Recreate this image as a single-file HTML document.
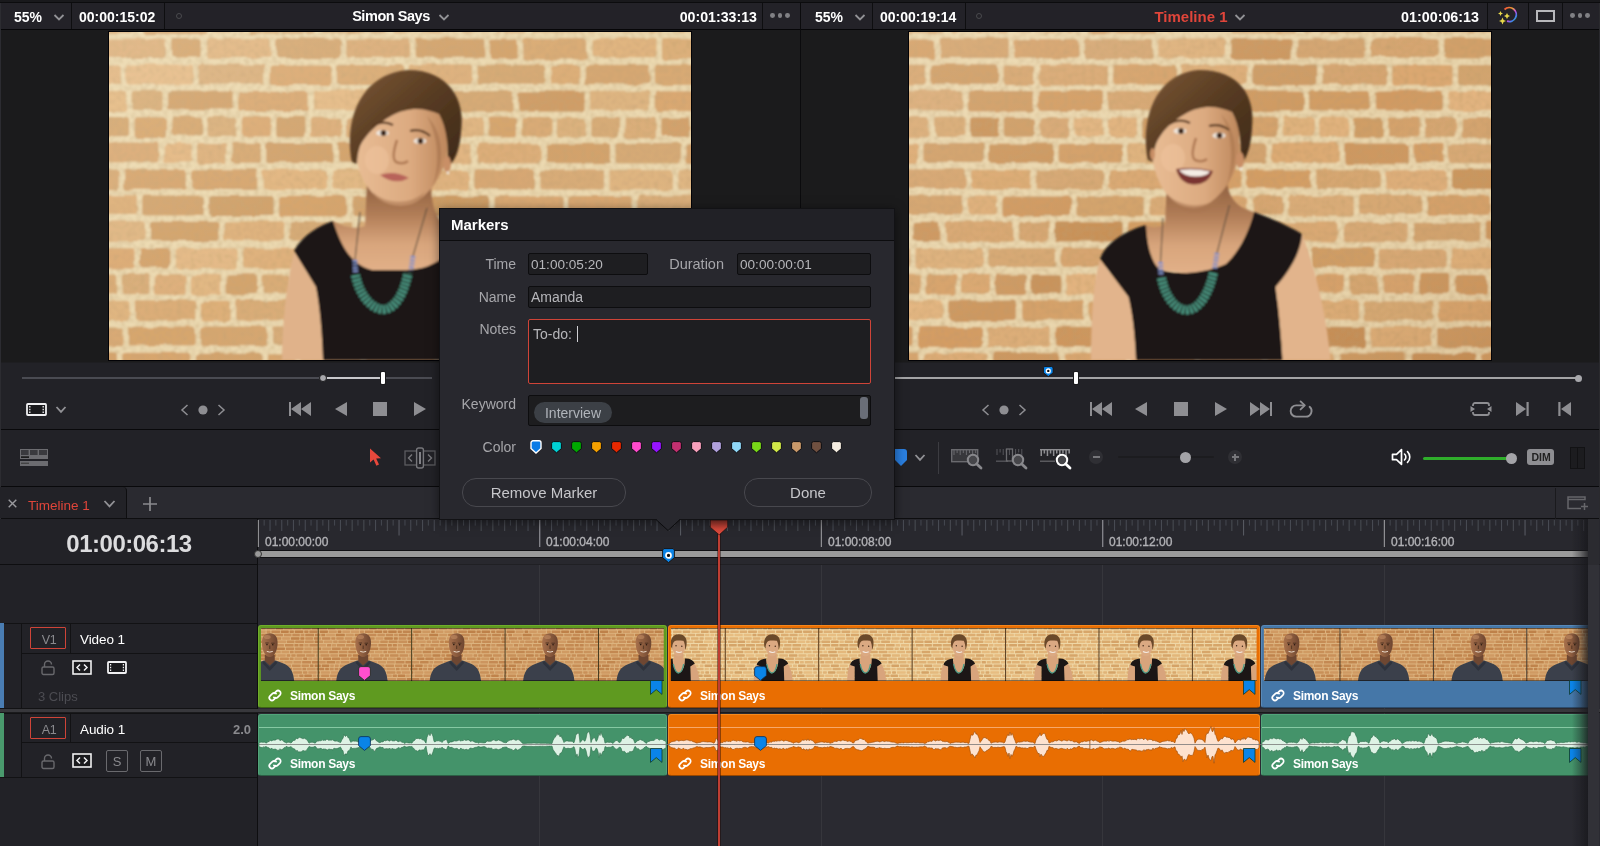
<!DOCTYPE html><html><head><meta charset="utf-8"><title>Timeline 1</title><style>
*{box-sizing:border-box;margin:0;padding:0}
html,body{width:1600px;height:846px;overflow:hidden;background:#28282e;font-family:"Liberation Sans",sans-serif;}
#app{position:relative;width:1600px;height:846px;overflow:hidden;background:#28282e;color:#fff}
.a{position:absolute}
.t{position:absolute;white-space:nowrap;line-height:1;will-change:transform}
.vl{position:absolute;width:1px;background:#0e0e10}
.hl{position:absolute;height:1px;background:#0e0e10}
svg{position:absolute;overflow:visible}
</style></head><body><div id="app">
<div class="a" style="left:0px;top:0px;width:1600px;height:3px;background:#19191c;"></div>
<div class="a" style="left:0px;top:2px;width:1600px;height:1px;background:#0c0c0e;"></div>
<div class="a" style="left:0px;top:3px;width:1600px;height:26px;background:#232228;"></div>
<div class="a" style="left:0px;top:29px;width:1600px;height:1px;background:#060608;"></div>
<div class="a" style="left:0px;top:30px;width:1600px;height:333px;background:#1b1b1c;"></div>
<div class="a" style="left:0px;top:362px;width:1600px;height:1px;background:#1e1e21;"></div>
<div class="a" style="left:800px;top:3px;width:1px;height:360px;background:#0b0b0d;"></div>
<div class="a" style="left:0px;top:363px;width:1600px;height:66px;background:#222227;"></div>
<div class="a" style="left:0px;top:429px;width:1600px;height:1px;background:#09090b;"></div>
<div class="a" style="left:0px;top:430px;width:1600px;height:56px;background:#222227;"></div>
<div class="a" style="left:0px;top:486px;width:1600px;height:1px;background:#09090b;"></div>
<div class="a" style="left:0px;top:487px;width:1600px;height:31px;background:#2a2a30;"></div>
<div class="a" style="left:0px;top:518px;width:1600px;height:1px;background:#0e0e10;"></div>
<div class="a" style="left:108px;top:31px;width:584px;height:330px;background:#020206;"></div>
<div class="a" style="left:908px;top:31px;width:584px;height:330px;background:#020206;"></div>
<div class="t" style="left:14px;top:9.6px;font-size:14px;color:#fff;font-weight:bold;">55%</div>
<svg style="left:54.0px;top:14.5px" width="10" height="5" viewBox="0 0 10 5"><path d="M0.5 0 L5.0 4.4 L9.5 0" fill="none" stroke="#929296" stroke-width="1.8"/></svg>
<div class="a" style="left:71px;top:3px;width:1px;height:26px;background:#0e0e10;"></div>
<div class="t" style="left:79px;top:9.6px;font-size:14px;color:#fff;font-weight:bold;">00:00:15:02</div>
<div class="a" style="left:164px;top:3px;width:1px;height:26px;background:#0e0e10;"></div>
<div class="a" style="left:176px;top:13px;width:6px;height:6px;background:transparent;border:1px solid #4a4a4e;border-radius:50%"></div>
<div class="t" style="left:191px;width:400px;text-align:center;top:9.4px;font-size:14.5px;color:#fff;font-weight:bold;letter-spacing:-0.45px">Simon Says</div>
<svg style="left:439.0px;top:14.5px" width="10" height="5" viewBox="0 0 10 5"><path d="M0.5 0 L5.0 4.4 L9.5 0" fill="none" stroke="#929296" stroke-width="1.8"/></svg>
<div class="t" style="left:357px;width:400px;text-align:right;top:9.6px;font-size:14.2px;color:#fff;font-weight:bold;">00:01:33:13</div>
<div class="a" style="left:762px;top:3px;width:1px;height:26px;background:#0e0e10;"></div>
<div class="a" style="left:769.8000000000001px;top:13.2px;width:4.8px;height:4.8px;background:#808084;border-radius:50%"></div>
<div class="a" style="left:777.6px;top:13.2px;width:4.8px;height:4.8px;background:#808084;border-radius:50%"></div>
<div class="a" style="left:785.4px;top:13.2px;width:4.8px;height:4.8px;background:#808084;border-radius:50%"></div>
<div class="t" style="left:815px;top:9.6px;font-size:14px;color:#fff;font-weight:bold;">55%</div>
<svg style="left:855.0px;top:14.5px" width="10" height="5" viewBox="0 0 10 5"><path d="M0.5 0 L5.0 4.4 L9.5 0" fill="none" stroke="#929296" stroke-width="1.8"/></svg>
<div class="a" style="left:872px;top:3px;width:1px;height:26px;background:#0e0e10;"></div>
<div class="t" style="left:880px;top:9.6px;font-size:14px;color:#fff;font-weight:bold;">00:00:19:14</div>
<div class="a" style="left:965px;top:3px;width:1px;height:26px;background:#0e0e10;"></div>
<div class="a" style="left:976px;top:13px;width:6px;height:6px;background:transparent;border:1px solid #4a4a4e;border-radius:50%"></div>
<div class="t" style="left:991px;width:400px;text-align:center;top:9.2px;font-size:15px;color:#e0453a;font-weight:bold;">Timeline 1</div>
<svg style="left:1235.0px;top:14.5px" width="10" height="5" viewBox="0 0 10 5"><path d="M0.5 0 L5.0 4.4 L9.5 0" fill="none" stroke="#929296" stroke-width="1.8"/></svg>
<div class="t" style="left:1079px;width:400px;text-align:right;top:9.6px;font-size:14.3px;color:#fff;font-weight:bold;">01:00:06:13</div>
<div class="a" style="left:1487px;top:3px;width:1px;height:26px;background:#0e0e10;"></div>
<div class="a" style="left:1528px;top:3px;width:1px;height:26px;background:#0e0e10;"></div>
<div class="a" style="left:1562px;top:3px;width:1px;height:26px;background:#0e0e10;"></div>
<div class="a" style="left:1569.8px;top:13.2px;width:4.8px;height:4.8px;background:#808084;border-radius:50%"></div>
<div class="a" style="left:1577.6px;top:13.2px;width:4.8px;height:4.8px;background:#808084;border-radius:50%"></div>
<div class="a" style="left:1585.3999999999999px;top:13.2px;width:4.8px;height:4.8px;background:#808084;border-radius:50%"></div>
<svg style="left:1497px;top:5px" width="24" height="22" viewBox="0 0 24 22">
<defs><linearGradient id="cw" x1="0" y1="0" x2="1" y2="1"><stop offset="0" stop-color="#f04a3a"/><stop offset="0.35" stop-color="#f0a030"/><stop offset="0.6" stop-color="#c050e0"/><stop offset="0.8" stop-color="#4080f0"/><stop offset="1" stop-color="#40d060"/></linearGradient></defs>
<path d="M7.5 4.5 A7 7 0 1 1 10 16.2" fill="none" stroke="url(#cw)" stroke-width="1.8"/>
<path d="M3.5 6 l0.8 1.7 l1.7 0.8 l-1.7 0.8 l-0.8 1.7 l-0.8 -1.7 l-1.7 -0.8 l1.7 -0.8z M10 8 l1 2 l2 1 l-2 1 l-1 2 l-1 -2 l-2 -1 l2 -1z M5.5 12.5 l1.1 2.4 l2.4 1.1 l-2.4 1.1 l-1.1 2.4 l-1.1 -2.4 l-2.4 -1.1 l2.4 -1.1z" fill="#e8d84a"/>
</svg>
<div class="a" style="left:1536px;top:10px;width:19px;height:12px;background:transparent;border:2px solid #b8b8bc"></div>
<div class="a" style="left:1599px;top:3px;width:1px;height:860px;background:#2a2a2e;"></div>
<div class="a" style="left:0px;top:3px;width:1px;height:860px;background:#2c2c31;"></div>
<svg style="left:109px;top:32px" width="582" height="328" viewBox="0 0 582 328"><defs><clipPath id="pc1"><rect width="582" height="328"/></clipPath><filter id="bl1" x="-5%" y="-5%" width="110%" height="110%"><feGaussianBlur stdDeviation="0.9"/></filter><filter id="bw1" x="0" y="0" width="100%" height="100%"><feTurbulence type="fractalNoise" baseFrequency="0.06" numOctaves="2" seed="5" result="n"/><feDisplacementMap in="SourceGraphic" in2="n" scale="5" xChannelSelector="R" yChannelSelector="G" result="d"/><feTurbulence type="fractalNoise" baseFrequency="0.22" numOctaves="2" seed="10" result="n2"/><feColorMatrix in="n2" type="matrix" values="0 0 0 0 0.5  0 0 0 0 0.32  0 0 0 0 0.14  0.7 0.7 0 0 -0.58" result="n3"/><feComposite in="n3" in2="d" operator="atop" result="c"/><feGaussianBlur in="c" stdDeviation="1.0"/></filter><linearGradient id="vg1" x1="0" y1="0" x2="1" y2="1"><stop offset="0" stop-color="#fff4dc" stop-opacity="0.16"/><stop offset="0.5" stop-color="#fff4dc" stop-opacity="0"/><stop offset="1" stop-color="#7a3c08" stop-opacity="0.10"/></linearGradient><linearGradient id="hair1" x1="0" y1="0" x2="1" y2="1"><stop offset="0" stop-color="#7c5836"/><stop offset="0.5" stop-color="#573b22"/><stop offset="1" stop-color="#3c2817"/></linearGradient><linearGradient id="skin1" x1="0" y1="0" x2="1" y2="0"><stop offset="0" stop-color="#e8bc94"/><stop offset="0.6" stop-color="#dcaa80"/><stop offset="1" stop-color="#bd875c"/></linearGradient><linearGradient id="neck1" x1="0" y1="0" x2="0" y2="1"><stop offset="0" stop-color="#8e6040"/><stop offset="0.36" stop-color="#b07c56"/><stop offset="0.7" stop-color="#d8a57c"/><stop offset="1" stop-color="#e2b088"/></linearGradient></defs><g clip-path="url(#pc1)"><rect width="582" height="328" fill="#ecd4a2"/><g filter="url(#bw1)"><rect width="582" height="328" fill="#ead7ae"/><rect x="-36.9" y="-19.1" width="65.3" height="20.1" rx="3" fill="#d6a067"/><rect x="33.8" y="-18.9" width="64.8" height="20.8" rx="3" fill="#cf9a62"/><rect x="104.0" y="-19.9" width="31.1" height="20.1" rx="3" fill="#d5a36d"/><rect x="140.5" y="-19.2" width="66.3" height="20.8" rx="3" fill="#d2a16b"/><rect x="212.2" y="-20.2" width="65.6" height="20.7" rx="3" fill="#c68f55"/><rect x="283.2" y="-19.5" width="63.4" height="19.7" rx="3" fill="#d9aa75"/><rect x="352.0" y="-20.0" width="30.0" height="19.6" rx="3" fill="#d5a671"/><rect x="387.3" y="-19.5" width="29.6" height="20.5" rx="3" fill="#ddad78"/><rect x="422.3" y="-20.2" width="65.2" height="20.4" rx="3" fill="#d5a169"/><rect x="492.9" y="-19.7" width="61.6" height="19.6" rx="3" fill="#e1b27c"/><rect x="559.9" y="-20.2" width="62.6" height="19.7" rx="3" fill="#d2a06a"/><rect x="-10.7" y="6.4" width="67.5" height="19.7" rx="3" fill="#daa974"/><rect x="62.2" y="5.9" width="30.5" height="19.7" rx="3" fill="#d09b63"/><rect x="98.1" y="6.2" width="63.6" height="19.9" rx="3" fill="#deaf7a"/><rect x="167.1" y="6.6" width="64.8" height="19.7" rx="3" fill="#d09e68"/><rect x="237.3" y="6.6" width="63.9" height="19.1" rx="3" fill="#d7a56f"/><rect x="306.6" y="5.8" width="68.8" height="19.9" rx="3" fill="#cd9961"/><rect x="380.8" y="7.4" width="27.9" height="19.8" rx="3" fill="#cf985f"/><rect x="414.2" y="7.0" width="64.0" height="20.6" rx="3" fill="#d5a26b"/><rect x="483.6" y="6.0" width="63.9" height="19.3" rx="3" fill="#dead77"/><rect x="552.9" y="7.1" width="66.3" height="19.8" rx="3" fill="#d9a871"/><rect x="-52.2" y="33.4" width="64.0" height="18.9" rx="3" fill="#dfaf7a"/><rect x="17.2" y="32.5" width="67.0" height="20.1" rx="3" fill="#e4b682"/><rect x="89.7" y="32.6" width="65.5" height="19.0" rx="3" fill="#d7a874"/><rect x="160.5" y="33.4" width="62.0" height="19.7" rx="3" fill="#d7a067"/><rect x="227.9" y="33.1" width="66.4" height="19.9" rx="3" fill="#d5a26b"/><rect x="299.6" y="32.3" width="63.4" height="20.0" rx="3" fill="#daa872"/><rect x="368.4" y="32.7" width="68.0" height="19.0" rx="3" fill="#d1a069"/><rect x="441.8" y="33.0" width="28.6" height="19.4" rx="3" fill="#d9a66e"/><rect x="475.8" y="32.7" width="64.7" height="19.5" rx="3" fill="#d29f68"/><rect x="545.8" y="32.8" width="64.4" height="20.2" rx="3" fill="#d4a169"/><rect x="-46.5" y="59.8" width="63.7" height="20.2" rx="3" fill="#e2b27c"/><rect x="22.6" y="58.7" width="31.0" height="19.4" rx="3" fill="#d3a46e"/><rect x="59.1" y="58.5" width="65.6" height="19.0" rx="3" fill="#cd9860"/><rect x="130.1" y="59.7" width="68.5" height="19.2" rx="3" fill="#d59f67"/><rect x="204.0" y="58.2" width="64.1" height="19.2" rx="3" fill="#e3b580"/><rect x="273.5" y="59.4" width="65.3" height="20.7" rx="3" fill="#dba871"/><rect x="344.1" y="59.1" width="60.5" height="20.5" rx="3" fill="#d1a06a"/><rect x="410.1" y="59.2" width="65.5" height="20.5" rx="3" fill="#cb945c"/><rect x="481.0" y="58.8" width="60.4" height="19.6" rx="3" fill="#dcae79"/><rect x="546.7" y="59.3" width="63.2" height="20.0" rx="3" fill="#d69f66"/><rect x="-46.7" y="85.7" width="31.6" height="19.5" rx="3" fill="#d69f67"/><rect x="-9.7" y="85.1" width="29.8" height="19.1" rx="3" fill="#d09d65"/><rect x="25.6" y="85.3" width="31.4" height="20.7" rx="3" fill="#d39d64"/><rect x="62.4" y="84.5" width="30.8" height="18.9" rx="3" fill="#d19d65"/><rect x="98.6" y="84.7" width="28.8" height="20.1" rx="3" fill="#d5a772"/><rect x="132.8" y="84.5" width="29.0" height="20.0" rx="3" fill="#d8a169"/><rect x="167.2" y="84.7" width="29.3" height="19.6" rx="3" fill="#ce9a62"/><rect x="201.9" y="85.8" width="30.6" height="19.1" rx="3" fill="#d9a66f"/><rect x="238.0" y="85.2" width="31.2" height="20.6" rx="3" fill="#d6a36d"/><rect x="274.6" y="84.6" width="29.2" height="19.0" rx="3" fill="#d79f66"/><rect x="309.1" y="85.4" width="30.5" height="20.6" rx="3" fill="#cf9a62"/><rect x="345.0" y="85.4" width="29.0" height="19.9" rx="3" fill="#deaf7a"/><rect x="379.4" y="85.5" width="27.6" height="19.0" rx="3" fill="#d39c64"/><rect x="412.4" y="85.0" width="30.2" height="19.2" rx="3" fill="#d6a36c"/><rect x="447.9" y="85.8" width="29.0" height="19.9" rx="3" fill="#d8aa75"/><rect x="482.3" y="85.7" width="27.8" height="19.5" rx="3" fill="#d3a36d"/><rect x="515.6" y="85.4" width="31.3" height="20.8" rx="3" fill="#d7a670"/><rect x="552.3" y="85.7" width="28.2" height="19.3" rx="3" fill="#ce975f"/><rect x="-15.9" y="110.6" width="65.4" height="18.8" rx="3" fill="#d5a16a"/><rect x="54.8" y="110.8" width="27.8" height="19.6" rx="3" fill="#e1b17c"/><rect x="88.0" y="112.0" width="29.3" height="19.9" rx="3" fill="#daa973"/><rect x="122.7" y="110.7" width="29.1" height="20.1" rx="3" fill="#d29f68"/><rect x="157.2" y="111.0" width="66.5" height="19.2" rx="3" fill="#cd9860"/><rect x="229.1" y="110.8" width="61.5" height="19.0" rx="3" fill="#cf985f"/><rect x="296.0" y="111.5" width="66.5" height="20.1" rx="3" fill="#dfaf7a"/><rect x="367.8" y="111.6" width="63.9" height="20.0" rx="3" fill="#d9a66f"/><rect x="437.2" y="111.7" width="64.9" height="19.6" rx="3" fill="#ce985f"/><rect x="507.5" y="111.1" width="63.5" height="20.5" rx="3" fill="#d2a16b"/><rect x="576.4" y="111.3" width="65.7" height="20.6" rx="3" fill="#d0985f"/><rect x="-53.3" y="137.6" width="63.1" height="19.6" rx="3" fill="#d3a16b"/><rect x="15.2" y="137.8" width="62.6" height="19.9" rx="3" fill="#d19b63"/><rect x="83.2" y="137.3" width="65.1" height="20.7" rx="3" fill="#d29c63"/><rect x="153.7" y="137.6" width="64.2" height="19.6" rx="3" fill="#e0af78"/><rect x="223.3" y="137.0" width="67.2" height="20.8" rx="3" fill="#dfb17c"/><rect x="295.9" y="138.3" width="64.0" height="20.2" rx="3" fill="#ddac76"/><rect x="365.3" y="137.3" width="60.7" height="20.3" rx="3" fill="#d39e67"/><rect x="431.4" y="138.3" width="63.7" height="19.3" rx="3" fill="#d4a36d"/><rect x="500.5" y="137.9" width="63.5" height="20.4" rx="3" fill="#ddae78"/><rect x="569.4" y="138.0" width="68.8" height="20.5" rx="3" fill="#deb07b"/><rect x="-38.2" y="163.3" width="66.0" height="18.8" rx="3" fill="#daa770"/><rect x="33.2" y="163.5" width="61.6" height="20.0" rx="3" fill="#cf9b63"/><rect x="100.2" y="164.1" width="64.5" height="19.8" rx="3" fill="#cb975f"/><rect x="170.1" y="163.7" width="68.0" height="20.5" rx="3" fill="#d29a61"/><rect x="243.5" y="163.7" width="67.7" height="20.6" rx="3" fill="#ce9a63"/><rect x="316.6" y="164.3" width="63.5" height="19.9" rx="3" fill="#c79057"/><rect x="385.5" y="164.2" width="68.2" height="20.5" rx="3" fill="#d69f66"/><rect x="459.1" y="164.0" width="63.6" height="20.2" rx="3" fill="#d69e65"/><rect x="528.1" y="163.4" width="62.8" height="19.8" rx="3" fill="#d7a670"/><rect x="-30.2" y="189.2" width="66.9" height="19.9" rx="3" fill="#ddaf7a"/><rect x="42.0" y="189.8" width="67.5" height="19.1" rx="3" fill="#ce9961"/><rect x="114.9" y="189.3" width="60.3" height="19.1" rx="3" fill="#dcaa73"/><rect x="180.6" y="189.9" width="62.9" height="18.9" rx="3" fill="#d2a26c"/><rect x="248.9" y="189.8" width="60.2" height="19.6" rx="3" fill="#d8a670"/><rect x="314.5" y="190.2" width="62.4" height="20.1" rx="3" fill="#c99259"/><rect x="382.3" y="190.4" width="64.7" height="19.5" rx="3" fill="#dcae7a"/><rect x="452.5" y="189.7" width="67.1" height="18.9" rx="3" fill="#daa973"/><rect x="525.0" y="190.0" width="66.6" height="18.9" rx="3" fill="#d7a26b"/><rect x="-37.5" y="216.3" width="63.0" height="20.2" rx="3" fill="#d9a26a"/><rect x="30.9" y="216.0" width="30.6" height="19.6" rx="3" fill="#d09961"/><rect x="66.8" y="216.2" width="61.9" height="20.6" rx="3" fill="#e2b47f"/><rect x="134.1" y="216.6" width="68.4" height="20.1" rx="3" fill="#ddaa73"/><rect x="207.9" y="215.7" width="66.4" height="19.6" rx="3" fill="#d49e66"/><rect x="279.7" y="216.1" width="61.8" height="19.3" rx="3" fill="#d09c65"/><rect x="346.9" y="216.6" width="67.6" height="20.4" rx="3" fill="#d9a56e"/><rect x="419.9" y="216.2" width="66.0" height="20.4" rx="3" fill="#ddac77"/><rect x="491.3" y="216.4" width="66.6" height="20.6" rx="3" fill="#d8a770"/><rect x="563.3" y="215.9" width="66.3" height="20.5" rx="3" fill="#e2b37e"/><rect x="-57.2" y="242.9" width="29.9" height="19.3" rx="3" fill="#d7a874"/><rect x="-21.9" y="242.4" width="29.2" height="19.0" rx="3" fill="#d4a16a"/><rect x="12.7" y="242.0" width="27.8" height="20.2" rx="3" fill="#d5a56f"/><rect x="45.9" y="242.2" width="30.7" height="20.6" rx="3" fill="#dba872"/><rect x="81.9" y="242.7" width="30.2" height="20.6" rx="3" fill="#e0b17b"/><rect x="117.5" y="242.2" width="30.7" height="20.0" rx="3" fill="#cf9b64"/><rect x="153.5" y="242.4" width="27.6" height="18.9" rx="3" fill="#d6a46d"/><rect x="186.6" y="241.8" width="27.9" height="20.5" rx="3" fill="#d4a36c"/><rect x="219.8" y="243.0" width="27.8" height="20.1" rx="3" fill="#dead77"/><rect x="253.0" y="242.3" width="27.8" height="19.9" rx="3" fill="#dba770"/><rect x="286.1" y="242.5" width="30.6" height="19.7" rx="3" fill="#d4a26c"/><rect x="322.1" y="243.2" width="28.9" height="19.4" rx="3" fill="#cb935a"/><rect x="356.4" y="242.0" width="29.0" height="19.6" rx="3" fill="#d7a974"/><rect x="390.8" y="241.8" width="29.5" height="19.9" rx="3" fill="#d09c65"/><rect x="425.7" y="242.8" width="28.2" height="19.5" rx="3" fill="#d29a60"/><rect x="459.3" y="242.7" width="31.2" height="20.1" rx="3" fill="#d7a067"/><rect x="495.9" y="242.5" width="27.7" height="19.9" rx="3" fill="#d4a46e"/><rect x="529.0" y="242.8" width="27.8" height="19.4" rx="3" fill="#d9a46c"/><rect x="562.2" y="242.9" width="31.6" height="20.5" rx="3" fill="#d19a61"/><rect x="-41.8" y="268.7" width="62.3" height="19.3" rx="3" fill="#ddad77"/><rect x="25.9" y="268.3" width="60.5" height="20.0" rx="3" fill="#d8a56e"/><rect x="91.8" y="268.7" width="28.9" height="20.7" rx="3" fill="#dba870"/><rect x="126.2" y="268.1" width="68.1" height="20.5" rx="3" fill="#d6a46e"/><rect x="199.7" y="268.3" width="63.6" height="19.0" rx="3" fill="#cf9a62"/><rect x="268.7" y="268.1" width="64.0" height="20.6" rx="3" fill="#d39d64"/><rect x="338.1" y="268.1" width="29.8" height="20.6" rx="3" fill="#d5a46d"/><rect x="373.3" y="269.3" width="66.4" height="19.2" rx="3" fill="#c89259"/><rect x="445.1" y="268.7" width="30.7" height="19.8" rx="3" fill="#cf9d66"/><rect x="481.2" y="269.1" width="65.4" height="20.7" rx="3" fill="#d29b63"/><rect x="552.1" y="268.0" width="65.3" height="20.1" rx="3" fill="#d69e65"/><rect x="-55.3" y="295.4" width="68.9" height="18.8" rx="3" fill="#d5a16a"/><rect x="19.0" y="294.4" width="67.7" height="19.2" rx="3" fill="#d39d64"/><rect x="92.2" y="294.4" width="66.5" height="19.9" rx="3" fill="#d19d65"/><rect x="164.1" y="294.2" width="67.9" height="19.1" rx="3" fill="#d3a36e"/><rect x="237.4" y="295.3" width="66.8" height="19.5" rx="3" fill="#d9a66f"/><rect x="309.6" y="294.3" width="28.4" height="20.3" rx="3" fill="#d8a770"/><rect x="343.4" y="295.5" width="28.2" height="19.6" rx="3" fill="#d7a56e"/><rect x="377.0" y="294.8" width="64.3" height="20.2" rx="3" fill="#daa56d"/><rect x="446.7" y="294.1" width="68.1" height="19.5" rx="3" fill="#ce9b64"/><rect x="520.2" y="295.5" width="61.1" height="20.1" rx="3" fill="#dcac77"/><rect x="-51.6" y="320.3" width="60.5" height="20.7" rx="3" fill="#d09a62"/><rect x="14.3" y="320.7" width="67.2" height="19.8" rx="3" fill="#d49c63"/><rect x="86.9" y="320.8" width="65.6" height="19.9" rx="3" fill="#ce9961"/><rect x="157.9" y="321.3" width="28.5" height="20.5" rx="3" fill="#d49d63"/><rect x="191.8" y="320.9" width="60.4" height="19.4" rx="3" fill="#d9a46c"/><rect x="257.6" y="320.7" width="68.3" height="20.1" rx="3" fill="#cd965d"/><rect x="331.3" y="321.4" width="66.8" height="20.2" rx="3" fill="#d9ab77"/><rect x="403.5" y="320.6" width="29.9" height="19.9" rx="3" fill="#d4a570"/><rect x="438.8" y="321.3" width="65.0" height="19.9" rx="3" fill="#daab76"/><rect x="509.2" y="321.4" width="63.6" height="20.6" rx="3" fill="#e2b37e"/><rect x="578.2" y="320.8" width="62.7" height="20.1" rx="3" fill="#daac77"/></g><rect width="582" height="328" fill="url(#vg1)"/><rect width="582" height="328" fill="#fff2d0" opacity="0.1"/>
<g filter="url(#bl1)">
<path d="M185 220 C178 250 173 290 173 328 L215 328 C214 300 211 275 207 254Z" fill="#e0b28a"/>
<path d="M258 150 L256 194 C245 198 232 194 224 189 C230 214 240 232 262 238 L300 238 C316 237 326 232 334 226 L340 196 C328 190 322 175 322 150Z" fill="url(#neck1)"/>
<path d="M185 219 C194 202 212 193 224 189 C232 214 242 233 263 238 L298 238 C314 237 324 233 332 227 C340 214 344 200 346 186 C380 192 412 206 424 240 L440 328 L214 328 C213 300 211 276 207 255Z" fill="#1a1613"/>
<path d="M251 180 L246 228 M318 176 L304 224" stroke="#5e5040" stroke-width="1.1" fill="none"/>
<path d="M246 228 L246.5 241 M304 224 L302 238" stroke="#7f90c8" stroke-width="5" stroke-dasharray="2 1.4" fill="none"/>
<path d="M246.5 243 C250 262 262 277 274 277.5 C286 277 295 262 299 241" fill="none" stroke="#4a9480" stroke-width="9" stroke-dasharray="2.6 1.3"/>
<path d="M247 115 C246 135 256 158 272 168 C282 175 300 176 310 168 C326 156 336 138 338 120 C340 95 335 72 300 66 C262 66 248 90 247 115Z" fill="url(#skin1)"/>
<path d="M243 130 C235 90 250 42 299 38 C340 38 357 68 352 100 C351 118 345 131 338 136 C340 116 338 96 330 82 C316 76 300 74 282 84 C268 92 257 102 251 114 C249 120 248 126 248 132Z" fill="url(#hair1)"/>
<ellipse cx="338" cy="132" rx="4" ry="8" fill="#c98f66"/><circle cx="339" cy="141" r="1.4" fill="#f0ece4"/><ellipse cx="273.5" cy="101" rx="6.5" ry="3" fill="#efe6dc"/><ellipse cx="311" cy="109" rx="6.5" ry="3" fill="#efe6dc"/><circle cx="274.5" cy="101" r="2.9" fill="#3a2416"/><circle cx="311.5" cy="109" r="2.9" fill="#3a2416"/><ellipse cx="268" cy="128" rx="12" ry="14" fill="#f2c8a2" opacity="0.45"/><path d="M318 84 C334 100 338 130 322 158 C330 140 332 110 318 84Z" fill="#9a6844" opacity="0.45"/>
<path d="M263 94 q10 -6 21 -1 M301 99 q11 -3 20 5" stroke="#5a3a22" stroke-width="2.2" fill="none"/>
<path d="M288 108 q-6 18 -1 22 q7 3 12 -1" stroke="#b07a54" stroke-width="2.5" fill="none"/>
<path d="M271 143 q14 -5 29 3 q-14 8 -29 -3Z" fill="#b8635a"/>
<path d="M264 160 C276 172 300 174 316 160 C304 184 272 182 264 160Z" fill="#a87450" opacity="0.55"/>
</g></g></svg>
<svg style="left:909px;top:32px" width="582" height="328" viewBox="0 0 582 328"><defs><clipPath id="pc2"><rect width="582" height="328"/></clipPath><filter id="bl2" x="-5%" y="-5%" width="110%" height="110%"><feGaussianBlur stdDeviation="0.9"/></filter><filter id="bw2" x="0" y="0" width="100%" height="100%"><feTurbulence type="fractalNoise" baseFrequency="0.06" numOctaves="2" seed="6" result="n"/><feDisplacementMap in="SourceGraphic" in2="n" scale="5" xChannelSelector="R" yChannelSelector="G" result="d"/><feTurbulence type="fractalNoise" baseFrequency="0.22" numOctaves="2" seed="11" result="n2"/><feColorMatrix in="n2" type="matrix" values="0 0 0 0 0.5  0 0 0 0 0.32  0 0 0 0 0.14  0.7 0.7 0 0 -0.58" result="n3"/><feComposite in="n3" in2="d" operator="atop" result="c"/><feGaussianBlur in="c" stdDeviation="1.0"/></filter><linearGradient id="vg2" x1="0" y1="0" x2="1" y2="1"><stop offset="0" stop-color="#fff4dc" stop-opacity="0.16"/><stop offset="0.5" stop-color="#fff4dc" stop-opacity="0"/><stop offset="1" stop-color="#7a3c08" stop-opacity="0.10"/></linearGradient><linearGradient id="hair2" x1="0" y1="0" x2="1" y2="1"><stop offset="0" stop-color="#7c5836"/><stop offset="0.5" stop-color="#573b22"/><stop offset="1" stop-color="#3c2817"/></linearGradient><linearGradient id="skin2" x1="0" y1="0" x2="1" y2="0"><stop offset="0" stop-color="#e8bc94"/><stop offset="0.6" stop-color="#dcaa80"/><stop offset="1" stop-color="#bd875c"/></linearGradient><linearGradient id="neck2" x1="0" y1="0" x2="0" y2="1"><stop offset="0" stop-color="#8e6040"/><stop offset="0.36" stop-color="#b07c56"/><stop offset="0.7" stop-color="#d8a57c"/><stop offset="1" stop-color="#e2b088"/></linearGradient></defs><g clip-path="url(#pc2)"><rect width="582" height="328" fill="#ecd4a2"/><g filter="url(#bw2)"><rect width="582" height="328" fill="#ead7ae"/><rect x="-33.7" y="-19.3" width="68.8" height="20.1" rx="3" fill="#d6a169"/><rect x="40.4" y="-20.0" width="60.3" height="19.8" rx="3" fill="#d8a36c"/><rect x="106.2" y="-18.8" width="67.7" height="18.9" rx="3" fill="#dbad78"/><rect x="179.3" y="-19.5" width="68.0" height="20.7" rx="3" fill="#d39d64"/><rect x="252.7" y="-19.9" width="65.0" height="19.0" rx="3" fill="#deaf7a"/><rect x="323.1" y="-19.1" width="64.4" height="20.4" rx="3" fill="#d8aa75"/><rect x="392.8" y="-19.2" width="60.2" height="19.5" rx="3" fill="#cc9860"/><rect x="458.5" y="-20.0" width="63.5" height="19.9" rx="3" fill="#e0b07a"/><rect x="527.3" y="-19.1" width="64.8" height="19.2" rx="3" fill="#d09b63"/><rect x="-39.0" y="7.3" width="65.1" height="19.4" rx="3" fill="#d29b62"/><rect x="31.5" y="5.8" width="68.3" height="20.3" rx="3" fill="#d3a16a"/><rect x="105.2" y="7.0" width="64.3" height="19.4" rx="3" fill="#d49f67"/><rect x="174.9" y="6.7" width="69.0" height="20.2" rx="3" fill="#d4a571"/><rect x="249.3" y="6.4" width="66.7" height="19.2" rx="3" fill="#deb07b"/><rect x="321.4" y="7.1" width="61.4" height="19.9" rx="3" fill="#cb945b"/><rect x="388.2" y="7.3" width="68.4" height="19.0" rx="3" fill="#d3a36e"/><rect x="462.0" y="5.9" width="67.7" height="19.0" rx="3" fill="#d6a56f"/><rect x="535.1" y="6.1" width="62.3" height="19.4" rx="3" fill="#d2a069"/><rect x="-46.8" y="32.8" width="63.6" height="19.7" rx="3" fill="#d6a36c"/><rect x="22.2" y="32.3" width="66.9" height="19.5" rx="3" fill="#ce9960"/><rect x="94.5" y="33.4" width="30.6" height="19.5" rx="3" fill="#d5a36c"/><rect x="130.5" y="32.6" width="68.5" height="20.8" rx="3" fill="#d8a66f"/><rect x="204.4" y="32.8" width="62.8" height="19.8" rx="3" fill="#d5a068"/><rect x="272.6" y="32.7" width="65.3" height="19.7" rx="3" fill="#ddac76"/><rect x="343.3" y="32.4" width="64.9" height="20.8" rx="3" fill="#cd9a63"/><rect x="413.6" y="32.4" width="64.3" height="19.8" rx="3" fill="#d5a46f"/><rect x="483.3" y="33.0" width="60.3" height="20.8" rx="3" fill="#dca871"/><rect x="549.0" y="32.9" width="68.3" height="20.3" rx="3" fill="#d3a46e"/><rect x="-14.3" y="58.3" width="67.8" height="19.9" rx="3" fill="#d9a974"/><rect x="58.8" y="59.1" width="65.0" height="20.4" rx="3" fill="#cf9a62"/><rect x="129.2" y="58.7" width="63.7" height="20.3" rx="3" fill="#d29a60"/><rect x="198.3" y="58.7" width="60.4" height="19.5" rx="3" fill="#d6a56f"/><rect x="264.1" y="58.4" width="62.3" height="19.3" rx="3" fill="#d29f68"/><rect x="331.8" y="58.5" width="62.9" height="20.8" rx="3" fill="#cf9960"/><rect x="400.1" y="59.0" width="61.4" height="19.6" rx="3" fill="#d19c64"/><rect x="466.9" y="58.5" width="67.0" height="19.9" rx="3" fill="#d19a62"/><rect x="539.3" y="58.9" width="67.3" height="20.0" rx="3" fill="#e3b47f"/><rect x="-10.9" y="84.9" width="30.5" height="20.3" rx="3" fill="#d9a973"/><rect x="25.0" y="84.8" width="30.6" height="19.3" rx="3" fill="#d7a771"/><rect x="61.0" y="85.2" width="28.3" height="19.7" rx="3" fill="#c89056"/><rect x="94.7" y="85.9" width="31.2" height="18.9" rx="3" fill="#ce9a62"/><rect x="131.4" y="85.9" width="28.9" height="20.3" rx="3" fill="#d7a671"/><rect x="165.7" y="85.2" width="28.8" height="19.1" rx="3" fill="#e2b37e"/><rect x="199.9" y="85.4" width="28.0" height="20.3" rx="3" fill="#e1b17c"/><rect x="233.3" y="85.8" width="30.8" height="20.5" rx="3" fill="#cd975f"/><rect x="269.5" y="85.0" width="29.3" height="20.6" rx="3" fill="#cb965e"/><rect x="304.2" y="85.3" width="28.4" height="18.9" rx="3" fill="#cb965e"/><rect x="338.0" y="84.8" width="30.3" height="19.4" rx="3" fill="#d4a16a"/><rect x="373.7" y="84.7" width="31.2" height="19.2" rx="3" fill="#e0b27d"/><rect x="410.3" y="84.8" width="29.0" height="20.1" rx="3" fill="#e2b37e"/><rect x="444.8" y="85.6" width="29.1" height="20.4" rx="3" fill="#d09d65"/><rect x="479.3" y="85.4" width="31.4" height="19.1" rx="3" fill="#d4a16a"/><rect x="516.1" y="85.0" width="31.2" height="19.8" rx="3" fill="#d5a570"/><rect x="552.7" y="85.9" width="31.1" height="20.7" rx="3" fill="#d4a36d"/><rect x="-55.4" y="111.4" width="64.4" height="20.7" rx="3" fill="#dca870"/><rect x="14.3" y="111.0" width="60.4" height="18.9" rx="3" fill="#d09d66"/><rect x="80.1" y="111.6" width="64.1" height="19.3" rx="3" fill="#cc955b"/><rect x="149.6" y="111.8" width="63.5" height="18.9" rx="3" fill="#d39d65"/><rect x="218.5" y="111.0" width="64.9" height="20.0" rx="3" fill="#dfb17c"/><rect x="288.8" y="111.2" width="68.7" height="19.8" rx="3" fill="#d3a36e"/><rect x="362.9" y="110.6" width="66.9" height="20.4" rx="3" fill="#ddaa73"/><rect x="435.2" y="111.6" width="64.8" height="20.7" rx="3" fill="#ce975f"/><rect x="505.4" y="110.8" width="29.2" height="19.2" rx="3" fill="#d39c63"/><rect x="539.9" y="112.2" width="60.5" height="19.0" rx="3" fill="#d8a974"/><rect x="-6.2" y="137.3" width="62.9" height="18.8" rx="3" fill="#d5a36d"/><rect x="62.1" y="137.7" width="60.1" height="19.4" rx="3" fill="#dba870"/><rect x="127.6" y="137.8" width="67.0" height="19.4" rx="3" fill="#d5a671"/><rect x="200.0" y="138.0" width="66.6" height="18.9" rx="3" fill="#daa771"/><rect x="272.0" y="137.7" width="60.4" height="19.2" rx="3" fill="#d7a068"/><rect x="337.8" y="137.4" width="63.9" height="18.9" rx="3" fill="#d49d64"/><rect x="407.1" y="137.2" width="63.8" height="19.8" rx="3" fill="#d6a670"/><rect x="476.3" y="138.1" width="61.2" height="20.1" rx="3" fill="#dfae79"/><rect x="543.0" y="137.1" width="67.2" height="19.9" rx="3" fill="#cb955c"/><rect x="-13.4" y="163.2" width="67.4" height="18.8" rx="3" fill="#d3a16a"/><rect x="59.4" y="163.6" width="28.6" height="18.9" rx="3" fill="#dead77"/><rect x="93.4" y="164.6" width="68.7" height="19.4" rx="3" fill="#d0985e"/><rect x="167.4" y="164.3" width="67.4" height="20.0" rx="3" fill="#d3a26b"/><rect x="240.3" y="164.5" width="65.5" height="19.0" rx="3" fill="#dcac77"/><rect x="311.2" y="164.5" width="28.1" height="18.8" rx="3" fill="#d9a66f"/><rect x="344.7" y="163.4" width="29.1" height="19.2" rx="3" fill="#d6a56f"/><rect x="379.2" y="163.8" width="65.6" height="20.7" rx="3" fill="#daac77"/><rect x="450.1" y="163.1" width="62.4" height="19.0" rx="3" fill="#d8a872"/><rect x="518.0" y="163.4" width="62.9" height="19.7" rx="3" fill="#d5a068"/><rect x="-32.8" y="190.0" width="30.9" height="19.2" rx="3" fill="#cc975f"/><rect x="3.4" y="189.7" width="28.0" height="19.2" rx="3" fill="#cc945b"/><rect x="36.8" y="189.2" width="67.7" height="20.6" rx="3" fill="#d8a670"/><rect x="109.9" y="189.7" width="30.7" height="19.9" rx="3" fill="#d6a56f"/><rect x="146.0" y="190.2" width="67.7" height="19.4" rx="3" fill="#c89057"/><rect x="219.1" y="189.5" width="63.5" height="19.5" rx="3" fill="#d39c62"/><rect x="288.1" y="189.7" width="68.3" height="19.3" rx="3" fill="#e2b37d"/><rect x="361.8" y="190.3" width="67.6" height="19.2" rx="3" fill="#daa872"/><rect x="434.8" y="190.1" width="63.9" height="20.1" rx="3" fill="#d8a974"/><rect x="504.1" y="190.7" width="67.2" height="18.9" rx="3" fill="#d3a36d"/><rect x="576.7" y="189.4" width="62.8" height="19.2" rx="3" fill="#cd965d"/><rect x="-62.5" y="215.9" width="63.4" height="19.1" rx="3" fill="#d7a46d"/><rect x="6.4" y="216.7" width="67.7" height="19.6" rx="3" fill="#deb07c"/><rect x="79.5" y="216.2" width="67.4" height="18.9" rx="3" fill="#d7a873"/><rect x="152.3" y="215.9" width="64.4" height="19.1" rx="3" fill="#d7a56f"/><rect x="222.0" y="216.7" width="67.1" height="19.3" rx="3" fill="#d9a46c"/><rect x="294.6" y="216.1" width="67.3" height="20.1" rx="3" fill="#d29a61"/><rect x="367.3" y="216.4" width="30.2" height="20.1" rx="3" fill="#cb945a"/><rect x="402.9" y="215.8" width="62.4" height="19.3" rx="3" fill="#d09c64"/><rect x="470.7" y="216.9" width="66.9" height="19.5" rx="3" fill="#d9a974"/><rect x="543.0" y="216.4" width="67.4" height="20.6" rx="3" fill="#e0b07a"/><rect x="-17.6" y="241.7" width="29.6" height="19.3" rx="3" fill="#d7a56e"/><rect x="17.4" y="242.8" width="30.1" height="19.9" rx="3" fill="#d7a26b"/><rect x="52.9" y="242.1" width="28.1" height="19.0" rx="3" fill="#dba871"/><rect x="86.4" y="242.4" width="30.7" height="20.6" rx="3" fill="#cf9a63"/><rect x="122.5" y="242.3" width="29.9" height="19.3" rx="3" fill="#c9935b"/><rect x="157.8" y="243.1" width="31.5" height="19.4" rx="3" fill="#e3b47f"/><rect x="194.7" y="242.5" width="30.2" height="19.2" rx="3" fill="#d7a46e"/><rect x="230.3" y="241.9" width="28.2" height="20.5" rx="3" fill="#d29a61"/><rect x="263.8" y="241.7" width="30.2" height="19.2" rx="3" fill="#d9a46c"/><rect x="299.4" y="242.4" width="30.8" height="18.8" rx="3" fill="#daa66e"/><rect x="335.7" y="242.7" width="31.4" height="20.2" rx="3" fill="#dcae7a"/><rect x="372.4" y="242.7" width="27.9" height="18.8" rx="3" fill="#d9a973"/><rect x="405.8" y="241.6" width="29.2" height="18.9" rx="3" fill="#d8a169"/><rect x="440.4" y="242.7" width="28.9" height="20.4" rx="3" fill="#d6a670"/><rect x="474.7" y="241.8" width="30.0" height="19.3" rx="3" fill="#d8a36c"/><rect x="510.1" y="241.8" width="31.1" height="19.9" rx="3" fill="#cd975f"/><rect x="546.6" y="243.0" width="31.4" height="19.0" rx="3" fill="#d09961"/><rect x="-31.3" y="268.3" width="65.1" height="19.2" rx="3" fill="#e3b580"/><rect x="39.2" y="268.4" width="68.6" height="20.7" rx="3" fill="#ce9860"/><rect x="113.2" y="268.2" width="61.8" height="20.3" rx="3" fill="#d5a169"/><rect x="180.4" y="269.4" width="64.9" height="19.7" rx="3" fill="#d9a56d"/><rect x="250.7" y="267.9" width="63.7" height="19.3" rx="3" fill="#d2a06a"/><rect x="319.8" y="269.3" width="63.2" height="20.7" rx="3" fill="#d19b62"/><rect x="388.4" y="268.0" width="61.8" height="19.8" rx="3" fill="#dead77"/><rect x="455.6" y="269.3" width="68.8" height="19.1" rx="3" fill="#d8aa75"/><rect x="529.8" y="268.7" width="68.6" height="20.1" rx="3" fill="#daa66e"/><rect x="-59.4" y="294.4" width="63.0" height="19.4" rx="3" fill="#d29e67"/><rect x="9.0" y="295.1" width="64.0" height="20.6" rx="3" fill="#d49c63"/><rect x="78.4" y="294.9" width="63.2" height="20.0" rx="3" fill="#ddad78"/><rect x="146.9" y="294.8" width="62.6" height="19.1" rx="3" fill="#cd955c"/><rect x="214.9" y="294.1" width="68.3" height="20.1" rx="3" fill="#cd9860"/><rect x="288.7" y="294.5" width="64.0" height="19.3" rx="3" fill="#d6a670"/><rect x="358.1" y="294.1" width="27.6" height="20.1" rx="3" fill="#d6a772"/><rect x="391.0" y="294.8" width="65.0" height="20.7" rx="3" fill="#c78f56"/><rect x="461.4" y="294.8" width="61.4" height="20.3" rx="3" fill="#deae78"/><rect x="528.2" y="294.9" width="62.1" height="20.3" rx="3" fill="#cf9a63"/><rect x="-52.2" y="320.4" width="61.8" height="19.7" rx="3" fill="#d5a46e"/><rect x="15.0" y="321.2" width="63.7" height="19.1" rx="3" fill="#ddac76"/><rect x="84.1" y="320.3" width="66.2" height="20.2" rx="3" fill="#cc965e"/><rect x="155.7" y="321.6" width="60.2" height="20.3" rx="3" fill="#d9a56d"/><rect x="221.4" y="321.4" width="63.3" height="19.3" rx="3" fill="#cd955c"/><rect x="290.0" y="321.0" width="62.4" height="20.2" rx="3" fill="#d6a36c"/><rect x="357.9" y="321.5" width="67.4" height="20.6" rx="3" fill="#deac75"/><rect x="430.6" y="320.6" width="66.0" height="19.8" rx="3" fill="#cf9b64"/><rect x="502.0" y="321.1" width="64.4" height="19.2" rx="3" fill="#cb935a"/><rect x="571.8" y="320.9" width="62.9" height="19.2" rx="3" fill="#d69f66"/></g><rect width="582" height="328" fill="url(#vg2)"/><rect width="582" height="328" fill="#fff2d0" opacity="0"/>
<g filter="url(#bl2)">
<path d="M191 228 C184 250 182 290 182 328 L227 328 C226 304 224 284 219.5 265Z" fill="#e2b48c"/>
<path d="M393 202 C406 236 418 284 421.5 328 L373.5 328 C372 300 370 276 366.5 255Z" fill="#e2b48c"/>
<path d="M258 150 L256 192 C250 196 242 196 237 193 C238 214 242 232 252 238 L278 241 C294 240 308 236 317 232 C330 220 340 200 345 180 C330 176 320 168 318 150Z" fill="url(#neck2)"/>
<path d="M191 227 C198 208 220 198 237 193 C238 214 243 233 252 238 C262 241 270 241 278 241 C294 240 308 236 317 232 C330 220 340 200 345 180 C362 186 380 194 393 202 C392 222 378 242 366.5 255 C370 280 372 304 373.5 328 L227 328 C226 304 224 284 219.5 265Z" fill="#1a1613"/>
<path d="M254 186 L251.5 230 M320.5 173 L308 221" stroke="#5e5040" stroke-width="1.1" fill="none"/>
<path d="M251.5 230 L252 244 M308 221 L305.5 237" stroke="#7f90c8" stroke-width="5" stroke-dasharray="2 1.4" fill="none"/>
<path d="M252.5 246 C256 264 266 278 278 278 C290 277.5 300 262 304.5 240" fill="none" stroke="#4a9480" stroke-width="9" stroke-dasharray="2.6 1.3"/>
<path d="M243 112 C242 134 250 158 266 170 C276 177 292 178 302 170 C318 158 328 140 330 120 C332 94 328 70 294 64 C258 64 244 88 243 112Z" fill="url(#skin2)"/>
<path d="M239 128 C231 88 246 42 289 38 C330 37 347 64 343 96 C342 116 337 128 331 134 C333 114 331 94 323 80 C309 74 293 72 276 82 C262 90 252 100 247 112 C245 118 244 124 244 130Z" fill="url(#hair2)"/>
<ellipse cx="331" cy="128" rx="4" ry="8" fill="#c98f66"/><circle cx="332" cy="137" r="1.4" fill="#f0ece4"/><ellipse cx="243.5" cy="122" rx="2.5" ry="6" fill="#c98f66"/><ellipse cx="271" cy="99" rx="6.5" ry="3" fill="#efe6dc"/><ellipse cx="310" cy="103.5" rx="6.5" ry="3" fill="#efe6dc"/><circle cx="272" cy="99" r="2.9" fill="#3a2416"/><circle cx="310.5" cy="103.5" r="2.9" fill="#3a2416"/><ellipse cx="264" cy="126" rx="12" ry="14" fill="#f2c8a2" opacity="0.45"/><path d="M312 82 C328 98 332 128 316 158 C324 138 326 108 312 82Z" fill="#9a6844" opacity="0.4"/>
<path d="M260 92 q10 -6 21 -1 M300 94 q11 -3 20 4" stroke="#5a3a22" stroke-width="2.2" fill="none"/>
<path d="M287 106 q-6 18 -1 22 q7 3 12 -1" stroke="#b07a54" stroke-width="2.5" fill="none"/>
<path d="M267 137 q18 -3 37 2 q-5 14 -20 13.5 q-13 -1 -17 -15.5Z" fill="#7a3630"/>
<path d="M270 138 q16 -2 31 1.6 q-3 5 -15 5 q-11 -0.6 -16 -6.600Z" fill="#f4ece4"/>
<path d="M258 162 C272 176 298 178 314 162 C302 188 268 186 258 162Z" fill="#a87450" opacity="0.55"/>
</g></g></svg>
<div class="a" style="left:22px;top:377px;width:410px;height:2px;background:#4a4b52;"></div>
<div class="a" style="left:323px;top:377px;width:60px;height:2px;background:#c8c8cc;"></div>
<div class="a" style="left:319px;top:374px;width:8px;height:8px;background:#a8a8ac;border-radius:50%;border:1px solid #1a1a1c"></div>
<div class="a" style="left:380.5px;top:372px;width:4px;height:12px;background:#fff;border-radius:1px;box-shadow:0 0 0 1px #1a1a1c"></div>
<div class="a" style="left:895px;top:377px;width:683px;height:2px;background:#a4a4a6;"></div>
<div class="a" style="left:1574.5px;top:374.5px;width:7px;height:7px;background:#a8a8ac;border-radius:50%"></div>
<div class="a" style="left:1073.5px;top:372px;width:4px;height:12px;background:#fff;border-radius:1px;box-shadow:0 0 0 1px #1a1a1c"></div>
<svg style="left:1043.2px;top:365.6px" width="10.6" height="11" viewBox="0 0 10.6 11"><path d="M0.5 1.8 l1.3 -1.3 h7 l1.3 1.3 v5 l-4.800 3.800 l-4.8 -3.8z" fill="#0a84e8" stroke="#1a0e08" stroke-width="0.8"/><circle cx="5.3" cy="4.9" r="1.9" fill="#0c0c0c" stroke="#fff" stroke-width="1.4"/></svg>
<svg style="left:26px;top:403px" width="21" height="13" viewBox="0 0 21 13"><rect x="1" y="1" width="19" height="11" rx="0.8" fill="#1a1a1d" stroke="#f0f0f2" stroke-width="1.8"/><path d="M3.8 3v1.5M3.800 5.800v1.500M3.800 8.600v1.500M17.200 3v1.500M17.200 5.800v1.500M17.200 8.600v1.500" stroke="#f0f0f2" stroke-width="1.3"/></svg>
<svg style="left:55.5px;top:407.25px" width="10" height="5.5" viewBox="0 0 10 5.5"><path d="M0.5 0 L5.0 4.9 L9.5 0" fill="none" stroke="#929296" stroke-width="1.8"/></svg>
<svg style="left:181px;top:404px" width="44" height="12" viewBox="0 0 44 12"><path d="M6.5 1 L1 6 L6.5 11" fill="none" stroke="#8e8e92" stroke-width="1.5"/><circle cx="22" cy="6" r="4.6" fill="#8e8e92"/><path d="M37.5 1 L43 6 L37.5 11" fill="none" stroke="#8e8e92" stroke-width="1.5"/></svg>
<svg style="left:982px;top:404px" width="44" height="12" viewBox="0 0 44 12"><path d="M6.5 1 L1 6 L6.5 11" fill="none" stroke="#8e8e92" stroke-width="1.5"/><circle cx="22" cy="6" r="4.6" fill="#8e8e92"/><path d="M37.5 1 L43 6 L37.5 11" fill="none" stroke="#8e8e92" stroke-width="1.5"/></svg>
<svg style="left:289px;top:402px" width="22" height="14" viewBox="0 0 22 14"><rect x="0" y="0" width="2" height="14" fill="#8e8e92"/><path d="M12 0 L2 7 L12 14Z M22 0 L12 7 L22 14Z" fill="#8e8e92"/></svg>
<svg style="left:335px;top:402px" width="12" height="14" viewBox="0 0 12 14"><path d="M12 0 L0 7 L12 14Z" fill="#8e8e92"/></svg>
<div class="a" style="left:373px;top:402px;width:14px;height:14px;background:#8e8e92;"></div>
<svg style="left:414px;top:402px" width="12" height="14" viewBox="0 0 12 14"><path d="M0 0 L12 7 L0 14Z" fill="#8e8e92"/></svg>
<svg style="left:1090px;top:402px" width="22" height="14" viewBox="0 0 22 14"><rect x="0" y="0" width="2" height="14" fill="#8e8e92"/><path d="M12 0 L2 7 L12 14Z M22 0 L12 7 L22 14Z" fill="#8e8e92"/></svg>
<svg style="left:1135px;top:402px" width="12" height="14" viewBox="0 0 12 14"><path d="M12 0 L0 7 L12 14Z" fill="#8e8e92"/></svg>
<div class="a" style="left:1174px;top:402px;width:14px;height:14px;background:#8e8e92;"></div>
<svg style="left:1215px;top:402px" width="12" height="14" viewBox="0 0 12 14"><path d="M0 0 L12 7 L0 14Z" fill="#8e8e92"/></svg>
<svg style="left:1250px;top:402px" width="22" height="14" viewBox="0 0 22 14"><rect x="20" y="0" width="2" height="14" fill="#8e8e92"/><path d="M0 0 L10 7 L0 14Z M10 0 L20 7 L10 14Z" fill="#8e8e92"/></svg>
<svg style="left:1289px;top:400px" width="24" height="18" viewBox="0 0 24 18"><path d="M15 5.4 H7.25 A5.6 5.6 0 0 0 7.25 16.6 H16.75 A5.6 5.6 0 0 0 20.6 6.8" fill="none" stroke="#8e8e92" stroke-width="1.9" stroke-linecap="round"/><path d="M11.6 1.4 L15.8 5.4 L11.6 9.4" fill="none" stroke="#8e8e92" stroke-width="1.9" stroke-linecap="round" stroke-linejoin="round"/></svg>
<svg style="left:1470px;top:401px" width="22" height="16" viewBox="0 0 22 16"><rect x="3" y="2" width="16" height="12" rx="2" fill="none" stroke="#8e8e92" stroke-width="1.8"/><rect x="0" y="5" width="6" height="6" fill="#222227"/><rect x="16" y="5" width="6" height="6" fill="#222227"/><path d="M0.5 5 L5 8 L0.5 11Z M21.5 5 L17 8 L21.5 11Z" fill="#8e8e92"/></svg>
<svg style="left:1516px;top:402px" width="13" height="14" viewBox="0 0 13 14"><path d="M0 0 L10 7 L0 14Z" fill="#8e8e92"/><rect x="10.5" y="0" width="2.2" height="14" fill="#8e8e92"/></svg>
<svg style="left:1558px;top:402px" width="13" height="14" viewBox="0 0 13 14"><path d="M13 0 L3 7 L13 14Z" fill="#8e8e92"/><rect x="0.3" y="0" width="2.2" height="14" fill="#8e8e92"/></svg>
<svg style="left:20px;top:449px" width="28" height="17" viewBox="0 0 28 17"><rect x="0" y="0" width="28" height="10" fill="#6c6c70"/><rect x="1" y="1" width="7.6" height="5" fill="#3a3a3e"/><rect x="10" y="1" width="7.6" height="5" fill="#3a3a3e"/><rect x="19" y="1" width="8" height="5" fill="#3a3a3e"/><rect x="1" y="7.4" width="8" height="1.4" fill="#0a0a0a"/><rect x="0" y="12" width="28" height="5" fill="#6c6c70"/><rect x="1" y="13.6" width="8" height="1.4" fill="#444"/></svg>
<svg style="left:369px;top:448px" width="14" height="19" viewBox="0 0 14 19"><path d="M1 0.5 L1 14.5 L4.6 11.4 L7.4 17.8 L10 16.6 L7.2 10.4 L12 10.2Z" fill="#e8483c"/></svg>
<svg style="left:404px;top:447px" width="32" height="22" viewBox="0 0 32 22"><rect x="1" y="4" width="12" height="14" fill="none" stroke="#5c5c60" stroke-width="1.3"/><rect x="19" y="4" width="12" height="14" fill="none" stroke="#5c5c60" stroke-width="1.3"/><rect x="12.6" y="1" width="6.8" height="20" rx="2" fill="#222227" stroke="#77777b" stroke-width="1.4"/><rect x="15.2" y="5" width="1.6" height="12" fill="#9a9a9e"/><path d="M8 7.5 L4.5 11 L8 14.5 M24 7.5 L27.5 11 L24 14.5" fill="none" stroke="#77777b" stroke-width="1.4"/></svg>
<svg style="left:895px;top:449px" width="13" height="17" viewBox="0 0 13 17"><path d="M0 0 h9 a3 3 0 0 1 3 3 v8 l-6 6 l-6 -6z" fill="#2a7fe0"/></svg>
<svg style="left:915.0px;top:455.25px" width="10" height="5.5" viewBox="0 0 10 5.5"><path d="M0.5 0 L5.0 4.9 L9.5 0" fill="none" stroke="#929296" stroke-width="1.8"/></svg>
<div class="a" style="left:938px;top:442px;width:1px;height:32px;background:#3c3c41;"></div>
<svg style="left:951px;top:449px" width="31" height="20" viewBox="0 0 31 20"><rect x="0.7" y="0.7" width="26" height="12" fill="#38383c" stroke="#6a6a6e" stroke-width="1.4"/><rect x="2.5" y="1" width="1" height="5" fill="#6a6a6e"/><rect x="5.6" y="1" width="1" height="3" fill="#6a6a6e"/><rect x="8.7" y="1" width="1" height="5" fill="#6a6a6e"/><rect x="11.8" y="1" width="1" height="3" fill="#6a6a6e"/><rect x="14.9" y="1" width="1" height="5" fill="#6a6a6e"/><rect x="18.0" y="1" width="1" height="3" fill="#6a6a6e"/><rect x="21.1" y="1" width="1" height="5" fill="#6a6a6e"/><rect x="24.2" y="1" width="1" height="3" fill="#6a6a6e"/><circle cx="22" cy="11" r="5.2" fill="#46464a" stroke="#88888c" stroke-width="2"/><path d="M25.8 15 L30 19" stroke="#88888c" stroke-width="2.8" stroke-linecap="round"/></svg>
<svg style="left:996px;top:449px" width="31" height="20" viewBox="0 0 31 20"><rect x="0.5" y="0" width="1" height="6" fill="#55555a"/><rect x="3.6" y="0" width="1" height="3.5" fill="#55555a"/><rect x="6.7" y="0" width="1" height="6" fill="#55555a"/><rect x="9.8" y="0" width="1" height="3.5" fill="#55555a"/><rect x="12.9" y="0" width="1" height="6" fill="#55555a"/><rect x="16.0" y="0" width="1" height="3.5" fill="#55555a"/><rect x="19.1" y="0" width="1" height="6" fill="#55555a"/><rect x="22.2" y="0" width="1" height="3.5" fill="#55555a"/><rect x="25.3" y="0" width="1" height="6" fill="#55555a"/><rect x="0" y="11.5" width="12" height="1.4" fill="#55555a"/><rect x="10.5" y="0" width="6" height="12" fill="none" stroke="#6a6a6e" stroke-width="1.3"/><circle cx="22" cy="11" r="5.2" fill="#46464a" stroke="#88888c" stroke-width="2"/><path d="M25.8 15 L30 19" stroke="#88888c" stroke-width="2.8" stroke-linecap="round"/></svg>
<svg style="left:1040px;top:449px" width="31" height="20" viewBox="0 0 31 20"><rect x="0.5" y="0" width="1.5" height="7" fill="#8e8e92"/><rect x="3.6" y="0" width="1.5" height="4.5" fill="#8e8e92"/><rect x="6.7" y="0" width="1.5" height="7" fill="#8e8e92"/><rect x="9.8" y="0" width="1.5" height="4.5" fill="#8e8e92"/><rect x="12.9" y="0" width="1.5" height="7" fill="#8e8e92"/><rect x="16.0" y="0" width="1.5" height="4.5" fill="#8e8e92"/><rect x="19.1" y="0" width="1.5" height="7" fill="#8e8e92"/><rect x="22.2" y="0" width="1.5" height="4.5" fill="#8e8e92"/><rect x="25.3" y="0" width="1.5" height="7" fill="#8e8e92"/><rect x="28.400000000000002" y="0" width="1.5" height="4.5" fill="#8e8e92"/><rect x="0" y="0" width="29" height="1.4" fill="#8e8e92"/><rect x="0" y="11.5" width="15" height="1.5" fill="#5a5a5e"/><circle cx="22" cy="11" r="5.2" fill="#46464a" stroke="#fff" stroke-width="2"/><path d="M25.8 15 L30 19" stroke="#fff" stroke-width="2.8" stroke-linecap="round"/></svg>
<div class="a" style="left:1089px;top:450px;width:14px;height:14px;background:#2f2f34;border-radius:50%"></div>
<div class="a" style="left:1092.5px;top:456.3px;width:7px;height:1.6px;background:#77777b;"></div>
<div class="a" style="left:1118px;top:456px;width:96px;height:2.4px;background:#1c1c1f;border-radius:1px"></div>
<div class="a" style="left:1179.5px;top:451.5px;width:11px;height:11px;background:#a4a4a8;border-radius:50%"></div>
<div class="a" style="left:1228px;top:450px;width:14px;height:14px;background:#2f2f34;border-radius:50%"></div>
<div class="a" style="left:1231.5px;top:456.3px;width:7px;height:1.6px;background:#77777b;"></div>
<div class="a" style="left:1234.2px;top:453.5px;width:1.6px;height:7px;background:#77777b;"></div>
<svg style="left:1391px;top:448px" width="22" height="18" viewBox="0 0 22 18"><path d="M1.5 6.3 h4 l5 -4.6 v14.6 l-5 -4.6 h-4z" fill="none" stroke="#fff" stroke-width="1.7" stroke-linejoin="round"/><path d="M13.5 6 a4 4 0 0 1 0 6" fill="none" stroke="#fff" stroke-width="1.6" stroke-linecap="round"/><path d="M16.5 3.6 a7.5 7.5 0 0 1 0 10.8" fill="none" stroke="#fff" stroke-width="1.6" stroke-linecap="round"/></svg>
<div class="a" style="left:1423px;top:456.5px;width:86px;height:3.4px;background:#2fae2b;border-radius:2px"></div>
<div class="a" style="left:1506px;top:453px;width:11px;height:11px;background:#a4a4a8;border-radius:50%"></div>
<div class="a" style="left:1527px;top:449px;width:27px;height:16px;background:#8e8e92;border-radius:3px"></div>
<div class="t" style="left:1340.5px;width:400px;text-align:center;top:452px;font-size:10.5px;color:#222;font-weight:bold;">DIM</div>
<div class="a" style="left:1570px;top:447px;width:15px;height:22px;background:#1c1c1f;border:1px solid #121214"></div>
<div class="a" style="left:1577px;top:447px;width:1px;height:22px;background:#121214;"></div>
<div class="a" style="left:0px;top:487px;width:127px;height:31px;background:#222227;border-right:1px solid #0e0e10;border-top-right-radius:4px"></div>
<svg style="left:8px;top:499px" width="9" height="9" viewBox="0 0 9 9"><path d="M0.7 0.7 L8.3 8.3 M8.3 0.7 L0.7 8.3" stroke="#9a9a9e" stroke-width="1.4"/></svg>
<div class="t" style="left:28px;top:498.6px;font-size:13.5px;color:#e0453a;font-weight:normal;">Timeline 1</div>
<svg style="left:103.5px;top:500.5px" width="11" height="6" viewBox="0 0 11 6"><path d="M0.5 0 L5.5 5.4 L10.5 0" fill="none" stroke="#929296" stroke-width="1.8"/></svg>
<svg style="left:143px;top:497px" width="14" height="14" viewBox="0 0 14 14"><path d="M7 0 V14 M0 7 H14" stroke="#8a8a8e" stroke-width="1.7"/></svg>
<div class="a" style="left:1555px;top:488px;width:1px;height:31px;background:#1a1a1d;"></div>
<svg style="left:1567px;top:496px" width="22" height="15" viewBox="0 0 22 15"><path d="M1 3.5 h17 v-2.5 h-17 v11.5 h13" fill="none" stroke="#66666a" stroke-width="1.5"/><path d="M17.5 7 v7 M14 10.5 h7" stroke="#66666a" stroke-width="1.5"/></svg>
<div class="a" style="left:0px;top:519px;width:257px;height:45px;background:#222227;"></div>
<div class="a" style="left:0px;top:564px;width:257px;height:1px;background:#0e0e10;"></div>
<div class="a" style="left:0px;top:565px;width:257px;height:281px;background:#222227;"></div>
<div class="a" style="left:258px;top:519px;width:1342px;height:45px;background:#28282e;"></div>
<div class="a" style="left:258px;top:564px;width:1342px;height:1px;background:#202024;"></div>
<div class="a" style="left:258px;top:565px;width:1342px;height:281px;background:#2a2a31;"></div>
<div class="a" style="left:257px;top:519px;width:1px;height:327px;background:#0e0e10;"></div>
<div class="a" style="left:1588px;top:519px;width:10px;height:327px;background:#2f2f35;"></div>
<div class="t" style="left:-71.5px;width:400px;text-align:center;top:531.6px;font-size:24px;color:#dcdcde;font-weight:bold;letter-spacing:-0.5px">01:00:06:13</div>
<svg style="left:0;top:519.5px" width="1600" height="30" viewBox="0 0 1600 30"><rect x="257.8" y="0" width="1.1" height="27" fill="#9a9a9e"/><rect x="263.6" y="0" width="1.1" height="5.6" fill="#42454d"/><rect x="269.5" y="0" width="1.1" height="11" fill="#474a52"/><rect x="275.3" y="0" width="1.1" height="5.6" fill="#42454d"/><rect x="281.2" y="0" width="1.1" height="11" fill="#474a52"/><rect x="287.1" y="0" width="1.1" height="5.6" fill="#42454d"/><rect x="292.9" y="0" width="1.1" height="11" fill="#474a52"/><rect x="298.8" y="0" width="1.1" height="5.6" fill="#42454d"/><rect x="304.7" y="0" width="1.1" height="11" fill="#474a52"/><rect x="310.5" y="0" width="1.1" height="5.6" fill="#42454d"/><rect x="316.4" y="0" width="1.1" height="11" fill="#474a52"/><rect x="322.3" y="0" width="1.1" height="5.6" fill="#42454d"/><rect x="328.1" y="0" width="1.1" height="11" fill="#474a52"/><rect x="334.0" y="0" width="1.1" height="5.6" fill="#42454d"/><rect x="339.9" y="0" width="1.1" height="11" fill="#474a52"/><rect x="345.7" y="0" width="1.1" height="5.6" fill="#42454d"/><rect x="351.6" y="0" width="1.1" height="11" fill="#474a52"/><rect x="357.4" y="0" width="1.1" height="5.6" fill="#42454d"/><rect x="363.3" y="0" width="1.1" height="11" fill="#474a52"/><rect x="369.2" y="0" width="1.1" height="5.6" fill="#42454d"/><rect x="375.0" y="0" width="1.1" height="11" fill="#474a52"/><rect x="380.9" y="0" width="1.1" height="5.6" fill="#42454d"/><rect x="386.8" y="0" width="1.1" height="11" fill="#474a52"/><rect x="392.6" y="0" width="1.1" height="5.6" fill="#42454d"/><rect x="398.5" y="0" width="1.1" height="15.5" fill="#565960"/><rect x="404.4" y="0" width="1.1" height="5.6" fill="#42454d"/><rect x="410.2" y="0" width="1.1" height="11" fill="#474a52"/><rect x="416.1" y="0" width="1.1" height="5.6" fill="#42454d"/><rect x="422.0" y="0" width="1.1" height="11" fill="#474a52"/><rect x="427.8" y="0" width="1.1" height="5.6" fill="#42454d"/><rect x="433.7" y="0" width="1.1" height="11" fill="#474a52"/><rect x="439.6" y="0" width="1.1" height="5.6" fill="#42454d"/><rect x="445.4" y="0" width="1.1" height="11" fill="#474a52"/><rect x="451.3" y="0" width="1.1" height="5.6" fill="#42454d"/><rect x="457.1" y="0" width="1.1" height="11" fill="#474a52"/><rect x="463.0" y="0" width="1.1" height="5.6" fill="#42454d"/><rect x="468.9" y="0" width="1.1" height="11" fill="#474a52"/><rect x="474.7" y="0" width="1.1" height="5.6" fill="#42454d"/><rect x="480.6" y="0" width="1.1" height="11" fill="#474a52"/><rect x="486.5" y="0" width="1.1" height="5.6" fill="#42454d"/><rect x="492.3" y="0" width="1.1" height="11" fill="#474a52"/><rect x="498.2" y="0" width="1.1" height="5.6" fill="#42454d"/><rect x="504.1" y="0" width="1.1" height="11" fill="#474a52"/><rect x="509.9" y="0" width="1.1" height="5.6" fill="#42454d"/><rect x="515.8" y="0" width="1.1" height="11" fill="#474a52"/><rect x="521.7" y="0" width="1.1" height="5.6" fill="#42454d"/><rect x="527.5" y="0" width="1.1" height="11" fill="#474a52"/><rect x="533.4" y="0" width="1.1" height="5.6" fill="#42454d"/><rect x="539.2" y="0" width="1.1" height="27" fill="#9a9a9e"/><rect x="545.1" y="0" width="1.1" height="5.6" fill="#42454d"/><rect x="551.0" y="0" width="1.1" height="11" fill="#474a52"/><rect x="556.8" y="0" width="1.1" height="5.6" fill="#42454d"/><rect x="562.7" y="0" width="1.1" height="11" fill="#474a52"/><rect x="568.6" y="0" width="1.1" height="5.6" fill="#42454d"/><rect x="574.4" y="0" width="1.1" height="11" fill="#474a52"/><rect x="580.3" y="0" width="1.1" height="5.6" fill="#42454d"/><rect x="586.2" y="0" width="1.1" height="11" fill="#474a52"/><rect x="592.0" y="0" width="1.1" height="5.6" fill="#42454d"/><rect x="597.9" y="0" width="1.1" height="11" fill="#474a52"/><rect x="603.8" y="0" width="1.1" height="5.6" fill="#42454d"/><rect x="609.6" y="0" width="1.1" height="11" fill="#474a52"/><rect x="615.5" y="0" width="1.1" height="5.6" fill="#42454d"/><rect x="621.4" y="0" width="1.1" height="11" fill="#474a52"/><rect x="627.2" y="0" width="1.1" height="5.6" fill="#42454d"/><rect x="633.1" y="0" width="1.1" height="11" fill="#474a52"/><rect x="638.9" y="0" width="1.1" height="5.6" fill="#42454d"/><rect x="644.8" y="0" width="1.1" height="11" fill="#474a52"/><rect x="650.7" y="0" width="1.1" height="5.6" fill="#42454d"/><rect x="656.5" y="0" width="1.1" height="11" fill="#474a52"/><rect x="662.4" y="0" width="1.1" height="5.6" fill="#42454d"/><rect x="668.3" y="0" width="1.1" height="11" fill="#474a52"/><rect x="674.1" y="0" width="1.1" height="5.6" fill="#42454d"/><rect x="680.0" y="0" width="1.1" height="15.5" fill="#565960"/><rect x="685.9" y="0" width="1.1" height="5.6" fill="#42454d"/><rect x="691.7" y="0" width="1.1" height="11" fill="#474a52"/><rect x="697.6" y="0" width="1.1" height="5.6" fill="#42454d"/><rect x="703.5" y="0" width="1.1" height="11" fill="#474a52"/><rect x="709.3" y="0" width="1.1" height="5.6" fill="#42454d"/><rect x="715.2" y="0" width="1.1" height="11" fill="#474a52"/><rect x="721.1" y="0" width="1.1" height="5.6" fill="#42454d"/><rect x="726.9" y="0" width="1.1" height="11" fill="#474a52"/><rect x="732.8" y="0" width="1.1" height="5.6" fill="#42454d"/><rect x="738.6" y="0" width="1.1" height="11" fill="#474a52"/><rect x="744.5" y="0" width="1.1" height="5.6" fill="#42454d"/><rect x="750.4" y="0" width="1.1" height="11" fill="#474a52"/><rect x="756.2" y="0" width="1.1" height="5.6" fill="#42454d"/><rect x="762.1" y="0" width="1.1" height="11" fill="#474a52"/><rect x="768.0" y="0" width="1.1" height="5.6" fill="#42454d"/><rect x="773.8" y="0" width="1.1" height="11" fill="#474a52"/><rect x="779.7" y="0" width="1.1" height="5.6" fill="#42454d"/><rect x="785.6" y="0" width="1.1" height="11" fill="#474a52"/><rect x="791.4" y="0" width="1.1" height="5.6" fill="#42454d"/><rect x="797.3" y="0" width="1.1" height="11" fill="#474a52"/><rect x="803.2" y="0" width="1.1" height="5.6" fill="#42454d"/><rect x="809.0" y="0" width="1.1" height="11" fill="#474a52"/><rect x="814.9" y="0" width="1.1" height="5.6" fill="#42454d"/><rect x="820.8" y="0" width="1.1" height="27" fill="#9a9a9e"/><rect x="826.6" y="0" width="1.1" height="5.6" fill="#42454d"/><rect x="832.5" y="0" width="1.1" height="11" fill="#474a52"/><rect x="838.3" y="0" width="1.1" height="5.6" fill="#42454d"/><rect x="844.2" y="0" width="1.1" height="11" fill="#474a52"/><rect x="850.1" y="0" width="1.1" height="5.6" fill="#42454d"/><rect x="855.9" y="0" width="1.1" height="11" fill="#474a52"/><rect x="861.8" y="0" width="1.1" height="5.6" fill="#42454d"/><rect x="867.7" y="0" width="1.1" height="11" fill="#474a52"/><rect x="873.5" y="0" width="1.1" height="5.6" fill="#42454d"/><rect x="879.4" y="0" width="1.1" height="11" fill="#474a52"/><rect x="885.3" y="0" width="1.1" height="5.6" fill="#42454d"/><rect x="891.1" y="0" width="1.1" height="11" fill="#474a52"/><rect x="897.0" y="0" width="1.1" height="5.6" fill="#42454d"/><rect x="902.9" y="0" width="1.1" height="11" fill="#474a52"/><rect x="908.7" y="0" width="1.1" height="5.6" fill="#42454d"/><rect x="914.6" y="0" width="1.1" height="11" fill="#474a52"/><rect x="920.4" y="0" width="1.1" height="5.6" fill="#42454d"/><rect x="926.3" y="0" width="1.1" height="11" fill="#474a52"/><rect x="932.2" y="0" width="1.1" height="5.6" fill="#42454d"/><rect x="938.0" y="0" width="1.1" height="11" fill="#474a52"/><rect x="943.9" y="0" width="1.1" height="5.6" fill="#42454d"/><rect x="949.8" y="0" width="1.1" height="11" fill="#474a52"/><rect x="955.6" y="0" width="1.1" height="5.6" fill="#42454d"/><rect x="961.5" y="0" width="1.1" height="15.5" fill="#565960"/><rect x="967.4" y="0" width="1.1" height="5.6" fill="#42454d"/><rect x="973.2" y="0" width="1.1" height="11" fill="#474a52"/><rect x="979.1" y="0" width="1.1" height="5.6" fill="#42454d"/><rect x="985.0" y="0" width="1.1" height="11" fill="#474a52"/><rect x="990.8" y="0" width="1.1" height="5.6" fill="#42454d"/><rect x="996.7" y="0" width="1.1" height="11" fill="#474a52"/><rect x="1002.6" y="0" width="1.1" height="5.6" fill="#42454d"/><rect x="1008.4" y="0" width="1.1" height="11" fill="#474a52"/><rect x="1014.3" y="0" width="1.1" height="5.6" fill="#42454d"/><rect x="1020.1" y="0" width="1.1" height="11" fill="#474a52"/><rect x="1026.0" y="0" width="1.1" height="5.6" fill="#42454d"/><rect x="1031.9" y="0" width="1.1" height="11" fill="#474a52"/><rect x="1037.7" y="0" width="1.1" height="5.6" fill="#42454d"/><rect x="1043.6" y="0" width="1.1" height="11" fill="#474a52"/><rect x="1049.5" y="0" width="1.1" height="5.6" fill="#42454d"/><rect x="1055.3" y="0" width="1.1" height="11" fill="#474a52"/><rect x="1061.2" y="0" width="1.1" height="5.6" fill="#42454d"/><rect x="1067.1" y="0" width="1.1" height="11" fill="#474a52"/><rect x="1072.9" y="0" width="1.1" height="5.6" fill="#42454d"/><rect x="1078.8" y="0" width="1.1" height="11" fill="#474a52"/><rect x="1084.7" y="0" width="1.1" height="5.6" fill="#42454d"/><rect x="1090.5" y="0" width="1.1" height="11" fill="#474a52"/><rect x="1096.4" y="0" width="1.1" height="5.6" fill="#42454d"/><rect x="1102.2" y="0" width="1.1" height="27" fill="#9a9a9e"/><rect x="1108.1" y="0" width="1.1" height="5.6" fill="#42454d"/><rect x="1114.0" y="0" width="1.1" height="11" fill="#474a52"/><rect x="1119.8" y="0" width="1.1" height="5.6" fill="#42454d"/><rect x="1125.7" y="0" width="1.1" height="11" fill="#474a52"/><rect x="1131.6" y="0" width="1.1" height="5.6" fill="#42454d"/><rect x="1137.4" y="0" width="1.1" height="11" fill="#474a52"/><rect x="1143.3" y="0" width="1.1" height="5.6" fill="#42454d"/><rect x="1149.2" y="0" width="1.1" height="11" fill="#474a52"/><rect x="1155.0" y="0" width="1.1" height="5.6" fill="#42454d"/><rect x="1160.9" y="0" width="1.1" height="11" fill="#474a52"/><rect x="1166.8" y="0" width="1.1" height="5.6" fill="#42454d"/><rect x="1172.6" y="0" width="1.1" height="11" fill="#474a52"/><rect x="1178.5" y="0" width="1.1" height="5.6" fill="#42454d"/><rect x="1184.4" y="0" width="1.1" height="11" fill="#474a52"/><rect x="1190.2" y="0" width="1.1" height="5.6" fill="#42454d"/><rect x="1196.1" y="0" width="1.1" height="11" fill="#474a52"/><rect x="1201.9" y="0" width="1.1" height="5.6" fill="#42454d"/><rect x="1207.8" y="0" width="1.1" height="11" fill="#474a52"/><rect x="1213.7" y="0" width="1.1" height="5.6" fill="#42454d"/><rect x="1219.5" y="0" width="1.1" height="11" fill="#474a52"/><rect x="1225.4" y="0" width="1.1" height="5.6" fill="#42454d"/><rect x="1231.3" y="0" width="1.1" height="11" fill="#474a52"/><rect x="1237.1" y="0" width="1.1" height="5.6" fill="#42454d"/><rect x="1243.0" y="0" width="1.1" height="15.5" fill="#565960"/><rect x="1248.9" y="0" width="1.1" height="5.6" fill="#42454d"/><rect x="1254.7" y="0" width="1.1" height="11" fill="#474a52"/><rect x="1260.6" y="0" width="1.1" height="5.6" fill="#42454d"/><rect x="1266.5" y="0" width="1.1" height="11" fill="#474a52"/><rect x="1272.3" y="0" width="1.1" height="5.6" fill="#42454d"/><rect x="1278.2" y="0" width="1.1" height="11" fill="#474a52"/><rect x="1284.1" y="0" width="1.1" height="5.6" fill="#42454d"/><rect x="1289.9" y="0" width="1.1" height="11" fill="#474a52"/><rect x="1295.8" y="0" width="1.1" height="5.6" fill="#42454d"/><rect x="1301.6" y="0" width="1.1" height="11" fill="#474a52"/><rect x="1307.5" y="0" width="1.1" height="5.6" fill="#42454d"/><rect x="1313.4" y="0" width="1.1" height="11" fill="#474a52"/><rect x="1319.2" y="0" width="1.1" height="5.6" fill="#42454d"/><rect x="1325.1" y="0" width="1.1" height="11" fill="#474a52"/><rect x="1331.0" y="0" width="1.1" height="5.6" fill="#42454d"/><rect x="1336.8" y="0" width="1.1" height="11" fill="#474a52"/><rect x="1342.7" y="0" width="1.1" height="5.6" fill="#42454d"/><rect x="1348.6" y="0" width="1.1" height="11" fill="#474a52"/><rect x="1354.4" y="0" width="1.1" height="5.6" fill="#42454d"/><rect x="1360.3" y="0" width="1.1" height="11" fill="#474a52"/><rect x="1366.2" y="0" width="1.1" height="5.6" fill="#42454d"/><rect x="1372.0" y="0" width="1.1" height="11" fill="#474a52"/><rect x="1377.9" y="0" width="1.1" height="5.6" fill="#42454d"/><rect x="1383.8" y="0" width="1.1" height="27" fill="#9a9a9e"/><rect x="1389.6" y="0" width="1.1" height="5.6" fill="#42454d"/><rect x="1395.5" y="0" width="1.1" height="11" fill="#474a52"/><rect x="1401.3" y="0" width="1.1" height="5.6" fill="#42454d"/><rect x="1407.2" y="0" width="1.1" height="11" fill="#474a52"/><rect x="1413.1" y="0" width="1.1" height="5.6" fill="#42454d"/><rect x="1418.9" y="0" width="1.1" height="11" fill="#474a52"/><rect x="1424.8" y="0" width="1.1" height="5.6" fill="#42454d"/><rect x="1430.7" y="0" width="1.1" height="11" fill="#474a52"/><rect x="1436.5" y="0" width="1.1" height="5.6" fill="#42454d"/><rect x="1442.4" y="0" width="1.1" height="11" fill="#474a52"/><rect x="1448.3" y="0" width="1.1" height="5.6" fill="#42454d"/><rect x="1454.1" y="0" width="1.1" height="11" fill="#474a52"/><rect x="1460.0" y="0" width="1.1" height="5.6" fill="#42454d"/><rect x="1465.9" y="0" width="1.1" height="11" fill="#474a52"/><rect x="1471.7" y="0" width="1.1" height="5.6" fill="#42454d"/><rect x="1477.6" y="0" width="1.1" height="11" fill="#474a52"/><rect x="1483.4" y="0" width="1.1" height="5.6" fill="#42454d"/><rect x="1489.3" y="0" width="1.1" height="11" fill="#474a52"/><rect x="1495.2" y="0" width="1.1" height="5.6" fill="#42454d"/><rect x="1501.0" y="0" width="1.1" height="11" fill="#474a52"/><rect x="1506.9" y="0" width="1.1" height="5.6" fill="#42454d"/><rect x="1512.8" y="0" width="1.1" height="11" fill="#474a52"/><rect x="1518.6" y="0" width="1.1" height="5.6" fill="#42454d"/><rect x="1524.5" y="0" width="1.1" height="15.5" fill="#565960"/><rect x="1530.4" y="0" width="1.1" height="5.6" fill="#42454d"/><rect x="1536.2" y="0" width="1.1" height="11" fill="#474a52"/><rect x="1542.1" y="0" width="1.1" height="5.6" fill="#42454d"/><rect x="1548.0" y="0" width="1.1" height="11" fill="#474a52"/><rect x="1553.8" y="0" width="1.1" height="5.6" fill="#42454d"/><rect x="1559.7" y="0" width="1.1" height="11" fill="#474a52"/><rect x="1565.6" y="0" width="1.1" height="5.6" fill="#42454d"/><rect x="1571.4" y="0" width="1.1" height="11" fill="#474a52"/><rect x="1577.3" y="0" width="1.1" height="5.6" fill="#42454d"/><rect x="1583.1" y="0" width="1.1" height="11" fill="#474a52"/></svg>
<div class="t" style="left:264.5px;top:535.5px;font-size:12px;color:#b2b2b6;font-weight:normal;-webkit-text-stroke:0.35px #b2b2b6">01:00:00:00</div>
<div class="t" style="left:546.0px;top:535.5px;font-size:12px;color:#b2b2b6;font-weight:normal;-webkit-text-stroke:0.35px #b2b2b6">01:00:04:00</div>
<div class="a" style="left:539.3px;top:565px;width:1px;height:281px;background:#36363c;"></div>
<div class="t" style="left:827.5px;top:535.5px;font-size:12px;color:#b2b2b6;font-weight:normal;-webkit-text-stroke:0.35px #b2b2b6">01:00:08:00</div>
<div class="a" style="left:820.8px;top:565px;width:1px;height:281px;background:#36363c;"></div>
<div class="t" style="left:1109.0px;top:535.5px;font-size:12px;color:#b2b2b6;font-weight:normal;-webkit-text-stroke:0.35px #b2b2b6">01:00:12:00</div>
<div class="a" style="left:1102.3px;top:565px;width:1px;height:281px;background:#36363c;"></div>
<div class="t" style="left:1390.5px;top:535.5px;font-size:12px;color:#b2b2b6;font-weight:normal;-webkit-text-stroke:0.35px #b2b2b6">01:00:16:00</div>
<div class="a" style="left:1383.8px;top:565px;width:1px;height:281px;background:#36363c;"></div>
<div class="a" style="left:258px;top:549.5px;width:1330px;height:8.2px;background:#9a9a9a;border-top:1px solid #111114;border-bottom:1px solid #111114"></div>
<div class="a" style="left:254px;top:549.5px;width:8px;height:8px;background:#9a9a9a;border-radius:50%;border:1px solid #333"></div>
<div class="a" style="left:0px;top:623px;width:257px;height:85px;background:#222227;"></div>
<div class="a" style="left:0px;top:623px;width:257px;height:1px;background:#121214;"></div>
<div class="a" style="left:0px;top:708px;width:257px;height:1px;background:#121214;"></div>
<div class="a" style="left:0px;top:623px;width:3.5px;height:85px;background:#4a7db3;"></div>
<div class="a" style="left:21px;top:623px;width:1px;height:85px;background:#121214;"></div>
<div class="a" style="left:70px;top:623px;width:1px;height:30px;background:#121214;"></div>
<div class="a" style="left:22px;top:653px;width:235px;height:1px;background:#121214;"></div>
<div class="a" style="left:30px;top:627px;width:36px;height:22px;background:transparent;border:1.5px solid #cf4438;border-radius:1px"></div>
<div class="t" style="left:-151px;width:400px;text-align:center;top:634px;font-size:12.5px;color:#8a8a8e;font-weight:normal;letter-spacing:-0.4px">V1</div>
<div class="t" style="left:80px;top:632.5px;font-size:13.5px;color:#fff;font-weight:normal;letter-spacing:-0.1px">Video 1</div>
<div class="a" style="left:0px;top:709px;width:1600px;height:4px;background:#38383c;"></div>
<div class="a" style="left:0px;top:712px;width:1600px;height:1px;background:#1a1a1c;"></div>
<div class="a" style="left:0px;top:713px;width:257px;height:64px;background:#222227;"></div>
<div class="a" style="left:0px;top:713px;width:257px;height:1px;background:#121214;"></div>
<div class="a" style="left:0px;top:777px;width:257px;height:1px;background:#121214;"></div>
<div class="a" style="left:0px;top:713px;width:3.5px;height:64px;background:#4a9a6d;"></div>
<div class="a" style="left:21px;top:713px;width:1px;height:64px;background:#121214;"></div>
<div class="a" style="left:70px;top:713px;width:1px;height:29px;background:#121214;"></div>
<div class="a" style="left:22px;top:742px;width:235px;height:1px;background:#121214;"></div>
<div class="a" style="left:30px;top:717px;width:36px;height:22px;background:transparent;border:1.5px solid #cf4438;border-radius:1px"></div>
<div class="t" style="left:-151px;width:400px;text-align:center;top:724px;font-size:12.5px;color:#8a8a8e;font-weight:normal;letter-spacing:-0.4px">A1</div>
<div class="t" style="left:80px;top:722.5px;font-size:13.5px;color:#fff;font-weight:normal;letter-spacing:-0.1px">Audio 1</div>
<div class="t" style="left:-149px;width:400px;text-align:right;top:723px;font-size:13px;color:#8a8a8e;font-weight:bold;">2.0</div>
<div class="t" style="left:38px;top:689.8px;font-size:13px;color:#4c4c52;font-weight:normal;">3 Clips</div>
<svg style="left:40.5px;top:660px" width="14" height="15" viewBox="0 0 14 15"><rect x="1" y="7" width="12" height="7.5" rx="1.5" fill="none" stroke="#68686c" stroke-width="1.4"/><path d="M3.5 7 V4.5 a3.5 3.5 0 0 1 7 0" fill="none" stroke="#68686c" stroke-width="1.4"/></svg>
<svg style="left:71.6px;top:660.0px" width="20" height="15" viewBox="0 0 20 15"><rect x="1" y="1" width="18" height="13" fill="#1a1a1d" stroke="#f0f0f2" stroke-width="1.6"/><path d="M8 4.5 L5 7.5 L8 10.5 M12 4.5 L15 7.5 L12 10.5" fill="none" stroke="#f0f0f2" stroke-width="1.5"/></svg>
<svg style="left:107.2px;top:661.0px" width="20" height="13" viewBox="0 0 20 13"><rect x="1" y="1" width="18" height="11" rx="0.8" fill="#1a1a1d" stroke="#f0f0f2" stroke-width="1.8"/><path d="M3.600 3v1.500M3.600 5.800v1.500M3.600 8.600v1.500M16.400 3v1.500M16.400 5.800v1.500M16.400 8.600v1.500" stroke="#f0f0f2" stroke-width="1.2"/></svg>
<svg style="left:40.5px;top:753.5px" width="14" height="15" viewBox="0 0 14 15"><rect x="1" y="7" width="12" height="7.5" rx="1.5" fill="none" stroke="#68686c" stroke-width="1.4"/><path d="M3.5 7 V4.5 a3.5 3.5 0 0 1 7 0" fill="none" stroke="#68686c" stroke-width="1.4"/></svg>
<svg style="left:71.6px;top:753.0px" width="20" height="15" viewBox="0 0 20 15"><rect x="1" y="1" width="18" height="13" fill="#1a1a1d" stroke="#f0f0f2" stroke-width="1.6"/><path d="M8 4.5 L5 7.5 L8 10.5 M12 4.5 L15 7.5 L12 10.5" fill="none" stroke="#f0f0f2" stroke-width="1.5"/></svg>
<div class="a" style="left:106px;top:749.5px;width:22px;height:22px;background:transparent;border:1.3px solid #6a6a6e;border-radius:2px"></div>
<div class="t" style="left:-83px;width:400px;text-align:center;top:754.5px;font-size:13px;color:#8a8a8e;font-weight:normal;">S</div>
<div class="a" style="left:140px;top:749.5px;width:22px;height:22px;background:transparent;border:1.3px solid #6a6a6e;border-radius:2px"></div>
<div class="t" style="left:-49px;width:400px;text-align:center;top:754.5px;font-size:13px;color:#8a8a8e;font-weight:normal;">M</div>
<svg width="0" height="0" style="left:0;top:0"><defs><filter id="tb" x="0" y="0" width="100%" height="100%"><feGaussianBlur stdDeviation="0.35"/></filter><linearGradient id="mskin" x1="0" y1="0" x2="1" y2="0"><stop offset="0" stop-color="#a8714c"/><stop offset="1" stop-color="#6e4630"/></linearGradient><symbol id="tm" viewBox="0 0 93.45 53.2"><g filter="url(#tb)"><rect width="93.45" height="53.2" fill="#dcb37e"/><rect x="-3.6" y="-1.0" width="4.0" height="2.5" rx="0.6" fill="#ce9861"/><rect x="1.2" y="-1.0" width="7.7" height="2.5" rx="0.6" fill="#c88f58"/><rect x="9.8" y="-1.0" width="7.5" height="2.5" rx="0.6" fill="#c48952"/><rect x="18.3" y="-1.0" width="8.3" height="2.5" rx="0.6" fill="#cf9962"/><rect x="27.4" y="-1.0" width="8.4" height="2.5" rx="0.6" fill="#c58c55"/><rect x="36.7" y="-1.0" width="4.1" height="2.5" rx="0.6" fill="#ca925b"/><rect x="41.7" y="-1.0" width="8.4" height="2.5" rx="0.6" fill="#ce9861"/><rect x="51.0" y="-1.0" width="7.5" height="2.5" rx="0.6" fill="#c1864f"/><rect x="59.4" y="-1.0" width="8.4" height="2.5" rx="0.6" fill="#cd965f"/><rect x="68.6" y="-1.0" width="8.1" height="2.5" rx="0.6" fill="#ce9861"/><rect x="77.6" y="-1.0" width="8.4" height="2.5" rx="0.6" fill="#c78e57"/><rect x="87.0" y="-1.0" width="8.1" height="2.5" rx="0.6" fill="#c38851"/><rect x="-8.0" y="2.4" width="8.5" height="2.5" rx="0.6" fill="#c48952"/><rect x="1.5" y="2.4" width="8.2" height="2.5" rx="0.6" fill="#be814a"/><rect x="10.6" y="2.4" width="8.0" height="2.5" rx="0.6" fill="#ce9861"/><rect x="19.5" y="2.4" width="3.7" height="2.5" rx="0.6" fill="#be814a"/><rect x="24.1" y="2.4" width="7.7" height="2.5" rx="0.6" fill="#d09a63"/><rect x="32.7" y="2.4" width="8.2" height="2.5" rx="0.6" fill="#d19c65"/><rect x="41.8" y="2.4" width="3.9" height="2.5" rx="0.6" fill="#c99059"/><rect x="46.6" y="2.4" width="8.7" height="2.5" rx="0.6" fill="#c38851"/><rect x="56.1" y="2.4" width="7.9" height="2.5" rx="0.6" fill="#be814a"/><rect x="64.9" y="2.4" width="4.2" height="2.5" rx="0.6" fill="#c0844d"/><rect x="70.0" y="2.4" width="8.5" height="2.5" rx="0.6" fill="#be814a"/><rect x="79.5" y="2.4" width="4.2" height="2.5" rx="0.6" fill="#c1854e"/><rect x="84.6" y="2.4" width="8.1" height="2.5" rx="0.6" fill="#c1864f"/><rect x="-5.9" y="5.8" width="8.1" height="2.5" rx="0.6" fill="#c58b54"/><rect x="3.1" y="5.8" width="3.9" height="2.5" rx="0.6" fill="#c2864f"/><rect x="7.9" y="5.8" width="8.8" height="2.5" rx="0.6" fill="#d19c65"/><rect x="17.6" y="5.8" width="9.0" height="2.5" rx="0.6" fill="#be814a"/><rect x="27.6" y="5.8" width="8.0" height="2.5" rx="0.6" fill="#ce9861"/><rect x="36.5" y="5.8" width="7.4" height="2.5" rx="0.6" fill="#c1854e"/><rect x="44.8" y="5.8" width="3.8" height="2.5" rx="0.6" fill="#cd965f"/><rect x="49.5" y="5.8" width="8.7" height="2.5" rx="0.6" fill="#c58b54"/><rect x="59.2" y="5.8" width="7.5" height="2.5" rx="0.6" fill="#c9915a"/><rect x="67.6" y="5.8" width="7.4" height="2.5" rx="0.6" fill="#c58b54"/><rect x="75.9" y="5.8" width="3.7" height="2.5" rx="0.6" fill="#c9915a"/><rect x="80.5" y="5.8" width="8.8" height="2.5" rx="0.6" fill="#c1864f"/><rect x="90.2" y="5.8" width="7.9" height="2.5" rx="0.6" fill="#c28750"/><rect x="-4.9" y="9.2" width="7.6" height="2.5" rx="0.6" fill="#ca925b"/><rect x="3.7" y="9.2" width="8.5" height="2.5" rx="0.6" fill="#c58b54"/><rect x="13.1" y="9.2" width="4.1" height="2.5" rx="0.6" fill="#c68c55"/><rect x="18.0" y="9.2" width="7.6" height="2.5" rx="0.6" fill="#c88f58"/><rect x="26.5" y="9.2" width="7.8" height="2.5" rx="0.6" fill="#cc945d"/><rect x="35.2" y="9.2" width="8.1" height="2.5" rx="0.6" fill="#cf9a63"/><rect x="44.1" y="9.2" width="3.8" height="2.5" rx="0.6" fill="#c1854e"/><rect x="48.9" y="9.2" width="7.6" height="2.5" rx="0.6" fill="#c78e57"/><rect x="57.4" y="9.2" width="7.8" height="2.5" rx="0.6" fill="#d09a63"/><rect x="66.1" y="9.2" width="8.6" height="2.5" rx="0.6" fill="#bf824b"/><rect x="75.6" y="9.2" width="4.0" height="2.5" rx="0.6" fill="#bf824b"/><rect x="80.5" y="9.2" width="7.8" height="2.5" rx="0.6" fill="#c88f58"/><rect x="89.2" y="9.2" width="7.5" height="2.5" rx="0.6" fill="#c0844d"/><rect x="-3.6" y="12.6" width="8.5" height="2.5" rx="0.6" fill="#cb945d"/><rect x="5.8" y="12.6" width="8.3" height="2.5" rx="0.6" fill="#d09a63"/><rect x="15.0" y="12.6" width="4.3" height="2.5" rx="0.6" fill="#cb945d"/><rect x="20.2" y="12.6" width="7.4" height="2.5" rx="0.6" fill="#ca925b"/><rect x="28.5" y="12.6" width="3.7" height="2.5" rx="0.6" fill="#c48952"/><rect x="33.1" y="12.6" width="9.0" height="2.5" rx="0.6" fill="#bf834c"/><rect x="43.0" y="12.6" width="8.6" height="2.5" rx="0.6" fill="#cf9a63"/><rect x="52.5" y="12.6" width="8.7" height="2.5" rx="0.6" fill="#d09a63"/><rect x="62.1" y="12.6" width="7.5" height="2.5" rx="0.6" fill="#c78e57"/><rect x="70.5" y="12.6" width="8.8" height="2.5" rx="0.6" fill="#c68c55"/><rect x="80.2" y="12.6" width="8.8" height="2.5" rx="0.6" fill="#c9915a"/><rect x="89.9" y="12.6" width="3.9" height="2.5" rx="0.6" fill="#be814a"/><rect x="-0.6" y="16.0" width="8.4" height="2.5" rx="0.6" fill="#d19c65"/><rect x="8.8" y="16.0" width="4.2" height="2.5" rx="0.6" fill="#c58b54"/><rect x="13.8" y="16.0" width="4.0" height="2.5" rx="0.6" fill="#ce9861"/><rect x="18.7" y="16.0" width="8.2" height="2.5" rx="0.6" fill="#c88f58"/><rect x="27.8" y="16.0" width="8.4" height="2.5" rx="0.6" fill="#c78e57"/><rect x="37.1" y="16.0" width="9.0" height="2.5" rx="0.6" fill="#c0844d"/><rect x="46.9" y="16.0" width="3.8" height="2.5" rx="0.6" fill="#be814a"/><rect x="51.6" y="16.0" width="7.6" height="2.5" rx="0.6" fill="#ca925b"/><rect x="60.2" y="16.0" width="8.6" height="2.5" rx="0.6" fill="#c48a53"/><rect x="69.7" y="16.0" width="4.0" height="2.5" rx="0.6" fill="#c28750"/><rect x="74.6" y="16.0" width="4.1" height="2.5" rx="0.6" fill="#c2864f"/><rect x="79.6" y="16.0" width="4.2" height="2.5" rx="0.6" fill="#cc965f"/><rect x="84.7" y="16.0" width="8.8" height="2.5" rx="0.6" fill="#c58b54"/><rect x="-4.7" y="19.4" width="7.7" height="2.5" rx="0.6" fill="#c0844d"/><rect x="4.0" y="19.4" width="8.8" height="2.5" rx="0.6" fill="#ce9861"/><rect x="13.6" y="19.4" width="8.9" height="2.5" rx="0.6" fill="#c38851"/><rect x="23.5" y="19.4" width="7.6" height="2.5" rx="0.6" fill="#c78e57"/><rect x="31.9" y="19.4" width="8.7" height="2.5" rx="0.6" fill="#c58b54"/><rect x="41.6" y="19.4" width="4.1" height="2.5" rx="0.6" fill="#cc955e"/><rect x="46.6" y="19.4" width="3.9" height="2.5" rx="0.6" fill="#ce9861"/><rect x="51.4" y="19.4" width="8.8" height="2.5" rx="0.6" fill="#bf824b"/><rect x="61.1" y="19.4" width="8.3" height="2.5" rx="0.6" fill="#c48952"/><rect x="70.3" y="19.4" width="8.4" height="2.5" rx="0.6" fill="#c68c55"/><rect x="79.6" y="19.4" width="7.4" height="2.5" rx="0.6" fill="#ce9861"/><rect x="87.9" y="19.4" width="8.7" height="2.5" rx="0.6" fill="#cd9760"/><rect x="-7.9" y="22.8" width="8.1" height="2.5" rx="0.6" fill="#ca925b"/><rect x="1.1" y="22.8" width="9.0" height="2.5" rx="0.6" fill="#cb945d"/><rect x="11.0" y="22.8" width="8.7" height="2.5" rx="0.6" fill="#c38851"/><rect x="20.6" y="22.8" width="8.6" height="2.5" rx="0.6" fill="#c88f58"/><rect x="30.1" y="22.8" width="7.7" height="2.5" rx="0.6" fill="#c38851"/><rect x="38.7" y="22.8" width="8.3" height="2.5" rx="0.6" fill="#d09b64"/><rect x="47.9" y="22.8" width="8.0" height="2.5" rx="0.6" fill="#cd9760"/><rect x="56.8" y="22.8" width="7.5" height="2.5" rx="0.6" fill="#d09b64"/><rect x="65.2" y="22.8" width="3.7" height="2.5" rx="0.6" fill="#c78d56"/><rect x="69.8" y="22.8" width="8.0" height="2.5" rx="0.6" fill="#c99059"/><rect x="78.7" y="22.8" width="8.1" height="2.5" rx="0.6" fill="#ca935c"/><rect x="87.8" y="22.8" width="7.5" height="2.5" rx="0.6" fill="#cf9962"/><rect x="-6.4" y="26.2" width="7.7" height="2.5" rx="0.6" fill="#cf9a63"/><rect x="2.2" y="26.2" width="9.0" height="2.5" rx="0.6" fill="#c89059"/><rect x="12.1" y="26.2" width="7.8" height="2.5" rx="0.6" fill="#cc955e"/><rect x="20.8" y="26.2" width="8.0" height="2.5" rx="0.6" fill="#bf834c"/><rect x="29.7" y="26.2" width="3.9" height="2.5" rx="0.6" fill="#c68c55"/><rect x="34.5" y="26.2" width="8.2" height="2.5" rx="0.6" fill="#be814a"/><rect x="43.5" y="26.2" width="8.1" height="2.5" rx="0.6" fill="#be814a"/><rect x="52.5" y="26.2" width="8.5" height="2.5" rx="0.6" fill="#d09a63"/><rect x="61.9" y="26.2" width="3.7" height="2.5" rx="0.6" fill="#c88f58"/><rect x="66.5" y="26.2" width="4.4" height="2.5" rx="0.6" fill="#c78e57"/><rect x="71.8" y="26.2" width="8.6" height="2.5" rx="0.6" fill="#c68d56"/><rect x="81.3" y="26.2" width="8.7" height="2.5" rx="0.6" fill="#c99059"/><rect x="91.0" y="26.2" width="8.2" height="2.5" rx="0.6" fill="#ce9861"/><rect x="-4.5" y="29.6" width="8.5" height="2.5" rx="0.6" fill="#d09b64"/><rect x="4.9" y="29.6" width="7.9" height="2.5" rx="0.6" fill="#c0844d"/><rect x="13.7" y="29.6" width="8.3" height="2.5" rx="0.6" fill="#c2864f"/><rect x="22.9" y="29.6" width="8.2" height="2.5" rx="0.6" fill="#ca915a"/><rect x="32.0" y="29.6" width="8.3" height="2.5" rx="0.6" fill="#bf824b"/><rect x="41.2" y="29.6" width="4.0" height="2.5" rx="0.6" fill="#d19c65"/><rect x="46.1" y="29.6" width="8.2" height="2.5" rx="0.6" fill="#cb945d"/><rect x="55.2" y="29.6" width="8.9" height="2.5" rx="0.6" fill="#c78d56"/><rect x="65.0" y="29.6" width="3.8" height="2.5" rx="0.6" fill="#c78e57"/><rect x="69.7" y="29.6" width="7.9" height="2.5" rx="0.6" fill="#cf9a63"/><rect x="78.5" y="29.6" width="4.0" height="2.5" rx="0.6" fill="#c0844d"/><rect x="83.5" y="29.6" width="4.1" height="2.5" rx="0.6" fill="#d09a63"/><rect x="88.5" y="29.6" width="8.5" height="2.5" rx="0.6" fill="#d19c65"/><rect x="-0.3" y="33.0" width="7.8" height="2.5" rx="0.6" fill="#cb945d"/><rect x="8.4" y="33.0" width="8.6" height="2.5" rx="0.6" fill="#c28750"/><rect x="17.8" y="33.0" width="3.7" height="2.5" rx="0.6" fill="#cc955e"/><rect x="22.4" y="33.0" width="8.8" height="2.5" rx="0.6" fill="#ca925b"/><rect x="32.1" y="33.0" width="8.5" height="2.5" rx="0.6" fill="#cf9962"/><rect x="41.5" y="33.0" width="8.0" height="2.5" rx="0.6" fill="#c68c55"/><rect x="50.4" y="33.0" width="8.3" height="2.5" rx="0.6" fill="#cf9962"/><rect x="59.6" y="33.0" width="8.2" height="2.5" rx="0.6" fill="#ce9861"/><rect x="68.7" y="33.0" width="7.8" height="2.5" rx="0.6" fill="#cc955e"/><rect x="77.4" y="33.0" width="8.9" height="2.5" rx="0.6" fill="#c48952"/><rect x="87.2" y="33.0" width="8.8" height="2.5" rx="0.6" fill="#c2864f"/><rect x="-6.2" y="36.4" width="8.8" height="2.5" rx="0.6" fill="#c0844d"/><rect x="3.5" y="36.4" width="7.6" height="2.5" rx="0.6" fill="#bf834c"/><rect x="12.0" y="36.4" width="3.7" height="2.5" rx="0.6" fill="#ce9861"/><rect x="16.6" y="36.4" width="4.0" height="2.5" rx="0.6" fill="#cc945d"/><rect x="21.5" y="36.4" width="8.0" height="2.5" rx="0.6" fill="#cb945d"/><rect x="30.5" y="36.4" width="7.5" height="2.5" rx="0.6" fill="#c99059"/><rect x="38.9" y="36.4" width="8.9" height="2.5" rx="0.6" fill="#d19c65"/><rect x="48.7" y="36.4" width="8.5" height="2.5" rx="0.6" fill="#ca925b"/><rect x="58.1" y="36.4" width="8.2" height="2.5" rx="0.6" fill="#cb945d"/><rect x="67.2" y="36.4" width="8.7" height="2.5" rx="0.6" fill="#c78e57"/><rect x="76.8" y="36.4" width="7.4" height="2.5" rx="0.6" fill="#c99059"/><rect x="85.1" y="36.4" width="3.7" height="2.5" rx="0.6" fill="#c1864f"/><rect x="89.8" y="36.4" width="7.7" height="2.5" rx="0.6" fill="#c1854e"/><rect x="-2.3" y="39.8" width="8.3" height="2.5" rx="0.6" fill="#c0844d"/><rect x="7.0" y="39.8" width="3.7" height="2.5" rx="0.6" fill="#c0834c"/><rect x="11.5" y="39.8" width="4.0" height="2.5" rx="0.6" fill="#c88f58"/><rect x="16.4" y="39.8" width="3.8" height="2.5" rx="0.6" fill="#c58b54"/><rect x="21.1" y="39.8" width="8.8" height="2.5" rx="0.6" fill="#c1864f"/><rect x="30.7" y="39.8" width="3.9" height="2.5" rx="0.6" fill="#c58b54"/><rect x="35.5" y="39.8" width="8.4" height="2.5" rx="0.6" fill="#c0834c"/><rect x="44.8" y="39.8" width="7.9" height="2.5" rx="0.6" fill="#bf834c"/><rect x="53.6" y="39.8" width="4.1" height="2.5" rx="0.6" fill="#c1864f"/><rect x="58.6" y="39.8" width="8.7" height="2.5" rx="0.6" fill="#c38851"/><rect x="68.2" y="39.8" width="8.6" height="2.5" rx="0.6" fill="#cd965f"/><rect x="77.7" y="39.8" width="3.7" height="2.5" rx="0.6" fill="#c48a53"/><rect x="82.3" y="39.8" width="8.6" height="2.5" rx="0.6" fill="#cd965f"/><rect x="91.8" y="39.8" width="3.8" height="2.5" rx="0.6" fill="#c1864f"/><rect x="-6.4" y="43.2" width="8.1" height="2.5" rx="0.6" fill="#be814a"/><rect x="2.7" y="43.2" width="9.0" height="2.5" rx="0.6" fill="#cf9a63"/><rect x="12.6" y="43.2" width="7.8" height="2.5" rx="0.6" fill="#d09b64"/><rect x="21.2" y="43.2" width="7.9" height="2.5" rx="0.6" fill="#cb935c"/><rect x="30.1" y="43.2" width="8.3" height="2.5" rx="0.6" fill="#c58b54"/><rect x="39.2" y="43.2" width="4.1" height="2.5" rx="0.6" fill="#cb945d"/><rect x="44.2" y="43.2" width="4.4" height="2.5" rx="0.6" fill="#be814a"/><rect x="49.5" y="43.2" width="8.6" height="2.5" rx="0.6" fill="#c38851"/><rect x="59.0" y="43.2" width="4.0" height="2.5" rx="0.6" fill="#cd965f"/><rect x="63.9" y="43.2" width="3.6" height="2.5" rx="0.6" fill="#c38851"/><rect x="68.4" y="43.2" width="8.9" height="2.5" rx="0.6" fill="#c89059"/><rect x="78.2" y="43.2" width="4.4" height="2.5" rx="0.6" fill="#c99059"/><rect x="83.5" y="43.2" width="8.4" height="2.5" rx="0.6" fill="#ce9760"/><rect x="92.8" y="43.2" width="8.3" height="2.5" rx="0.6" fill="#cb935c"/><rect x="-7.6" y="46.6" width="4.3" height="2.5" rx="0.6" fill="#c1854e"/><rect x="-2.4" y="46.6" width="4.4" height="2.5" rx="0.6" fill="#ce9861"/><rect x="2.9" y="46.6" width="8.1" height="2.5" rx="0.6" fill="#c78e57"/><rect x="11.9" y="46.6" width="8.2" height="2.5" rx="0.6" fill="#c9915a"/><rect x="21.0" y="46.6" width="8.2" height="2.5" rx="0.6" fill="#c78e57"/><rect x="30.2" y="46.6" width="8.3" height="2.5" rx="0.6" fill="#c38851"/><rect x="39.4" y="46.6" width="7.4" height="2.5" rx="0.6" fill="#cd965f"/><rect x="47.7" y="46.6" width="8.4" height="2.5" rx="0.6" fill="#c68c55"/><rect x="57.0" y="46.6" width="3.6" height="2.5" rx="0.6" fill="#c48952"/><rect x="61.5" y="46.6" width="3.6" height="2.5" rx="0.6" fill="#d19c65"/><rect x="66.1" y="46.6" width="7.5" height="2.5" rx="0.6" fill="#cf9a63"/><rect x="74.5" y="46.6" width="4.2" height="2.5" rx="0.6" fill="#c38851"/><rect x="79.6" y="46.6" width="7.5" height="2.5" rx="0.6" fill="#c0834c"/><rect x="87.9" y="46.6" width="3.7" height="2.5" rx="0.6" fill="#d19b64"/><rect x="92.5" y="46.6" width="8.4" height="2.5" rx="0.6" fill="#c0844d"/><rect x="-5.0" y="50.0" width="3.7" height="2.5" rx="0.6" fill="#cf9962"/><rect x="-0.4" y="50.0" width="8.2" height="2.5" rx="0.6" fill="#c0844d"/><rect x="8.7" y="50.0" width="3.7" height="2.5" rx="0.6" fill="#c68c55"/><rect x="13.4" y="50.0" width="8.4" height="2.5" rx="0.6" fill="#cb945d"/><rect x="22.7" y="50.0" width="8.7" height="2.5" rx="0.6" fill="#c88f58"/><rect x="32.2" y="50.0" width="8.9" height="2.5" rx="0.6" fill="#cc955e"/><rect x="42.1" y="50.0" width="8.2" height="2.5" rx="0.6" fill="#c88f58"/><rect x="51.2" y="50.0" width="8.7" height="2.5" rx="0.6" fill="#ca925b"/><rect x="60.7" y="50.0" width="7.8" height="2.5" rx="0.6" fill="#ca925b"/><rect x="69.5" y="50.0" width="8.4" height="2.5" rx="0.6" fill="#cc965f"/><rect x="78.8" y="50.0" width="8.9" height="2.5" rx="0.6" fill="#c88f58"/><rect x="88.6" y="50.0" width="8.8" height="2.5" rx="0.6" fill="#be824b"/><path d="M18 53.2 C19 44 22 39 30 36 L39 32.5 L51 32.5 L60 36 C66 39 68.5 44 69.5 53.2Z" fill="#3b414b"/><path d="M40 27 L40 33 L45 37.5 L50 33 L50 27Z" fill="#6e4630"/><path d="M37.2 16 C36.6 9 40 5.2 45 5.2 C50 5.2 53.4 9 52.8 16 C52.4 23 49.5 29 45 29 C40.5 29 37.6 23 37.2 16Z" fill="url(#mskin)"/><path d="M42 23.4 q3 1.4 6 0" stroke="#e8d8c8" stroke-width="1" fill="none"/><circle cx="42.2" cy="16.6" r="0.8" fill="#2a1a12"/><circle cx="48" cy="16.8" r="0.8" fill="#2a1a12"/><path d="M40.5 15 h3.4 M46.4 15.2 h3.4" stroke="#3a2418" stroke-width="0.7"/><path d="M45 17.5 v3.6" stroke="#5a3a26" stroke-width="1.2"/><ellipse cx="42.5" cy="9" rx="3.4" ry="2" fill="#c08a62" opacity="0.6"/><path d="M39 33 L45 39 L51 33 L52.5 35 L45 43 L37.5 35Z" fill="#2e333c"/></g></symbol><symbol id="tw" viewBox="0 0 93.45 53.2"><g filter="url(#tb)"><rect width="93.45" height="53.2" fill="#efd7a6"/><rect x="-7.4" y="-1.0" width="8.8" height="2.5" rx="0.6" fill="#d5a468"/><rect x="2.3" y="-1.0" width="8.1" height="2.5" rx="0.6" fill="#deb074"/><rect x="11.3" y="-1.0" width="8.6" height="2.5" rx="0.6" fill="#d9a96d"/><rect x="20.8" y="-1.0" width="7.7" height="2.5" rx="0.6" fill="#ddae72"/><rect x="29.4" y="-1.0" width="7.6" height="2.5" rx="0.6" fill="#e7bd81"/><rect x="37.9" y="-1.0" width="3.9" height="2.5" rx="0.6" fill="#deb074"/><rect x="42.7" y="-1.0" width="3.9" height="2.5" rx="0.6" fill="#d5a367"/><rect x="47.5" y="-1.0" width="8.3" height="2.5" rx="0.6" fill="#e1b478"/><rect x="56.8" y="-1.0" width="9.0" height="2.5" rx="0.6" fill="#dbac70"/><rect x="66.6" y="-1.0" width="9.0" height="2.5" rx="0.6" fill="#d9a96d"/><rect x="76.5" y="-1.0" width="8.3" height="2.5" rx="0.6" fill="#e4b87c"/><rect x="85.7" y="-1.0" width="8.6" height="2.5" rx="0.6" fill="#dfb276"/><rect x="-3.6" y="2.4" width="7.7" height="2.5" rx="0.6" fill="#d7a66a"/><rect x="5.0" y="2.4" width="8.5" height="2.5" rx="0.6" fill="#deb074"/><rect x="14.4" y="2.4" width="7.5" height="2.5" rx="0.6" fill="#dcad71"/><rect x="22.8" y="2.4" width="8.9" height="2.5" rx="0.6" fill="#d9a96d"/><rect x="32.6" y="2.4" width="7.6" height="2.5" rx="0.6" fill="#e5bb7f"/><rect x="41.1" y="2.4" width="8.8" height="2.5" rx="0.6" fill="#ddae72"/><rect x="50.8" y="2.4" width="7.8" height="2.5" rx="0.6" fill="#d6a468"/><rect x="59.5" y="2.4" width="8.5" height="2.5" rx="0.6" fill="#e4b97d"/><rect x="69.0" y="2.4" width="7.9" height="2.5" rx="0.6" fill="#d6a569"/><rect x="77.8" y="2.4" width="8.9" height="2.5" rx="0.6" fill="#d7a66a"/><rect x="87.6" y="2.4" width="7.5" height="2.5" rx="0.6" fill="#dcad71"/><rect x="-0.2" y="5.8" width="8.5" height="2.5" rx="0.6" fill="#e7bd81"/><rect x="9.2" y="5.8" width="8.3" height="2.5" rx="0.6" fill="#e7bd81"/><rect x="18.4" y="5.8" width="7.9" height="2.5" rx="0.6" fill="#e7bd81"/><rect x="27.2" y="5.8" width="4.0" height="2.5" rx="0.6" fill="#d4a367"/><rect x="32.1" y="5.8" width="8.1" height="2.5" rx="0.6" fill="#d8a76b"/><rect x="41.2" y="5.8" width="4.4" height="2.5" rx="0.6" fill="#d8a86c"/><rect x="46.4" y="5.8" width="8.3" height="2.5" rx="0.6" fill="#e0b478"/><rect x="55.6" y="5.8" width="7.8" height="2.5" rx="0.6" fill="#dcad71"/><rect x="64.3" y="5.8" width="8.1" height="2.5" rx="0.6" fill="#daab6f"/><rect x="73.3" y="5.8" width="4.3" height="2.5" rx="0.6" fill="#e5bb7f"/><rect x="78.5" y="5.8" width="3.7" height="2.5" rx="0.6" fill="#e7bc80"/><rect x="83.0" y="5.8" width="8.3" height="2.5" rx="0.6" fill="#dcad71"/><rect x="92.2" y="5.8" width="8.6" height="2.5" rx="0.6" fill="#dfb175"/><rect x="-4.4" y="9.2" width="7.6" height="2.5" rx="0.6" fill="#e0b377"/><rect x="4.1" y="9.2" width="9.0" height="2.5" rx="0.6" fill="#e2b67a"/><rect x="13.9" y="9.2" width="3.8" height="2.5" rx="0.6" fill="#e6bc80"/><rect x="18.6" y="9.2" width="7.9" height="2.5" rx="0.6" fill="#e1b579"/><rect x="27.5" y="9.2" width="7.8" height="2.5" rx="0.6" fill="#dfb175"/><rect x="36.1" y="9.2" width="4.2" height="2.5" rx="0.6" fill="#e7bd81"/><rect x="41.3" y="9.2" width="7.4" height="2.5" rx="0.6" fill="#dbac70"/><rect x="49.5" y="9.2" width="8.6" height="2.5" rx="0.6" fill="#dcad71"/><rect x="59.1" y="9.2" width="7.7" height="2.5" rx="0.6" fill="#ddae72"/><rect x="67.6" y="9.2" width="4.4" height="2.5" rx="0.6" fill="#dcad71"/><rect x="72.9" y="9.2" width="8.2" height="2.5" rx="0.6" fill="#e1b579"/><rect x="81.9" y="9.2" width="8.2" height="2.5" rx="0.6" fill="#daaa6e"/><rect x="91.1" y="9.2" width="7.8" height="2.5" rx="0.6" fill="#d5a367"/><rect x="-7.1" y="12.6" width="4.2" height="2.5" rx="0.6" fill="#e1b478"/><rect x="-2.0" y="12.6" width="3.8" height="2.5" rx="0.6" fill="#daaa6e"/><rect x="2.7" y="12.6" width="8.7" height="2.5" rx="0.6" fill="#d9a96d"/><rect x="12.3" y="12.6" width="7.6" height="2.5" rx="0.6" fill="#d5a367"/><rect x="20.9" y="12.6" width="4.2" height="2.5" rx="0.6" fill="#e5ba7e"/><rect x="26.0" y="12.6" width="8.5" height="2.5" rx="0.6" fill="#dbac70"/><rect x="35.4" y="12.6" width="9.0" height="2.5" rx="0.6" fill="#d7a66a"/><rect x="45.3" y="12.6" width="7.6" height="2.5" rx="0.6" fill="#ddae72"/><rect x="53.8" y="12.6" width="7.8" height="2.5" rx="0.6" fill="#e3b77b"/><rect x="62.5" y="12.6" width="8.8" height="2.5" rx="0.6" fill="#d9a96d"/><rect x="72.2" y="12.6" width="7.8" height="2.5" rx="0.6" fill="#e7bd81"/><rect x="80.9" y="12.6" width="3.6" height="2.5" rx="0.6" fill="#e4b87c"/><rect x="85.4" y="12.6" width="7.7" height="2.5" rx="0.6" fill="#dfb175"/><rect x="-5.0" y="16.0" width="7.7" height="2.5" rx="0.6" fill="#deb074"/><rect x="3.6" y="16.0" width="7.9" height="2.5" rx="0.6" fill="#d5a468"/><rect x="12.4" y="16.0" width="7.4" height="2.5" rx="0.6" fill="#d6a569"/><rect x="20.7" y="16.0" width="9.0" height="2.5" rx="0.6" fill="#d6a569"/><rect x="30.6" y="16.0" width="8.9" height="2.5" rx="0.6" fill="#d9aa6e"/><rect x="40.4" y="16.0" width="8.3" height="2.5" rx="0.6" fill="#e3b77b"/><rect x="49.6" y="16.0" width="8.4" height="2.5" rx="0.6" fill="#dfb276"/><rect x="58.9" y="16.0" width="7.4" height="2.5" rx="0.6" fill="#dbab6f"/><rect x="67.2" y="16.0" width="8.8" height="2.5" rx="0.6" fill="#d8a76b"/><rect x="76.9" y="16.0" width="4.4" height="2.5" rx="0.6" fill="#e3b77b"/><rect x="82.2" y="16.0" width="8.3" height="2.5" rx="0.6" fill="#e5ba7e"/><rect x="91.4" y="16.0" width="4.1" height="2.5" rx="0.6" fill="#deb074"/><rect x="-1.8" y="19.4" width="8.1" height="2.5" rx="0.6" fill="#e1b478"/><rect x="7.3" y="19.4" width="8.0" height="2.5" rx="0.6" fill="#e7bd81"/><rect x="16.1" y="19.4" width="8.7" height="2.5" rx="0.6" fill="#d4a367"/><rect x="25.8" y="19.4" width="3.9" height="2.5" rx="0.6" fill="#d8a76b"/><rect x="30.6" y="19.4" width="7.7" height="2.5" rx="0.6" fill="#dcad71"/><rect x="39.2" y="19.4" width="7.4" height="2.5" rx="0.6" fill="#e2b67a"/><rect x="47.5" y="19.4" width="4.3" height="2.5" rx="0.6" fill="#dfb276"/><rect x="52.7" y="19.4" width="3.9" height="2.5" rx="0.6" fill="#e6bc80"/><rect x="57.5" y="19.4" width="8.5" height="2.5" rx="0.6" fill="#dcae72"/><rect x="66.9" y="19.4" width="8.0" height="2.5" rx="0.6" fill="#dbac70"/><rect x="75.8" y="19.4" width="4.4" height="2.5" rx="0.6" fill="#deb175"/><rect x="81.1" y="19.4" width="4.3" height="2.5" rx="0.6" fill="#d7a76b"/><rect x="86.2" y="19.4" width="4.4" height="2.5" rx="0.6" fill="#e1b478"/><rect x="91.5" y="19.4" width="4.4" height="2.5" rx="0.6" fill="#ddae72"/><rect x="-0.0" y="22.8" width="3.8" height="2.5" rx="0.6" fill="#e2b67a"/><rect x="4.7" y="22.8" width="3.9" height="2.5" rx="0.6" fill="#e7bd81"/><rect x="9.5" y="22.8" width="8.6" height="2.5" rx="0.6" fill="#d7a66a"/><rect x="19.0" y="22.8" width="8.6" height="2.5" rx="0.6" fill="#e4b87c"/><rect x="28.5" y="22.8" width="4.0" height="2.5" rx="0.6" fill="#d6a569"/><rect x="33.4" y="22.8" width="8.1" height="2.5" rx="0.6" fill="#e1b579"/><rect x="42.4" y="22.8" width="7.6" height="2.5" rx="0.6" fill="#d4a266"/><rect x="50.8" y="22.8" width="8.3" height="2.5" rx="0.6" fill="#d8a76b"/><rect x="60.0" y="22.8" width="8.7" height="2.5" rx="0.6" fill="#daaa6e"/><rect x="69.6" y="22.8" width="8.1" height="2.5" rx="0.6" fill="#e6bb7f"/><rect x="78.5" y="22.8" width="7.9" height="2.5" rx="0.6" fill="#e2b67a"/><rect x="87.4" y="22.8" width="8.7" height="2.5" rx="0.6" fill="#dfb175"/><rect x="-7.2" y="26.2" width="7.5" height="2.5" rx="0.6" fill="#e3b77b"/><rect x="1.2" y="26.2" width="8.5" height="2.5" rx="0.6" fill="#d6a569"/><rect x="10.5" y="26.2" width="9.0" height="2.5" rx="0.6" fill="#d6a569"/><rect x="20.4" y="26.2" width="8.7" height="2.5" rx="0.6" fill="#e7bc80"/><rect x="30.1" y="26.2" width="8.6" height="2.5" rx="0.6" fill="#e6bc80"/><rect x="39.5" y="26.2" width="8.2" height="2.5" rx="0.6" fill="#d9a96d"/><rect x="48.6" y="26.2" width="4.4" height="2.5" rx="0.6" fill="#e0b478"/><rect x="53.9" y="26.2" width="8.9" height="2.5" rx="0.6" fill="#e1b478"/><rect x="63.7" y="26.2" width="8.5" height="2.5" rx="0.6" fill="#d6a569"/><rect x="73.1" y="26.2" width="8.2" height="2.5" rx="0.6" fill="#e2b67a"/><rect x="82.2" y="26.2" width="7.8" height="2.5" rx="0.6" fill="#e6bb7f"/><rect x="90.9" y="26.2" width="4.2" height="2.5" rx="0.6" fill="#dfb175"/><rect x="-4.6" y="29.6" width="8.4" height="2.5" rx="0.6" fill="#d6a569"/><rect x="4.7" y="29.6" width="8.0" height="2.5" rx="0.6" fill="#dfb276"/><rect x="13.6" y="29.6" width="3.6" height="2.5" rx="0.6" fill="#ddaf73"/><rect x="18.1" y="29.6" width="3.9" height="2.5" rx="0.6" fill="#e1b478"/><rect x="22.9" y="29.6" width="8.7" height="2.5" rx="0.6" fill="#d8a76b"/><rect x="32.5" y="29.6" width="7.6" height="2.5" rx="0.6" fill="#d6a569"/><rect x="41.0" y="29.6" width="8.4" height="2.5" rx="0.6" fill="#dcad71"/><rect x="50.3" y="29.6" width="8.7" height="2.5" rx="0.6" fill="#deb074"/><rect x="59.9" y="29.6" width="8.8" height="2.5" rx="0.6" fill="#d9a96d"/><rect x="69.6" y="29.6" width="8.7" height="2.5" rx="0.6" fill="#e2b67a"/><rect x="79.2" y="29.6" width="7.6" height="2.5" rx="0.6" fill="#dcae72"/><rect x="87.7" y="29.6" width="7.7" height="2.5" rx="0.6" fill="#deb074"/><rect x="-7.9" y="33.0" width="8.5" height="2.5" rx="0.6" fill="#d7a66a"/><rect x="1.6" y="33.0" width="4.0" height="2.5" rx="0.6" fill="#d7a66a"/><rect x="6.4" y="33.0" width="7.9" height="2.5" rx="0.6" fill="#dfb175"/><rect x="15.3" y="33.0" width="8.7" height="2.5" rx="0.6" fill="#e2b67a"/><rect x="24.8" y="33.0" width="7.5" height="2.5" rx="0.6" fill="#dbac70"/><rect x="33.2" y="33.0" width="8.6" height="2.5" rx="0.6" fill="#dcae72"/><rect x="42.7" y="33.0" width="7.6" height="2.5" rx="0.6" fill="#e5ba7e"/><rect x="51.3" y="33.0" width="8.6" height="2.5" rx="0.6" fill="#ddae72"/><rect x="60.8" y="33.0" width="7.9" height="2.5" rx="0.6" fill="#e3b87c"/><rect x="69.6" y="33.0" width="4.2" height="2.5" rx="0.6" fill="#d6a468"/><rect x="74.7" y="33.0" width="3.9" height="2.5" rx="0.6" fill="#e2b67a"/><rect x="79.5" y="33.0" width="8.3" height="2.5" rx="0.6" fill="#e0b478"/><rect x="88.7" y="33.0" width="7.4" height="2.5" rx="0.6" fill="#e5ba7e"/><rect x="-6.2" y="36.4" width="7.6" height="2.5" rx="0.6" fill="#e2b67a"/><rect x="2.2" y="36.4" width="8.9" height="2.5" rx="0.6" fill="#e0b377"/><rect x="12.1" y="36.4" width="8.1" height="2.5" rx="0.6" fill="#d6a569"/><rect x="21.0" y="36.4" width="8.2" height="2.5" rx="0.6" fill="#e6bc80"/><rect x="30.2" y="36.4" width="4.1" height="2.5" rx="0.6" fill="#d7a66a"/><rect x="35.2" y="36.4" width="8.0" height="2.5" rx="0.6" fill="#daab6f"/><rect x="44.1" y="36.4" width="8.7" height="2.5" rx="0.6" fill="#e5ba7e"/><rect x="53.7" y="36.4" width="8.3" height="2.5" rx="0.6" fill="#e5ba7e"/><rect x="62.9" y="36.4" width="3.9" height="2.5" rx="0.6" fill="#e6bb7f"/><rect x="67.7" y="36.4" width="4.1" height="2.5" rx="0.6" fill="#e4b97d"/><rect x="72.7" y="36.4" width="7.7" height="2.5" rx="0.6" fill="#d4a266"/><rect x="81.3" y="36.4" width="8.9" height="2.5" rx="0.6" fill="#dbac70"/><rect x="91.1" y="36.4" width="8.4" height="2.5" rx="0.6" fill="#e4b87c"/><rect x="-4.2" y="39.8" width="7.8" height="2.5" rx="0.6" fill="#e6bb7f"/><rect x="4.5" y="39.8" width="8.5" height="2.5" rx="0.6" fill="#e7bd81"/><rect x="13.9" y="39.8" width="8.2" height="2.5" rx="0.6" fill="#daaa6e"/><rect x="23.0" y="39.8" width="3.9" height="2.5" rx="0.6" fill="#deb175"/><rect x="27.8" y="39.8" width="4.3" height="2.5" rx="0.6" fill="#d5a367"/><rect x="33.0" y="39.8" width="4.3" height="2.5" rx="0.6" fill="#dfb276"/><rect x="38.2" y="39.8" width="7.5" height="2.5" rx="0.6" fill="#d6a569"/><rect x="46.6" y="39.8" width="7.6" height="2.5" rx="0.6" fill="#dcae72"/><rect x="55.0" y="39.8" width="8.0" height="2.5" rx="0.6" fill="#d6a468"/><rect x="63.9" y="39.8" width="7.9" height="2.5" rx="0.6" fill="#dfb175"/><rect x="72.7" y="39.8" width="4.3" height="2.5" rx="0.6" fill="#e7bd81"/><rect x="78.0" y="39.8" width="8.8" height="2.5" rx="0.6" fill="#e3b77b"/><rect x="87.6" y="39.8" width="9.0" height="2.5" rx="0.6" fill="#d4a367"/><rect x="-5.2" y="43.2" width="8.6" height="2.5" rx="0.6" fill="#e4b97d"/><rect x="4.2" y="43.2" width="4.0" height="2.5" rx="0.6" fill="#e0b377"/><rect x="9.2" y="43.2" width="7.6" height="2.5" rx="0.6" fill="#d4a266"/><rect x="17.7" y="43.2" width="8.9" height="2.5" rx="0.6" fill="#e4b97d"/><rect x="27.4" y="43.2" width="4.2" height="2.5" rx="0.6" fill="#deb175"/><rect x="32.6" y="43.2" width="8.5" height="2.5" rx="0.6" fill="#d7a76b"/><rect x="41.9" y="43.2" width="7.8" height="2.5" rx="0.6" fill="#e3b87c"/><rect x="50.7" y="43.2" width="7.6" height="2.5" rx="0.6" fill="#e7bd81"/><rect x="59.1" y="43.2" width="8.7" height="2.5" rx="0.6" fill="#d9a96d"/><rect x="68.7" y="43.2" width="3.7" height="2.5" rx="0.6" fill="#e0b377"/><rect x="73.4" y="43.2" width="3.9" height="2.5" rx="0.6" fill="#d8a76b"/><rect x="78.2" y="43.2" width="8.9" height="2.5" rx="0.6" fill="#e7bd81"/><rect x="88.0" y="43.2" width="3.7" height="2.5" rx="0.6" fill="#e2b67a"/><rect x="92.6" y="43.2" width="7.7" height="2.5" rx="0.6" fill="#e4b97d"/><rect x="-1.8" y="46.6" width="7.4" height="2.5" rx="0.6" fill="#e1b579"/><rect x="6.5" y="46.6" width="8.1" height="2.5" rx="0.6" fill="#e7bc80"/><rect x="15.5" y="46.6" width="3.8" height="2.5" rx="0.6" fill="#e6bb7f"/><rect x="20.1" y="46.6" width="8.7" height="2.5" rx="0.6" fill="#e5bb7f"/><rect x="29.7" y="46.6" width="8.6" height="2.5" rx="0.6" fill="#d4a266"/><rect x="39.2" y="46.6" width="7.4" height="2.5" rx="0.6" fill="#dfb276"/><rect x="47.5" y="46.6" width="4.2" height="2.5" rx="0.6" fill="#dfb276"/><rect x="52.6" y="46.6" width="8.8" height="2.5" rx="0.6" fill="#d8a86c"/><rect x="62.3" y="46.6" width="8.6" height="2.5" rx="0.6" fill="#d6a569"/><rect x="71.8" y="46.6" width="7.5" height="2.5" rx="0.6" fill="#d6a569"/><rect x="80.2" y="46.6" width="8.9" height="2.5" rx="0.6" fill="#e4b97d"/><rect x="90.1" y="46.6" width="4.0" height="2.5" rx="0.6" fill="#ddaf73"/><rect x="-4.1" y="50.0" width="8.8" height="2.5" rx="0.6" fill="#dfb175"/><rect x="5.6" y="50.0" width="7.4" height="2.5" rx="0.6" fill="#deb074"/><rect x="13.9" y="50.0" width="4.3" height="2.5" rx="0.6" fill="#d4a266"/><rect x="19.1" y="50.0" width="3.8" height="2.5" rx="0.6" fill="#e0b377"/><rect x="23.8" y="50.0" width="7.9" height="2.5" rx="0.6" fill="#e6bc80"/><rect x="32.6" y="50.0" width="8.2" height="2.5" rx="0.6" fill="#d5a468"/><rect x="41.7" y="50.0" width="8.8" height="2.5" rx="0.6" fill="#e1b579"/><rect x="51.4" y="50.0" width="8.4" height="2.5" rx="0.6" fill="#e1b478"/><rect x="60.7" y="50.0" width="7.9" height="2.5" rx="0.6" fill="#e2b77b"/><rect x="69.5" y="50.0" width="3.8" height="2.5" rx="0.6" fill="#e5bb7f"/><rect x="74.2" y="50.0" width="7.5" height="2.5" rx="0.6" fill="#daab6f"/><rect x="82.6" y="50.0" width="4.2" height="2.5" rx="0.6" fill="#e5bb7f"/><rect x="87.6" y="50.0" width="8.3" height="2.5" rx="0.6" fill="#e5bb7f"/><path d="M28.5 53.2 C28.5 46 29.5 40 31.5 36.5 L36 38 L36 53.2Z M58 53.2 L58.5 38 L62.5 35.5 C65.5 40 67 46 67.5 53.2Z" fill="#d8a47c"/><path d="M42.5 26 L42 32 L38 34 L47 46 L55 33 L51.5 31.5 L51.5 26Z" fill="#d8a47c"/><path d="M32 35 C34 32 37.5 31 41 30.5 C40.5 36 43 44 47 45 C51 44 53.5 37 53 30.5 C57 30 61 31.5 63 35.5 L58.5 38.5 L59 53.2 L36 53.2 L36 38.5 L31.5 37Z" fill="#1a1613"/><path d="M41.5 36 C42.5 42 45 45.5 47 45 C49 44.5 51 41 51.8 36" fill="none" stroke="#4f9c88" stroke-width="1.3"/><path d="M40.2 18 C39.6 11.5 42.5 8.4 46.9 8.4 C51.3 8.4 54 11.5 53.6 18 C53.2 23.5 50.5 28.6 46.9 28.6 C43.3 28.6 40.6 23.5 40.2 18Z" fill="#dba982"/><path d="M39.2 19 C37.8 12 40.5 6.4 46.9 6.2 C52.8 6 55.4 10.5 54.8 16 C54.6 19 54 21 53.2 21.8 C53.5 18 52.8 15 51.6 12.8 C48.5 13 44 11.6 41.8 14.2 C40.6 16 40.3 18 40.4 20.5Z" fill="#6b4829"/><path d="M44 23.6 q3 1.6 6 0.2" stroke="#f4ece4" stroke-width="1.1" fill="none"/><circle cx="44.2" cy="17.8" r="0.7" fill="#3a2416"/><circle cx="50" cy="18.2" r="0.7" fill="#3a2416"/></g></symbol></defs></svg>
<div class="a" style="left:258px;top:625px;width:408.5px;height:83px;background:#5f9a20;border-radius:3px;border:1.5px solid #70ad2a;border-bottom-color:rgba(0,0,0,0.35)"></div>
<svg style="left:0;top:627.8px" width="1600" height="53.2" viewBox="0 0 1600 53.2"><defs><clipPath id="vc1"><rect x="260.8" y="0" width="402.90000000000003" height="53.2"/></clipPath></defs><g clip-path="url(#vc1)"><use href="#tm" x="224.65" y="0" width="93.45" height="53.2"/><rect x="224.15" y="0" width="1" height="53.2" fill="#2a2016" opacity="0.75"/><use href="#tm" x="318.10" y="0" width="93.45" height="53.2"/><rect x="317.60" y="0" width="1" height="53.2" fill="#2a2016" opacity="0.75"/><use href="#tm" x="411.55" y="0" width="93.45" height="53.2"/><rect x="411.05" y="0" width="1" height="53.2" fill="#2a2016" opacity="0.75"/><use href="#tm" x="505.00" y="0" width="93.45" height="53.2"/><rect x="504.50" y="0" width="1" height="53.2" fill="#2a2016" opacity="0.75"/><use href="#tm" x="598.45" y="0" width="93.45" height="53.2"/><rect x="597.95" y="0" width="1" height="53.2" fill="#2a2016" opacity="0.75"/></g></svg>
<div class="a" style="left:260.8px;top:627.5px;width:402.90000000000003px;height:1px;background:rgba(0,0,0,0.45);"></div>
<div class="a" style="left:260.8px;top:680.3px;width:402.90000000000003px;height:1px;background:rgba(0,0,0,0.45);"></div>
<svg style="left:267.5px;top:689px" width="14" height="13" viewBox="0 0 14 13"><g fill="none" stroke="#fff" stroke-width="1.7" stroke-linecap="round"><path d="M6.2 4.4 L8.2 2.4 a2.6 2.6 0 0 1 3.7 3.7 L9.6 8.4 a2.6 2.6 0 0 1 -3.7 0"/><path d="M7.8 8.6 L5.8 10.6 a2.6 2.6 0 0 1 -3.7 -3.7 L4.4 4.6 a2.6 2.6 0 0 1 3.7 0"/></g></svg>
<div class="t" style="left:290px;top:690px;font-size:12px;color:#fff;font-weight:bold;letter-spacing:-0.3px">Simon Says</div>
<div class="a" style="left:668px;top:625px;width:591.5px;height:83px;background:#e96e02;border-radius:3px;border:1.5px solid #f5861a;border-bottom-color:rgba(0,0,0,0.35)"></div>
<svg style="left:0;top:627.8px" width="1600" height="53.2" viewBox="0 0 1600 53.2"><defs><clipPath id="vc2"><rect x="670.8" y="0" width="585.9000000000001" height="53.2"/></clipPath></defs><g clip-path="url(#vc2)"><use href="#tw" x="631.80" y="0" width="93.45" height="53.2"/><rect x="631.30" y="0" width="1" height="53.2" fill="#2a2016" opacity="0.75"/><use href="#tw" x="725.25" y="0" width="93.45" height="53.2"/><rect x="724.75" y="0" width="1" height="53.2" fill="#2a2016" opacity="0.75"/><use href="#tw" x="818.70" y="0" width="93.45" height="53.2"/><rect x="818.20" y="0" width="1" height="53.2" fill="#2a2016" opacity="0.75"/><use href="#tw" x="912.15" y="0" width="93.45" height="53.2"/><rect x="911.65" y="0" width="1" height="53.2" fill="#2a2016" opacity="0.75"/><use href="#tw" x="1005.60" y="0" width="93.45" height="53.2"/><rect x="1005.10" y="0" width="1" height="53.2" fill="#2a2016" opacity="0.75"/><use href="#tw" x="1099.05" y="0" width="93.45" height="53.2"/><rect x="1098.55" y="0" width="1" height="53.2" fill="#2a2016" opacity="0.75"/><use href="#tw" x="1192.50" y="0" width="93.45" height="53.2"/><rect x="1192.00" y="0" width="1" height="53.2" fill="#2a2016" opacity="0.75"/></g></svg>
<div class="a" style="left:670.8px;top:627.5px;width:585.9000000000001px;height:1px;background:rgba(0,0,0,0.45);"></div>
<div class="a" style="left:670.8px;top:680.3px;width:585.9000000000001px;height:1px;background:rgba(0,0,0,0.45);"></div>
<svg style="left:677.5px;top:689px" width="14" height="13" viewBox="0 0 14 13"><g fill="none" stroke="#fff" stroke-width="1.7" stroke-linecap="round"><path d="M6.2 4.4 L8.2 2.4 a2.6 2.6 0 0 1 3.7 3.7 L9.6 8.4 a2.6 2.6 0 0 1 -3.7 0"/><path d="M7.8 8.6 L5.8 10.6 a2.6 2.6 0 0 1 -3.7 -3.7 L4.4 4.6 a2.6 2.6 0 0 1 3.7 0"/></g></svg>
<div class="t" style="left:700px;top:690px;font-size:12px;color:#fff;font-weight:bold;letter-spacing:-0.3px">Simon Says</div>
<div class="a" style="left:1261.2px;top:625px;width:330.79999999999995px;height:83px;background:#4577a8;border-radius:3px;border:1.5px solid #5889b8;border-bottom-color:rgba(0,0,0,0.35)"></div>
<svg style="left:0;top:627.8px" width="1600" height="53.2" viewBox="0 0 1600 53.2"><defs><clipPath id="vc3"><rect x="1264.0" y="0" width="325.20000000000005" height="53.2"/></clipPath></defs><g clip-path="url(#vc3)"><use href="#tm" x="1246.65" y="0" width="93.45" height="53.2"/><rect x="1246.15" y="0" width="1" height="53.2" fill="#2a2016" opacity="0.75"/><use href="#tm" x="1340.10" y="0" width="93.45" height="53.2"/><rect x="1339.60" y="0" width="1" height="53.2" fill="#2a2016" opacity="0.75"/><use href="#tm" x="1433.55" y="0" width="93.45" height="53.2"/><rect x="1433.05" y="0" width="1" height="53.2" fill="#2a2016" opacity="0.75"/><use href="#tm" x="1527.00" y="0" width="93.45" height="53.2"/><rect x="1526.50" y="0" width="1" height="53.2" fill="#2a2016" opacity="0.75"/></g></svg>
<div class="a" style="left:1264.0px;top:627.5px;width:325.20000000000005px;height:1px;background:rgba(0,0,0,0.45);"></div>
<div class="a" style="left:1264.0px;top:680.3px;width:325.20000000000005px;height:1px;background:rgba(0,0,0,0.45);"></div>
<svg style="left:1270.7px;top:689px" width="14" height="13" viewBox="0 0 14 13"><g fill="none" stroke="#fff" stroke-width="1.7" stroke-linecap="round"><path d="M6.2 4.4 L8.2 2.4 a2.6 2.6 0 0 1 3.7 3.7 L9.6 8.4 a2.6 2.6 0 0 1 -3.7 0"/><path d="M7.8 8.6 L5.8 10.6 a2.6 2.6 0 0 1 -3.7 -3.7 L4.4 4.6 a2.6 2.6 0 0 1 3.7 0"/></g></svg>
<div class="t" style="left:1293.2px;top:690px;font-size:12px;color:#fff;font-weight:bold;letter-spacing:-0.3px">Simon Says</div>
<div class="a" style="left:258px;top:714px;width:408.5px;height:62px;background:#44936a;border-radius:3px;border:1px solid #52a47a;border-bottom-color:rgba(0,0,0,0.35)"></div>
<div class="a" style="left:259px;top:727.3px;width:406.5px;height:1px;background:#86c9a3;"></div>
<svg style="left:267.5px;top:757px" width="14" height="13" viewBox="0 0 14 13"><g fill="none" stroke="#fff" stroke-width="1.7" stroke-linecap="round"><path d="M6.2 4.4 L8.2 2.4 a2.6 2.6 0 0 1 3.7 3.7 L9.6 8.4 a2.6 2.6 0 0 1 -3.7 0"/><path d="M7.8 8.6 L5.8 10.6 a2.6 2.6 0 0 1 -3.7 -3.7 L4.4 4.6 a2.6 2.6 0 0 1 3.7 0"/></g></svg>
<div class="t" style="left:290px;top:758px;font-size:12px;color:#fff;font-weight:bold;letter-spacing:-0.3px">Simon Says</div>
<div class="a" style="left:668px;top:714px;width:591.5px;height:62px;background:#e96e02;border-radius:3px;border:1px solid #f58a1e;border-bottom-color:rgba(0,0,0,0.35)"></div>
<div class="a" style="left:669px;top:727.3px;width:589.5px;height:1px;background:#f7a869;"></div>
<svg style="left:677.5px;top:757px" width="14" height="13" viewBox="0 0 14 13"><g fill="none" stroke="#fff" stroke-width="1.7" stroke-linecap="round"><path d="M6.2 4.4 L8.2 2.4 a2.6 2.6 0 0 1 3.7 3.7 L9.6 8.4 a2.6 2.6 0 0 1 -3.7 0"/><path d="M7.8 8.6 L5.8 10.6 a2.6 2.6 0 0 1 -3.7 -3.7 L4.4 4.6 a2.6 2.6 0 0 1 3.7 0"/></g></svg>
<div class="t" style="left:700px;top:758px;font-size:12px;color:#fff;font-weight:bold;letter-spacing:-0.3px">Simon Says</div>
<div class="a" style="left:1261.2px;top:714px;width:330.79999999999995px;height:62px;background:#44936a;border-radius:3px;border:1px solid #52a47a;border-bottom-color:rgba(0,0,0,0.35)"></div>
<div class="a" style="left:1262.2px;top:727.3px;width:328.79999999999995px;height:1px;background:#86c9a3;"></div>
<svg style="left:1270.7px;top:757px" width="14" height="13" viewBox="0 0 14 13"><g fill="none" stroke="#fff" stroke-width="1.7" stroke-linecap="round"><path d="M6.2 4.4 L8.2 2.4 a2.6 2.6 0 0 1 3.7 3.7 L9.6 8.4 a2.6 2.6 0 0 1 -3.7 0"/><path d="M7.8 8.6 L5.8 10.6 a2.6 2.6 0 0 1 -3.7 -3.7 L4.4 4.6 a2.6 2.6 0 0 1 3.7 0"/></g></svg>
<div class="t" style="left:1293.2px;top:758px;font-size:12px;color:#fff;font-weight:bold;letter-spacing:-0.3px">Simon Says</div>
<svg style="left:0;top:0" width="1600" height="846" viewBox="0 0 1600 846"><polygon points="259.0,743.1 260.0,742.3 261.0,742.3 262.0,742.0 263.0,742.6 264.0,742.0 265.0,742.4 266.0,743.0 267.0,742.8 268.0,741.4 269.0,741.8 270.0,740.1 271.0,740.8 272.0,740.9 273.0,739.9 274.0,740.2 275.0,740.1 276.0,739.9 277.0,738.8 278.0,739.3 279.0,738.8 280.0,740.7 281.0,739.9 282.0,739.9 283.0,740.6 284.0,741.9 285.0,742.1 286.0,743.1 287.0,742.8 288.0,741.9 289.0,742.5 290.0,742.3 291.0,743.2 292.0,741.9 293.0,740.9 294.0,740.1 295.0,740.4 296.0,737.9 297.0,738.9 298.0,738.4 299.0,737.5 300.0,737.2 301.0,738.1 302.0,738.1 303.0,739.1 304.0,737.8 305.0,738.7 306.0,739.1 307.0,740.1 308.0,741.4 309.0,743.2 310.0,742.6 311.0,742.3 312.0,742.3 313.0,742.3 314.0,742.7 315.0,743.2 316.0,742.4 317.0,741.2 318.0,740.8 319.0,741.2 320.0,740.3 321.0,741.1 322.0,739.6 323.0,740.6 324.0,740.0 325.0,740.3 326.0,740.2 327.0,739.1 328.0,739.8 329.0,740.5 330.0,739.7 331.0,740.4 332.0,739.8 333.0,739.8 334.0,741.0 335.0,741.0 336.0,741.2 337.0,740.8 338.0,741.8 339.0,741.6 340.0,742.8 341.0,741.9 342.0,739.3 343.0,738.5 344.0,734.4 345.0,736.2 346.0,736.2 347.0,735.1 348.0,737.8 349.0,737.7 350.0,740.8 351.0,742.4 352.0,741.3 353.0,741.0 354.0,741.1 355.0,741.3 356.0,741.0 357.0,741.6 358.0,741.8 359.0,742.3 360.0,743.3 361.0,742.7 362.0,741.4 363.0,741.8 364.0,741.2 365.0,740.8 366.0,741.0 367.0,741.7 368.0,742.3 369.0,743.0 370.0,742.1 371.0,740.7 372.0,739.7 373.0,740.1 374.0,738.8 375.0,738.6 376.0,740.5 377.0,741.0 378.0,741.8 379.0,742.4 380.0,742.8 381.0,742.0 382.0,741.7 383.0,742.0 384.0,740.7 385.0,740.4 386.0,741.1 387.0,740.1 388.0,740.2 389.0,741.0 390.0,741.1 391.0,739.5 392.0,740.9 393.0,740.8 394.0,741.0 395.0,740.7 396.0,739.9 397.0,741.1 398.0,741.5 399.0,741.8 400.0,740.8 401.0,741.6 402.0,742.3 403.0,742.3 404.0,743.3 405.0,743.2 406.0,742.6 407.0,742.6 408.0,742.9 409.0,742.9 410.0,743.1 411.0,742.7 412.0,743.2 413.0,741.2 414.0,740.8 415.0,740.0 416.0,738.1 417.0,738.9 418.0,738.0 419.0,738.8 420.0,738.9 421.0,738.3 422.0,739.8 423.0,739.8 424.0,740.2 425.0,741.7 426.0,743.2 427.0,737.2 428.0,735.0 429.0,733.3 430.0,735.8 431.0,732.6 432.0,734.0 433.0,736.4 434.0,741.4 435.0,742.0 436.0,741.1 437.0,740.8 438.0,740.9 439.0,740.6 440.0,741.5 441.0,741.1 442.0,742.5 443.0,741.3 444.0,740.3 445.0,740.0 446.0,739.4 447.0,740.6 448.0,743.3 449.0,743.0 450.0,742.0 451.0,742.0 452.0,741.9 453.0,741.4 454.0,741.0 455.0,740.7 456.0,741.2 457.0,740.7 458.0,740.7 459.0,739.8 460.0,740.8 461.0,741.1 462.0,740.3 463.0,740.9 464.0,739.6 465.0,740.0 466.0,740.6 467.0,740.1 468.0,740.0 469.0,739.9 470.0,741.3 471.0,741.3 472.0,740.8 473.0,741.1 474.0,741.7 475.0,742.2 476.0,742.6 477.0,742.3 478.0,743.3 479.0,742.8 480.0,742.6 481.0,742.6 482.0,742.8 483.0,742.8 484.0,742.9 485.0,742.7 486.0,742.3 487.0,741.0 488.0,741.1 489.0,741.5 490.0,741.1 491.0,741.4 492.0,740.5 493.0,740.1 494.0,739.7 495.0,740.7 496.0,740.7 497.0,740.8 498.0,740.0 499.0,739.9 500.0,740.8 501.0,740.7 502.0,741.5 503.0,742.1 504.0,742.5 505.0,742.6 506.0,742.8 507.0,742.2 508.0,741.1 509.0,740.6 510.0,740.1 511.0,740.0 512.0,740.0 513.0,738.9 514.0,739.5 515.0,739.8 516.0,740.6 517.0,739.7 518.0,739.6 519.0,739.8 520.0,740.7 521.0,741.5 522.0,742.9 523.0,743.4 524.0,743.5 525.0,743.4 526.0,743.4 527.0,743.3 528.0,743.2 529.0,743.3 530.0,743.2 531.0,743.2 532.0,743.2 533.0,743.1 534.0,743.1 535.0,743.1 536.0,743.3 537.0,743.2 538.0,743.2 539.0,743.1 540.0,743.3 541.0,743.3 542.0,743.3 543.0,743.2 544.0,743.3 545.0,743.2 546.0,743.2 547.0,743.5 548.0,743.2 549.0,743.5 550.0,743.4 551.0,743.4 552.0,743.6 553.0,740.4 554.0,738.6 555.0,737.2 556.0,736.3 557.0,732.8 558.0,735.3 559.0,733.4 560.0,736.9 561.0,735.7 562.0,738.1 563.0,740.0 564.0,742.6 565.0,741.5 566.0,740.9 567.0,741.0 568.0,740.9 569.0,741.4 570.0,741.1 571.0,741.4 572.0,741.1 573.0,742.3 574.0,742.7 575.0,739.4 576.0,734.1 577.0,734.2 578.0,732.3 579.0,734.3 580.0,742.6 581.0,741.3 582.0,740.5 583.0,739.5 584.0,740.7 585.0,741.2 586.0,738.5 587.0,733.6 588.0,732.4 589.0,731.0 590.0,734.9 591.0,742.6 592.0,739.7 593.0,738.7 594.0,737.5 595.0,738.0 596.0,741.4 597.0,740.7 598.0,737.8 599.0,733.1 600.0,735.6 601.0,731.7 602.0,735.1 603.0,737.3 604.0,738.3 605.0,743.1 606.0,742.6 607.0,742.3 608.0,742.1 609.0,742.6 610.0,742.2 611.0,742.3 612.0,742.7 613.0,743.5 614.0,742.2 615.0,741.3 616.0,740.5 617.0,740.5 618.0,741.5 619.0,742.3 620.0,742.6 621.0,741.2 622.0,738.3 623.0,738.3 624.0,738.6 625.0,736.8 626.0,736.6 627.0,734.6 628.0,735.9 629.0,735.2 630.0,738.1 631.0,736.5 632.0,739.0 633.0,738.4 634.0,740.8 635.0,743.2 636.0,742.2 637.0,740.9 638.0,740.7 639.0,740.2 640.0,739.5 641.0,739.7 642.0,740.4 643.0,740.3 644.0,741.7 645.0,742.0 646.0,743.4 647.0,742.7 648.0,741.5 649.0,741.4 650.0,741.0 651.0,740.4 652.0,740.7 653.0,740.2 654.0,740.6 655.0,739.6 656.0,738.6 657.0,738.8 658.0,738.6 659.0,740.3 660.0,739.5 661.0,739.3 662.0,739.6 663.0,739.6 664.0,740.9 665.0,740.5 666.0,742.0 666.0,747.3 665.0,749.1 664.0,748.6 663.0,750.0 662.0,749.6 661.0,750.4 660.0,750.6 659.0,749.2 658.0,751.3 657.0,751.3 656.0,751.5 655.0,750.4 654.0,749.5 653.0,749.1 652.0,749.2 651.0,749.1 650.0,748.7 649.0,748.0 648.0,747.9 647.0,747.0 646.0,746.2 645.0,747.3 644.0,747.7 643.0,749.0 642.0,749.5 641.0,750.0 640.0,750.3 639.0,749.2 638.0,748.4 637.0,749.0 636.0,747.2 635.0,746.4 634.0,748.6 633.0,751.6 632.0,750.9 631.0,752.5 630.0,751.1 629.0,753.2 628.0,752.6 627.0,753.5 626.0,753.3 625.0,751.9 624.0,750.9 623.0,751.9 622.0,751.1 621.0,748.0 620.0,747.1 619.0,747.5 618.0,748.4 617.0,749.2 616.0,749.2 615.0,748.4 614.0,747.6 613.0,746.1 612.0,746.6 611.0,747.2 610.0,747.3 609.0,747.2 608.0,747.3 607.0,747.6 606.0,746.9 605.0,746.6 604.0,751.6 603.0,751.3 602.0,753.4 601.0,756.0 600.0,752.7 599.0,757.4 598.0,751.6 597.0,748.6 596.0,748.2 595.0,750.6 594.0,751.3 593.0,751.3 592.0,750.3 591.0,746.8 590.0,755.4 589.0,756.7 588.0,758.2 587.0,755.2 586.0,750.5 585.0,748.3 584.0,748.6 583.0,749.8 582.0,748.9 581.0,748.3 580.0,747.1 579.0,755.4 578.0,757.9 577.0,753.9 576.0,756.3 575.0,749.4 574.0,746.7 573.0,747.2 572.0,748.2 571.0,748.3 570.0,748.7 569.0,748.3 568.0,748.3 567.0,748.3 566.0,748.8 565.0,748.0 564.0,746.7 563.0,749.1 562.0,751.8 561.0,753.2 560.0,753.3 559.0,756.9 558.0,755.2 557.0,756.0 556.0,753.7 555.0,752.4 554.0,751.0 553.0,749.5 552.0,746.0 551.0,746.2 550.0,746.1 549.0,746.1 548.0,746.3 547.0,746.0 546.0,746.4 545.0,746.3 544.0,746.4 543.0,746.2 542.0,746.2 541.0,746.4 540.0,746.1 539.0,746.5 538.0,746.2 537.0,746.6 536.0,746.2 535.0,746.5 534.0,746.6 533.0,746.6 532.0,746.4 531.0,746.3 530.0,746.4 529.0,746.3 528.0,746.5 527.0,746.3 526.0,746.3 525.0,746.1 524.0,745.9 523.0,746.2 522.0,746.5 521.0,748.4 520.0,748.7 519.0,749.6 518.0,749.9 517.0,750.3 516.0,748.6 515.0,749.3 514.0,750.2 513.0,750.8 512.0,749.3 511.0,749.4 510.0,748.8 509.0,748.7 508.0,748.3 507.0,747.3 506.0,747.0 505.0,747.2 504.0,747.2 503.0,747.6 502.0,747.8 501.0,748.9 500.0,749.0 499.0,749.6 498.0,749.8 497.0,748.9 496.0,748.9 495.0,748.9 494.0,749.4 493.0,749.5 492.0,748.4 491.0,747.9 490.0,748.6 489.0,747.8 488.0,748.3 487.0,748.2 486.0,747.5 485.0,746.8 484.0,746.6 483.0,746.7 482.0,746.9 481.0,747.1 480.0,747.1 479.0,746.6 478.0,746.5 477.0,747.3 476.0,747.2 475.0,747.5 474.0,747.8 473.0,748.6 472.0,748.3 471.0,748.2 470.0,748.0 469.0,749.6 468.0,750.0 467.0,749.5 466.0,749.1 465.0,749.9 464.0,749.6 463.0,748.9 462.0,749.6 461.0,748.0 460.0,748.9 459.0,750.2 458.0,748.9 457.0,748.5 456.0,748.3 455.0,749.0 454.0,748.5 453.0,748.2 452.0,747.2 451.0,747.6 450.0,747.5 449.0,746.5 448.0,746.1 447.0,748.4 446.0,750.0 445.0,748.9 444.0,749.0 443.0,748.2 442.0,747.1 441.0,748.7 440.0,747.7 439.0,749.1 438.0,748.2 437.0,748.4 436.0,748.6 435.0,747.8 434.0,748.5 433.0,752.0 432.0,754.3 431.0,756.0 430.0,753.6 429.0,755.5 428.0,755.5 427.0,751.6 426.0,746.2 425.0,747.8 424.0,749.7 423.0,750.0 422.0,749.8 421.0,750.4 420.0,750.0 419.0,749.9 418.0,751.6 417.0,750.6 416.0,751.0 415.0,749.9 414.0,748.5 413.0,748.2 412.0,746.4 411.0,746.8 410.0,746.4 409.0,746.6 408.0,746.7 407.0,747.0 406.0,747.0 405.0,746.4 404.0,746.1 403.0,747.6 402.0,747.0 401.0,747.9 400.0,748.5 399.0,747.4 398.0,748.1 397.0,748.4 396.0,749.3 395.0,749.3 394.0,748.9 393.0,749.0 392.0,748.2 391.0,749.9 390.0,748.2 389.0,748.8 388.0,748.8 387.0,748.8 386.0,748.6 385.0,749.1 384.0,748.9 383.0,747.4 382.0,747.6 381.0,747.5 380.0,746.8 379.0,747.4 378.0,748.1 377.0,748.1 376.0,749.1 375.0,751.5 374.0,750.9 373.0,749.2 372.0,749.6 371.0,748.9 370.0,747.3 369.0,746.4 368.0,747.3 367.0,748.2 366.0,748.7 365.0,748.5 364.0,748.6 363.0,747.5 362.0,748.3 361.0,746.8 360.0,746.1 359.0,747.5 358.0,747.8 357.0,748.0 356.0,748.2 355.0,748.4 354.0,748.2 353.0,748.5 352.0,748.6 351.0,746.9 350.0,749.2 349.0,750.9 348.0,750.8 347.0,754.1 346.0,754.1 345.0,753.9 344.0,755.9 343.0,750.6 342.0,750.3 341.0,747.7 340.0,746.9 339.0,747.9 338.0,748.1 337.0,748.7 336.0,748.5 335.0,748.7 334.0,748.0 333.0,750.1 332.0,749.3 331.0,749.5 330.0,749.3 329.0,748.9 328.0,749.6 327.0,750.3 326.0,749.0 325.0,749.2 324.0,748.9 323.0,749.0 322.0,749.6 321.0,748.0 320.0,748.8 319.0,748.6 318.0,749.0 317.0,748.6 316.0,747.1 315.0,746.3 314.0,746.8 313.0,747.3 312.0,747.1 311.0,747.3 310.0,746.8 309.0,746.5 308.0,748.0 307.0,749.4 306.0,750.7 305.0,751.2 304.0,750.8 303.0,750.4 302.0,751.3 301.0,752.1 300.0,751.7 299.0,752.0 298.0,751.8 297.0,750.1 296.0,751.7 295.0,749.3 294.0,748.8 293.0,748.5 292.0,747.8 291.0,746.4 290.0,747.3 289.0,747.1 288.0,747.5 287.0,746.6 286.0,746.5 285.0,747.7 284.0,747.7 283.0,749.1 282.0,749.5 281.0,749.9 280.0,748.7 279.0,751.2 278.0,749.7 277.0,750.7 276.0,749.0 275.0,749.3 274.0,749.0 273.0,749.6 272.0,748.3 271.0,748.6 270.0,749.3 269.0,747.7 268.0,747.7 267.0,747.0 266.0,746.6 265.0,746.8 264.0,747.4 263.0,746.7 262.0,747.7 261.0,747.2 260.0,747.1 259.0,746.6" fill="#def2e5" stroke="#2f6e4c" stroke-width="0.6"/><polygon points="669.0,743.4 670.0,743.1 671.0,742.0 672.0,741.7 673.0,741.5 674.0,741.2 675.0,741.2 676.0,740.6 677.0,740.1 678.0,740.7 679.0,741.2 680.0,740.5 681.0,740.5 682.0,740.3 683.0,740.7 684.0,740.6 685.0,740.3 686.0,740.1 687.0,739.8 688.0,740.2 689.0,740.3 690.0,741.1 691.0,740.5 692.0,741.0 693.0,741.7 694.0,741.9 695.0,742.3 696.0,742.9 697.0,743.1 698.0,742.8 699.0,742.4 700.0,742.6 701.0,742.1 702.0,741.7 703.0,741.6 704.0,741.5 705.0,741.9 706.0,741.7 707.0,742.1 708.0,742.0 709.0,741.9 710.0,741.9 711.0,742.0 712.0,742.3 713.0,742.7 714.0,743.2 715.0,741.8 716.0,738.3 717.0,739.4 718.0,740.3 719.0,743.4 720.0,743.0 721.0,742.8 722.0,742.6 723.0,742.5 724.0,741.4 725.0,742.0 726.0,741.6 727.0,740.7 728.0,741.8 729.0,741.0 730.0,741.6 731.0,741.6 732.0,740.5 733.0,740.3 734.0,740.3 735.0,740.9 736.0,740.6 737.0,741.4 738.0,740.3 739.0,740.8 740.0,741.0 741.0,740.4 742.0,741.0 743.0,741.9 744.0,741.8 745.0,742.1 746.0,742.1 747.0,741.9 748.0,741.7 749.0,742.5 750.0,742.8 751.0,742.9 752.0,743.1 753.0,742.7 754.0,742.7 755.0,742.1 756.0,741.5 757.0,742.0 758.0,741.8 759.0,741.4 760.0,741.6 761.0,741.7 762.0,740.9 763.0,741.7 764.0,741.7 765.0,742.0 766.0,742.5 767.0,742.4 768.0,743.2 769.0,742.7 770.0,741.8 771.0,742.3 772.0,742.0 773.0,740.8 774.0,741.7 775.0,740.9 776.0,741.1 777.0,741.2 778.0,740.6 779.0,741.0 780.0,740.8 781.0,740.5 782.0,739.9 783.0,741.0 784.0,741.2 785.0,740.4 786.0,740.4 787.0,740.7 788.0,740.9 789.0,741.6 790.0,741.4 791.0,742.1 792.0,742.2 793.0,743.3 794.0,742.7 795.0,742.3 796.0,742.2 797.0,742.0 798.0,742.7 799.0,742.7 800.0,742.1 801.0,741.7 802.0,740.1 803.0,740.1 804.0,740.4 805.0,739.6 806.0,739.9 807.0,740.5 808.0,738.9 809.0,740.7 810.0,739.8 811.0,739.9 812.0,740.6 813.0,740.8 814.0,742.0 815.0,743.4 816.0,743.0 817.0,743.0 818.0,742.6 819.0,742.3 820.0,742.2 821.0,741.8 822.0,742.0 823.0,741.9 824.0,742.4 825.0,742.3 826.0,741.9 827.0,742.8 828.0,742.3 829.0,742.6 830.0,743.2 831.0,743.1 832.0,742.6 833.0,742.6 834.0,741.5 835.0,741.1 836.0,741.6 837.0,741.4 838.0,740.8 839.0,740.4 840.0,740.9 841.0,741.1 842.0,740.3 843.0,740.0 844.0,740.4 845.0,740.7 846.0,740.5 847.0,741.3 848.0,741.4 849.0,740.8 850.0,741.2 851.0,741.4 852.0,742.5 853.0,742.9 854.0,742.8 855.0,740.7 856.0,740.5 857.0,740.1 858.0,740.0 859.0,739.4 860.0,738.3 861.0,738.5 862.0,739.1 863.0,739.4 864.0,739.5 865.0,740.5 866.0,741.4 867.0,742.5 868.0,743.2 869.0,742.8 870.0,742.7 871.0,742.6 872.0,742.3 873.0,742.2 874.0,741.9 875.0,741.8 876.0,741.2 877.0,741.6 878.0,741.0 879.0,741.9 880.0,741.8 881.0,741.5 882.0,741.0 883.0,741.0 884.0,741.5 885.0,741.6 886.0,740.9 887.0,741.3 888.0,741.3 889.0,741.3 890.0,741.5 891.0,742.1 892.0,741.9 893.0,742.3 894.0,742.0 895.0,742.6 896.0,743.0 897.0,743.3 898.0,743.4 899.0,742.9 900.0,742.9 901.0,742.9 902.0,742.6 903.0,742.9 904.0,742.9 905.0,742.3 906.0,742.8 907.0,742.7 908.0,742.7 909.0,742.7 910.0,742.4 911.0,742.5 912.0,742.8 913.0,742.2 914.0,742.3 915.0,742.5 916.0,742.7 917.0,742.5 918.0,742.3 919.0,742.7 920.0,742.9 921.0,742.8 922.0,742.9 923.0,742.8 924.0,743.2 925.0,743.5 926.0,742.9 927.0,742.5 928.0,741.5 929.0,741.9 930.0,740.8 931.0,741.5 932.0,741.2 933.0,740.3 934.0,739.7 935.0,741.1 936.0,740.8 937.0,740.2 938.0,740.3 939.0,740.8 940.0,739.9 941.0,740.2 942.0,741.2 943.0,741.3 944.0,741.5 945.0,741.8 946.0,741.6 947.0,741.4 948.0,742.0 949.0,742.4 950.0,743.5 951.0,742.9 952.0,742.9 953.0,742.7 954.0,742.6 955.0,742.1 956.0,742.3 957.0,742.0 958.0,742.4 959.0,742.0 960.0,742.6 961.0,742.5 962.0,742.2 963.0,742.2 964.0,742.2 965.0,742.9 966.0,742.4 967.0,742.8 968.0,743.2 969.0,743.4 970.0,739.6 971.0,734.9 972.0,735.1 973.0,735.2 974.0,732.4 975.0,731.5 976.0,734.2 977.0,733.9 978.0,735.8 979.0,738.2 980.0,742.6 981.0,741.3 982.0,740.0 983.0,738.0 984.0,737.8 985.0,737.4 986.0,738.3 987.0,738.5 988.0,739.6 989.0,740.4 990.0,740.8 991.0,743.3 992.0,742.6 993.0,742.5 994.0,742.0 995.0,742.3 996.0,741.7 997.0,742.4 998.0,742.2 999.0,742.1 1000.0,741.8 1001.0,742.2 1002.0,742.1 1003.0,742.5 1004.0,743.1 1005.0,741.9 1006.0,738.4 1007.0,736.2 1008.0,734.2 1009.0,735.9 1010.0,732.1 1011.0,735.5 1012.0,733.3 1013.0,735.1 1014.0,738.2 1015.0,740.6 1016.0,743.4 1017.0,742.8 1018.0,742.0 1019.0,742.1 1020.0,742.2 1021.0,741.7 1022.0,742.0 1023.0,741.3 1024.0,741.1 1025.0,741.3 1026.0,741.4 1027.0,741.1 1028.0,741.2 1029.0,741.9 1030.0,741.8 1031.0,742.3 1032.0,742.1 1033.0,742.3 1034.0,743.0 1035.0,743.6 1036.0,739.9 1037.0,738.3 1038.0,736.5 1039.0,735.9 1040.0,732.9 1041.0,735.9 1042.0,734.7 1043.0,733.7 1044.0,733.1 1045.0,733.8 1046.0,737.1 1047.0,739.4 1048.0,739.3 1049.0,743.0 1050.0,742.6 1051.0,742.2 1052.0,741.6 1053.0,742.1 1054.0,740.8 1055.0,740.9 1056.0,740.4 1057.0,741.2 1058.0,740.0 1059.0,739.9 1060.0,740.3 1061.0,740.8 1062.0,741.2 1063.0,740.3 1064.0,740.0 1065.0,740.3 1066.0,740.5 1067.0,741.0 1068.0,740.5 1069.0,739.8 1070.0,740.7 1071.0,740.9 1072.0,740.6 1073.0,741.6 1074.0,741.8 1075.0,742.2 1076.0,741.4 1077.0,742.2 1078.0,742.7 1079.0,743.4 1080.0,742.9 1081.0,741.9 1082.0,741.8 1083.0,741.9 1084.0,740.9 1085.0,741.2 1086.0,741.4 1087.0,741.2 1088.0,740.9 1089.0,740.8 1090.0,740.9 1090.0,749.1 1089.0,748.8 1088.0,748.7 1087.0,748.7 1086.0,748.3 1085.0,748.5 1084.0,748.7 1083.0,747.9 1082.0,747.4 1081.0,747.9 1080.0,746.8 1079.0,746.1 1078.0,746.8 1077.0,747.2 1076.0,748.2 1075.0,747.5 1074.0,747.6 1073.0,748.0 1072.0,749.1 1071.0,749.0 1070.0,748.8 1069.0,749.8 1068.0,748.8 1067.0,748.4 1066.0,749.4 1065.0,749.2 1064.0,748.9 1063.0,748.9 1062.0,748.3 1061.0,748.4 1060.0,748.7 1059.0,749.1 1058.0,749.3 1057.0,748.6 1056.0,748.6 1055.0,748.4 1054.0,749.1 1053.0,747.5 1052.0,747.7 1051.0,747.2 1050.0,747.0 1049.0,746.3 1048.0,750.5 1047.0,750.3 1046.0,752.9 1045.0,754.3 1044.0,756.2 1043.0,756.5 1042.0,755.8 1041.0,754.1 1040.0,756.7 1039.0,753.1 1038.0,753.8 1037.0,751.4 1036.0,749.2 1035.0,746.1 1034.0,746.5 1033.0,747.5 1032.0,747.5 1031.0,747.1 1030.0,747.5 1029.0,747.3 1028.0,748.5 1027.0,748.5 1026.0,748.2 1025.0,747.8 1024.0,748.3 1023.0,747.9 1022.0,747.8 1021.0,748.1 1020.0,747.2 1019.0,747.3 1018.0,747.5 1017.0,746.7 1016.0,746.2 1015.0,749.1 1014.0,750.8 1013.0,754.3 1012.0,756.3 1011.0,754.4 1010.0,758.5 1009.0,753.0 1008.0,756.3 1007.0,753.2 1006.0,751.7 1005.0,747.3 1004.0,746.5 1003.0,746.8 1002.0,747.1 1001.0,747.3 1000.0,747.6 999.0,747.3 998.0,747.2 997.0,747.3 996.0,747.7 995.0,747.1 994.0,747.7 993.0,747.2 992.0,746.7 991.0,746.3 990.0,748.5 989.0,749.1 988.0,749.8 987.0,750.6 986.0,750.9 985.0,751.9 984.0,752.0 983.0,750.9 982.0,749.5 981.0,748.3 980.0,746.7 979.0,750.9 978.0,752.7 977.0,755.3 976.0,754.9 975.0,758.0 974.0,756.2 973.0,755.0 972.0,753.8 971.0,755.4 970.0,750.5 969.0,746.2 968.0,746.2 967.0,746.5 966.0,747.3 965.0,746.8 964.0,747.3 963.0,747.5 962.0,747.5 961.0,746.9 960.0,747.0 959.0,747.6 958.0,747.2 957.0,747.9 956.0,747.1 955.0,747.4 954.0,747.1 953.0,746.8 952.0,746.6 951.0,746.5 950.0,746.2 949.0,746.9 948.0,747.5 947.0,748.4 946.0,748.0 945.0,747.5 944.0,747.8 943.0,747.8 942.0,748.3 941.0,749.7 940.0,749.7 939.0,749.1 938.0,748.7 937.0,748.9 936.0,748.7 935.0,748.7 934.0,750.0 933.0,748.7 932.0,748.0 931.0,747.9 930.0,748.2 929.0,747.4 928.0,748.3 927.0,747.3 926.0,746.9 925.0,745.9 924.0,746.3 923.0,746.9 922.0,746.8 921.0,746.8 920.0,746.8 919.0,746.9 918.0,747.2 917.0,747.0 916.0,747.0 915.0,747.3 914.0,747.0 913.0,747.3 912.0,746.6 911.0,747.2 910.0,747.1 909.0,746.7 908.0,746.8 907.0,746.8 906.0,746.6 905.0,747.0 904.0,746.6 903.0,746.7 902.0,746.9 901.0,746.5 900.0,746.6 899.0,746.8 898.0,746.1 897.0,746.1 896.0,746.8 895.0,747.2 894.0,747.5 893.0,747.1 892.0,747.6 891.0,747.5 890.0,748.4 889.0,748.6 888.0,748.4 887.0,748.6 886.0,748.6 885.0,748.2 884.0,748.3 883.0,748.7 882.0,748.3 881.0,747.9 880.0,747.9 879.0,747.4 878.0,748.4 877.0,748.0 876.0,748.7 875.0,747.6 874.0,747.4 873.0,747.1 872.0,747.2 871.0,747.1 870.0,747.1 869.0,746.6 868.0,746.3 867.0,747.1 866.0,748.4 865.0,748.9 864.0,749.4 863.0,750.0 862.0,750.8 861.0,750.6 860.0,750.4 859.0,750.1 858.0,749.7 857.0,749.8 856.0,748.9 855.0,748.7 854.0,746.8 853.0,746.6 852.0,746.9 851.0,747.8 850.0,748.6 849.0,748.7 848.0,748.4 847.0,748.4 846.0,748.5 845.0,748.6 844.0,749.3 843.0,749.8 842.0,749.5 841.0,748.0 840.0,749.1 839.0,749.0 838.0,748.5 837.0,748.2 836.0,748.2 835.0,748.4 834.0,747.8 833.0,747.1 832.0,747.1 831.0,746.5 830.0,746.6 829.0,747.2 828.0,747.4 827.0,746.8 826.0,747.8 825.0,747.3 824.0,747.2 823.0,747.8 822.0,747.7 821.0,747.6 820.0,747.4 819.0,747.5 818.0,746.9 817.0,746.6 816.0,746.8 815.0,746.0 814.0,747.2 813.0,749.0 812.0,748.8 811.0,749.6 810.0,749.4 809.0,748.8 808.0,750.9 807.0,749.0 806.0,749.6 805.0,750.2 804.0,748.8 803.0,749.0 802.0,750.0 801.0,747.5 800.0,747.3 799.0,747.1 798.0,746.7 797.0,747.6 796.0,747.4 795.0,747.1 794.0,746.7 793.0,746.4 792.0,747.5 791.0,747.4 790.0,747.9 789.0,747.9 788.0,748.6 787.0,749.1 786.0,748.5 785.0,749.6 784.0,748.7 783.0,748.1 782.0,749.5 781.0,749.0 780.0,748.8 779.0,748.7 778.0,749.3 777.0,748.1 776.0,748.5 775.0,748.6 774.0,747.8 773.0,748.9 772.0,747.4 771.0,747.3 770.0,747.6 769.0,746.8 768.0,746.6 767.0,747.1 766.0,746.8 765.0,747.5 764.0,747.5 763.0,747.9 762.0,748.8 761.0,748.1 760.0,748.0 759.0,748.1 758.0,747.5 757.0,747.3 756.0,747.8 755.0,747.2 754.0,746.6 753.0,746.9 752.0,746.4 751.0,746.8 750.0,746.8 749.0,747.0 748.0,748.2 747.0,748.0 746.0,747.5 745.0,747.2 744.0,747.4 743.0,747.7 742.0,748.4 741.0,748.8 740.0,748.2 739.0,748.6 738.0,748.7 737.0,748.0 736.0,748.7 735.0,748.4 734.0,749.4 733.0,749.5 732.0,749.2 731.0,747.9 730.0,747.8 729.0,748.8 728.0,747.6 727.0,748.4 726.0,747.6 725.0,747.7 724.0,747.8 723.0,746.9 722.0,747.0 721.0,747.0 720.0,746.6 719.0,746.1 718.0,749.4 717.0,750.5 716.0,750.7 715.0,747.8 714.0,746.5 713.0,746.8 712.0,746.9 711.0,747.3 710.0,747.8 709.0,747.3 708.0,747.9 707.0,747.2 706.0,747.8 705.0,747.6 704.0,748.2 703.0,747.8 702.0,747.6 701.0,747.2 700.0,746.8 699.0,747.1 698.0,746.9 697.0,746.4 696.0,746.9 695.0,747.5 694.0,747.9 693.0,747.9 692.0,748.7 691.0,748.6 690.0,748.8 689.0,749.5 688.0,749.7 687.0,750.0 686.0,749.0 685.0,749.7 684.0,748.5 683.0,748.3 682.0,749.3 681.0,749.4 680.0,748.8 679.0,747.8 678.0,748.6 677.0,749.5 676.0,749.4 675.0,748.2 674.0,748.0 673.0,748.1 672.0,747.6 671.0,747.7 670.0,746.3 669.0,746.4" fill="#fde2cf" stroke="#9a4a06" stroke-width="0.6"/><polygon points="1090.0,740.2 1091.0,740.1 1092.0,739.8 1093.0,741.1 1094.0,740.8 1095.0,739.9 1096.0,740.5 1097.0,741.1 1098.0,741.4 1099.0,742.0 1100.0,742.8 1101.0,742.0 1102.0,742.1 1103.0,741.2 1104.0,741.2 1105.0,741.0 1106.0,741.3 1107.0,741.1 1108.0,740.4 1109.0,741.5 1110.0,740.2 1111.0,740.8 1112.0,741.0 1113.0,741.3 1114.0,741.0 1115.0,741.1 1116.0,741.0 1117.0,741.5 1118.0,741.5 1119.0,741.9 1120.0,742.7 1121.0,741.7 1122.0,741.8 1123.0,740.8 1124.0,741.5 1125.0,740.8 1126.0,740.8 1127.0,739.6 1128.0,739.8 1129.0,739.4 1130.0,738.9 1131.0,739.5 1132.0,739.8 1133.0,739.1 1134.0,739.9 1135.0,738.9 1136.0,740.1 1137.0,739.4 1138.0,738.1 1139.0,739.1 1140.0,738.6 1141.0,738.8 1142.0,738.0 1143.0,739.2 1144.0,739.7 1145.0,738.1 1146.0,739.1 1147.0,739.5 1148.0,740.4 1149.0,739.3 1150.0,739.4 1151.0,739.5 1152.0,739.7 1153.0,741.1 1154.0,740.1 1155.0,741.1 1156.0,740.8 1157.0,741.4 1158.0,741.7 1159.0,742.2 1160.0,742.7 1161.0,742.0 1162.0,741.9 1163.0,741.1 1164.0,741.6 1165.0,740.8 1166.0,741.2 1167.0,740.4 1168.0,740.4 1169.0,741.2 1170.0,740.6 1171.0,741.6 1172.0,741.4 1173.0,741.4 1174.0,742.4 1175.0,742.7 1176.0,738.3 1177.0,738.2 1178.0,734.5 1179.0,735.0 1180.0,733.7 1181.0,730.4 1182.0,734.5 1183.0,729.4 1184.0,731.6 1185.0,728.7 1186.0,729.8 1187.0,730.6 1188.0,733.0 1189.0,733.9 1190.0,732.9 1191.0,733.0 1192.0,734.1 1193.0,735.8 1194.0,738.1 1195.0,743.2 1196.0,741.4 1197.0,739.7 1198.0,739.6 1199.0,738.8 1200.0,739.5 1201.0,739.1 1202.0,739.7 1203.0,740.0 1204.0,741.4 1205.0,742.6 1206.0,735.4 1207.0,732.8 1208.0,733.7 1209.0,731.1 1210.0,729.1 1211.0,726.3 1212.0,731.4 1213.0,731.5 1214.0,727.5 1215.0,734.3 1216.0,735.6 1217.0,739.0 1218.0,741.4 1219.0,740.8 1220.0,740.1 1221.0,738.1 1222.0,739.2 1223.0,738.0 1224.0,736.4 1225.0,736.2 1226.0,737.2 1227.0,737.0 1228.0,737.4 1229.0,737.5 1230.0,737.7 1231.0,739.4 1232.0,739.1 1233.0,738.9 1234.0,740.2 1235.0,743.0 1236.0,741.9 1237.0,740.5 1238.0,739.7 1239.0,739.3 1240.0,740.2 1241.0,740.1 1242.0,738.0 1243.0,739.5 1244.0,737.3 1245.0,739.4 1246.0,739.0 1247.0,737.5 1248.0,736.8 1249.0,737.2 1250.0,737.4 1251.0,737.7 1252.0,737.8 1253.0,739.7 1254.0,738.8 1255.0,739.9 1256.0,740.2 1257.0,739.7 1258.0,741.0 1259.0,741.6 1259.0,747.8 1258.0,748.5 1257.0,749.6 1256.0,749.4 1255.0,749.2 1254.0,751.1 1253.0,749.5 1252.0,752.4 1251.0,751.0 1250.0,752.0 1249.0,751.3 1248.0,752.8 1247.0,752.5 1246.0,750.9 1245.0,750.5 1244.0,751.5 1243.0,749.5 1242.0,750.6 1241.0,749.0 1240.0,749.4 1239.0,750.3 1238.0,750.0 1237.0,749.4 1236.0,747.8 1235.0,746.5 1234.0,749.6 1233.0,750.4 1232.0,750.9 1231.0,750.0 1230.0,752.1 1229.0,751.4 1228.0,752.4 1227.0,752.8 1226.0,752.0 1225.0,753.5 1224.0,752.7 1223.0,751.6 1222.0,749.8 1221.0,751.2 1220.0,749.4 1219.0,748.6 1218.0,748.0 1217.0,750.7 1216.0,753.4 1215.0,755.0 1214.0,763.2 1213.0,756.3 1212.0,756.6 1211.0,760.5 1210.0,760.0 1209.0,758.3 1208.0,755.0 1207.0,757.6 1206.0,752.8 1205.0,747.1 1204.0,748.4 1203.0,749.9 1202.0,749.4 1201.0,750.7 1200.0,750.4 1199.0,750.4 1198.0,750.4 1197.0,749.8 1196.0,747.9 1195.0,746.5 1194.0,751.4 1193.0,754.5 1192.0,755.8 1191.0,754.9 1190.0,755.8 1189.0,754.3 1188.0,755.8 1187.0,758.7 1186.0,760.6 1185.0,759.4 1184.0,759.2 1183.0,761.7 1182.0,755.9 1181.0,757.6 1180.0,755.4 1179.0,754.2 1178.0,754.3 1177.0,750.9 1176.0,750.9 1175.0,746.9 1174.0,747.0 1173.0,748.4 1172.0,747.8 1171.0,747.6 1170.0,748.9 1169.0,748.4 1168.0,748.7 1167.0,749.0 1166.0,748.1 1165.0,748.3 1164.0,747.8 1163.0,748.2 1162.0,747.4 1161.0,747.6 1160.0,746.6 1159.0,747.2 1158.0,747.9 1157.0,747.9 1156.0,748.5 1155.0,748.4 1154.0,749.9 1153.0,748.0 1152.0,750.1 1151.0,749.8 1150.0,750.0 1149.0,749.6 1148.0,749.2 1147.0,750.1 1146.0,749.6 1145.0,751.4 1144.0,749.6 1143.0,750.6 1142.0,751.5 1141.0,750.8 1140.0,751.0 1139.0,750.4 1138.0,751.1 1137.0,750.6 1136.0,749.8 1135.0,750.0 1134.0,749.5 1133.0,749.7 1132.0,749.1 1131.0,750.6 1130.0,751.2 1129.0,749.8 1128.0,749.1 1127.0,749.3 1126.0,749.0 1125.0,748.3 1124.0,748.2 1123.0,749.2 1122.0,747.4 1121.0,747.9 1120.0,746.7 1119.0,747.7 1118.0,748.4 1117.0,747.8 1116.0,749.0 1115.0,748.9 1114.0,748.8 1113.0,748.3 1112.0,748.4 1111.0,748.5 1110.0,749.2 1109.0,747.8 1108.0,748.6 1107.0,748.8 1106.0,748.5 1105.0,748.9 1104.0,748.7 1103.0,748.2 1102.0,747.1 1101.0,747.6 1100.0,746.6 1099.0,747.7 1098.0,748.4 1097.0,748.1 1096.0,749.0 1095.0,749.5 1094.0,748.4 1093.0,748.8 1092.0,749.1 1091.0,749.5 1090.0,749.3" fill="#fde2cf" stroke="#9a4a06" stroke-width="0.6"/><polygon points="1262.0,742.5 1263.0,741.7 1264.0,741.6 1265.0,739.8 1266.0,739.6 1267.0,739.7 1268.0,740.1 1269.0,739.8 1270.0,738.3 1271.0,738.2 1272.0,739.2 1273.0,738.1 1274.0,737.8 1275.0,738.4 1276.0,738.8 1277.0,739.0 1278.0,738.1 1279.0,739.2 1280.0,738.7 1281.0,739.1 1282.0,740.2 1283.0,740.5 1284.0,741.6 1285.0,741.4 1286.0,742.9 1287.0,743.2 1288.0,742.7 1289.0,742.1 1290.0,742.4 1291.0,742.1 1292.0,742.3 1293.0,742.4 1294.0,742.0 1295.0,742.8 1296.0,742.5 1297.0,743.2 1298.0,742.2 1299.0,741.1 1300.0,738.5 1301.0,738.1 1302.0,739.5 1303.0,736.9 1304.0,738.5 1305.0,738.4 1306.0,739.8 1307.0,740.4 1308.0,741.9 1309.0,743.4 1310.0,743.4 1311.0,742.9 1312.0,743.1 1313.0,742.6 1314.0,743.0 1315.0,743.0 1316.0,742.5 1317.0,742.9 1318.0,742.7 1319.0,742.8 1320.0,742.3 1321.0,742.1 1322.0,742.7 1323.0,742.8 1324.0,742.6 1325.0,742.2 1326.0,742.8 1327.0,742.7 1328.0,742.7 1329.0,742.8 1330.0,742.3 1331.0,742.3 1332.0,742.4 1333.0,742.6 1334.0,742.8 1335.0,743.1 1336.0,742.8 1337.0,743.2 1338.0,743.2 1339.0,742.6 1340.0,741.3 1341.0,741.1 1342.0,739.6 1343.0,739.5 1344.0,740.2 1345.0,740.3 1346.0,741.2 1347.0,743.5 1348.0,738.5 1349.0,735.7 1350.0,736.0 1351.0,732.0 1352.0,731.6 1353.0,731.9 1354.0,732.1 1355.0,733.3 1356.0,735.8 1357.0,737.7 1358.0,743.1 1359.0,742.9 1360.0,741.9 1361.0,741.3 1362.0,741.9 1363.0,741.0 1364.0,742.0 1365.0,741.1 1366.0,741.6 1367.0,741.7 1368.0,742.7 1369.0,743.2 1370.0,740.7 1371.0,737.4 1372.0,737.4 1373.0,735.5 1374.0,734.7 1375.0,736.7 1376.0,736.6 1377.0,738.1 1378.0,739.1 1379.0,740.0 1380.0,743.1 1381.0,741.8 1382.0,741.6 1383.0,741.0 1384.0,740.9 1385.0,741.3 1386.0,741.4 1387.0,741.3 1388.0,742.7 1389.0,742.2 1390.0,741.1 1391.0,740.7 1392.0,739.3 1393.0,739.6 1394.0,738.7 1395.0,738.9 1396.0,740.2 1397.0,738.8 1398.0,739.0 1399.0,740.1 1400.0,740.7 1401.0,741.8 1402.0,743.5 1403.0,742.8 1404.0,742.7 1405.0,741.5 1406.0,741.3 1407.0,740.9 1408.0,741.1 1409.0,741.0 1410.0,740.6 1411.0,741.4 1412.0,740.6 1413.0,740.6 1414.0,741.1 1415.0,741.0 1416.0,740.4 1417.0,741.3 1418.0,741.5 1419.0,740.8 1420.0,741.8 1421.0,741.6 1422.0,742.3 1423.0,742.9 1424.0,743.3 1425.0,740.0 1426.0,737.4 1427.0,737.8 1428.0,733.5 1429.0,734.2 1430.0,736.0 1431.0,735.3 1432.0,732.6 1433.0,736.2 1434.0,736.3 1435.0,737.7 1436.0,737.6 1437.0,739.4 1438.0,743.2 1439.0,743.0 1440.0,742.5 1441.0,742.5 1442.0,742.1 1443.0,741.5 1444.0,741.4 1445.0,741.0 1446.0,741.3 1447.0,741.1 1448.0,741.4 1449.0,741.0 1450.0,742.0 1451.0,741.2 1452.0,741.9 1453.0,741.5 1454.0,742.2 1455.0,742.8 1456.0,743.1 1457.0,743.6 1458.0,742.7 1459.0,742.8 1460.0,742.4 1461.0,742.5 1462.0,741.7 1463.0,741.8 1464.0,742.3 1465.0,742.1 1466.0,742.9 1467.0,742.6 1468.0,743.4 1469.0,741.6 1470.0,740.6 1471.0,739.4 1472.0,739.8 1473.0,738.6 1474.0,737.7 1475.0,737.2 1476.0,737.5 1477.0,737.4 1478.0,736.2 1479.0,738.8 1480.0,737.6 1481.0,737.5 1482.0,738.7 1483.0,737.4 1484.0,738.0 1485.0,737.8 1486.0,739.4 1487.0,739.4 1488.0,740.5 1489.0,741.4 1490.0,743.3 1491.0,743.1 1492.0,742.6 1493.0,742.7 1494.0,742.3 1495.0,742.3 1496.0,741.9 1497.0,742.3 1498.0,741.7 1499.0,742.0 1500.0,742.4 1501.0,741.5 1502.0,741.6 1503.0,741.8 1504.0,742.2 1505.0,742.3 1506.0,742.6 1507.0,742.4 1508.0,742.7 1509.0,742.9 1510.0,743.0 1511.0,743.2 1512.0,743.4 1513.0,741.1 1514.0,740.2 1515.0,737.9 1516.0,739.0 1517.0,739.0 1518.0,738.2 1519.0,737.1 1520.0,738.9 1521.0,738.9 1522.0,739.7 1523.0,739.9 1524.0,740.9 1525.0,741.6 1526.0,743.2 1527.0,742.4 1528.0,742.6 1529.0,741.7 1530.0,741.4 1531.0,741.3 1532.0,741.4 1533.0,741.9 1534.0,741.8 1535.0,741.3 1536.0,741.5 1537.0,741.0 1538.0,742.0 1539.0,741.9 1540.0,741.6 1541.0,741.8 1542.0,742.3 1543.0,742.1 1544.0,742.9 1545.0,743.5 1546.0,742.1 1547.0,740.6 1548.0,740.4 1549.0,740.3 1550.0,740.0 1551.0,740.0 1552.0,740.2 1553.0,740.9 1554.0,740.5 1555.0,741.8 1556.0,743.4 1557.0,742.9 1558.0,742.7 1559.0,743.0 1560.0,742.6 1561.0,742.3 1562.0,742.5 1563.0,742.6 1564.0,742.5 1565.0,742.2 1566.0,742.0 1567.0,742.2 1568.0,741.9 1569.0,741.5 1570.0,742.1 1571.0,741.9 1572.0,741.5 1573.0,741.9 1574.0,741.5 1575.0,741.4 1576.0,741.7 1577.0,742.4 1578.0,741.7 1579.0,741.7 1580.0,742.1 1581.0,742.4 1582.0,742.3 1583.0,742.6 1584.0,742.7 1585.0,742.3 1586.0,742.9 1587.0,743.2 1588.0,742.9 1588.0,746.8 1587.0,746.4 1586.0,746.6 1585.0,747.5 1584.0,747.0 1583.0,746.9 1582.0,747.4 1581.0,746.8 1580.0,747.5 1579.0,748.1 1578.0,747.5 1577.0,747.3 1576.0,747.9 1575.0,747.8 1574.0,748.1 1573.0,747.3 1572.0,747.7 1571.0,747.6 1570.0,747.5 1569.0,747.8 1568.0,747.9 1567.0,747.5 1566.0,747.3 1565.0,747.2 1564.0,746.9 1563.0,746.7 1562.0,747.3 1561.0,746.9 1560.0,747.0 1559.0,746.6 1558.0,746.9 1557.0,746.6 1556.0,746.2 1555.0,747.4 1554.0,749.3 1553.0,748.1 1552.0,749.2 1551.0,749.4 1550.0,749.1 1549.0,749.4 1548.0,748.6 1547.0,749.3 1546.0,747.6 1545.0,745.9 1544.0,746.9 1543.0,747.3 1542.0,747.4 1541.0,747.6 1540.0,747.6 1539.0,747.4 1538.0,747.3 1537.0,748.8 1536.0,748.2 1535.0,748.2 1534.0,747.7 1533.0,747.4 1532.0,748.4 1531.0,748.4 1530.0,747.8 1529.0,748.0 1528.0,747.2 1527.0,747.0 1526.0,746.3 1525.0,748.3 1524.0,748.4 1523.0,749.2 1522.0,750.2 1521.0,750.9 1520.0,751.1 1519.0,753.1 1518.0,751.3 1517.0,751.2 1516.0,750.9 1515.0,750.9 1514.0,749.2 1513.0,748.0 1512.0,746.3 1511.0,746.6 1510.0,746.4 1509.0,746.9 1508.0,747.0 1507.0,747.3 1506.0,746.8 1505.0,747.3 1504.0,747.4 1503.0,748.0 1502.0,747.8 1501.0,747.9 1500.0,747.4 1499.0,747.3 1498.0,748.0 1497.0,747.4 1496.0,747.9 1495.0,747.5 1494.0,746.9 1493.0,746.8 1492.0,747.1 1491.0,746.6 1490.0,746.1 1489.0,747.7 1488.0,748.4 1487.0,750.3 1486.0,749.4 1485.0,752.2 1484.0,750.8 1483.0,752.7 1482.0,750.1 1481.0,751.5 1480.0,751.9 1479.0,751.0 1478.0,752.8 1477.0,752.0 1476.0,752.3 1475.0,753.0 1474.0,752.4 1473.0,750.5 1472.0,750.1 1471.0,750.3 1470.0,748.7 1469.0,747.5 1468.0,746.3 1467.0,746.8 1466.0,746.7 1465.0,747.5 1464.0,747.4 1463.0,748.1 1462.0,748.0 1461.0,747.2 1460.0,747.3 1459.0,746.8 1458.0,747.0 1457.0,745.9 1456.0,746.7 1455.0,746.9 1454.0,747.2 1453.0,747.8 1452.0,747.8 1451.0,748.1 1450.0,747.3 1449.0,748.5 1448.0,747.9 1447.0,748.5 1446.0,748.4 1445.0,748.7 1444.0,748.5 1443.0,748.2 1442.0,747.7 1441.0,747.3 1440.0,746.8 1439.0,746.4 1438.0,746.2 1437.0,749.8 1436.0,751.9 1435.0,752.2 1434.0,754.1 1433.0,752.6 1432.0,757.6 1431.0,755.1 1430.0,752.9 1429.0,754.6 1428.0,757.0 1427.0,752.4 1426.0,751.3 1425.0,750.0 1424.0,746.3 1423.0,746.7 1422.0,746.9 1421.0,747.7 1420.0,747.7 1419.0,749.1 1418.0,748.2 1417.0,747.9 1416.0,749.3 1415.0,748.6 1414.0,748.8 1413.0,749.2 1412.0,749.2 1411.0,748.2 1410.0,749.4 1409.0,748.9 1408.0,748.4 1407.0,748.3 1406.0,748.5 1405.0,748.3 1404.0,746.6 1403.0,746.6 1402.0,746.2 1401.0,748.0 1400.0,748.4 1399.0,749.2 1398.0,750.3 1397.0,750.2 1396.0,748.9 1395.0,750.0 1394.0,750.5 1393.0,749.4 1392.0,750.3 1391.0,749.2 1390.0,748.8 1389.0,747.6 1388.0,746.9 1387.0,748.3 1386.0,748.3 1385.0,748.5 1384.0,748.2 1383.0,748.7 1382.0,747.9 1381.0,747.3 1380.0,746.6 1379.0,749.3 1378.0,749.9 1377.0,751.9 1376.0,753.4 1375.0,753.4 1374.0,753.9 1373.0,752.9 1372.0,752.7 1371.0,752.1 1370.0,748.9 1369.0,746.2 1368.0,746.8 1367.0,747.6 1366.0,747.8 1365.0,748.0 1364.0,747.8 1363.0,748.5 1362.0,747.5 1361.0,748.3 1360.0,747.6 1359.0,746.4 1358.0,746.5 1357.0,752.2 1356.0,753.2 1355.0,755.1 1354.0,757.3 1353.0,758.3 1352.0,756.4 1351.0,755.7 1350.0,752.3 1349.0,754.7 1348.0,751.1 1347.0,745.9 1346.0,748.5 1345.0,748.7 1344.0,748.8 1343.0,750.6 1342.0,749.3 1341.0,748.8 1340.0,748.3 1339.0,747.0 1338.0,746.5 1337.0,746.4 1336.0,747.0 1335.0,746.6 1334.0,746.5 1333.0,747.1 1332.0,747.2 1331.0,747.2 1330.0,747.3 1329.0,746.5 1328.0,747.0 1327.0,746.7 1326.0,746.6 1325.0,747.3 1324.0,747.1 1323.0,746.7 1322.0,746.8 1321.0,747.4 1320.0,747.2 1319.0,746.8 1318.0,747.1 1317.0,746.6 1316.0,746.8 1315.0,746.4 1314.0,746.4 1313.0,746.9 1312.0,746.3 1311.0,746.6 1310.0,746.1 1309.0,746.0 1308.0,747.9 1307.0,748.7 1306.0,749.3 1305.0,751.6 1304.0,751.7 1303.0,753.0 1302.0,749.7 1301.0,752.1 1300.0,751.6 1299.0,748.6 1298.0,747.3 1297.0,746.3 1296.0,747.1 1295.0,746.6 1294.0,747.3 1293.0,747.2 1292.0,747.4 1291.0,747.3 1290.0,747.0 1289.0,747.2 1288.0,746.7 1287.0,746.4 1286.0,746.7 1285.0,747.7 1284.0,747.8 1283.0,748.9 1282.0,749.2 1281.0,750.8 1280.0,750.9 1279.0,750.0 1278.0,752.0 1277.0,749.9 1276.0,750.2 1275.0,751.3 1274.0,750.9 1273.0,751.9 1272.0,750.4 1271.0,750.8 1270.0,751.7 1269.0,750.2 1268.0,748.9 1267.0,749.5 1266.0,749.5 1265.0,750.0 1264.0,747.8 1263.0,747.6 1262.0,746.8" fill="#def2e5" stroke="#2f6e4c" stroke-width="0.6"/></svg>
<div class="a" style="left:259px;top:744.4px;width:1329px;height:0.9px;background:rgba(120,120,120,0.8);"></div>
<svg style="left:649.6px;top:680.3px" width="12.5" height="15" viewBox="0 0 12.5 15"><path d="M0.5 0.5 H12 V14.4 L6.25 9.6 L0.5 14.4Z" fill="#0a84e8" stroke="#0e3a2a" stroke-width="0.8"/></svg>
<svg style="left:649.6px;top:748.2px" width="12.5" height="15" viewBox="0 0 12.5 15"><path d="M0.5 0.5 H12 V14.4 L6.25 9.6 L0.5 14.4Z" fill="#0a84e8" stroke="#0e3a2a" stroke-width="0.8"/></svg>
<svg style="left:1242.6px;top:680.3px" width="12.5" height="15" viewBox="0 0 12.5 15"><path d="M0.5 0.5 H12 V14.4 L6.25 9.6 L0.5 14.4Z" fill="#0a84e8" stroke="#0e3a2a" stroke-width="0.8"/></svg>
<svg style="left:1242.6px;top:748.2px" width="12.5" height="15" viewBox="0 0 12.5 15"><path d="M0.5 0.5 H12 V14.4 L6.25 9.6 L0.5 14.4Z" fill="#0a84e8" stroke="#0e3a2a" stroke-width="0.8"/></svg>
<svg style="left:1568.6px;top:680.3px" width="12.5" height="15" viewBox="0 0 12.5 15"><path d="M0.5 0.5 H12 V14.4 L6.25 9.6 L0.5 14.4Z" fill="#0a84e8" stroke="#0e3a2a" stroke-width="0.8"/></svg>
<svg style="left:1568.6px;top:748.2px" width="12.5" height="15" viewBox="0 0 12.5 15"><path d="M0.5 0.5 H12 V14.4 L6.25 9.6 L0.5 14.4Z" fill="#0a84e8" stroke="#0e3a2a" stroke-width="0.8"/></svg>
<svg style="left:357.5px;top:666.3px" width="13" height="15" viewBox="0 0 13 15"><path d="M0.6 3 a2.4 2.4 0 0 1 2.4 -2.4 h7 a2.4 2.4 0 0 1 2.4 2.4 v6.6 l-5.9 4.8 l-5.9 -4.8z" fill="#ff4fcf" stroke="#14301a" stroke-width="0.8"/></svg>
<svg style="left:753.5px;top:666.3px" width="13" height="15" viewBox="0 0 13 15"><path d="M0.6 3 a2.4 2.4 0 0 1 2.4 -2.4 h7 a2.4 2.4 0 0 1 2.4 2.4 v6.6 l-5.9 4.8 l-5.9 -4.8z" fill="#0a84e8" stroke="#0b2f56" stroke-width="0.8"/></svg>
<svg style="left:357.5px;top:735.5px" width="13" height="15" viewBox="0 0 13 15"><path d="M0.6 3 a2.4 2.4 0 0 1 2.4 -2.4 h7 a2.4 2.4 0 0 1 2.4 2.4 v6.6 l-5.9 4.8 l-5.9 -4.8z" fill="#0a84e8" stroke="#0b2f56" stroke-width="0.8"/></svg>
<svg style="left:753.5px;top:735.5px" width="13" height="15" viewBox="0 0 13 15"><path d="M0.6 3 a2.4 2.4 0 0 1 2.4 -2.4 h7 a2.4 2.4 0 0 1 2.4 2.4 v6.6 l-5.9 4.8 l-5.9 -4.8z" fill="#0a84e8" stroke="#0b2f56" stroke-width="0.8"/></svg>
<div class="a" style="left:1572px;top:519px;width:16px;height:327px;background:linear-gradient(90deg,rgba(24,24,28,0),rgba(24,24,28,0.35) 50%,rgba(24,24,28,0.8));"></div>
<div class="a" style="left:1588px;top:565px;width:11px;height:281px;background:#313137;"></div>
<div class="a" style="left:1588px;top:519px;width:11px;height:46px;background:#2b2b30;"></div>
<div class="a" style="left:718px;top:530px;width:1.6px;height:316px;background:#bf3e33;box-shadow:0 0 0 0.6px rgba(30,8,5,0.75)"></div>
<svg style="left:709.6px;top:519.8px" width="18" height="15" viewBox="0 0 18 15"><defs><linearGradient id="phg" x1="0" y1="0" x2="0" y2="1"><stop offset="0" stop-color="#8e3229"/><stop offset="0.6" stop-color="#cf4539"/><stop offset="1" stop-color="#e24c3e"/></linearGradient></defs><path d="M0.3 0 H17.6 V7.2 L9.2 14.8 L0.3 7.2Z" fill="url(#phg)" stroke="#1a0c0a" stroke-width="0.6"/></svg>
<svg style="left:662px;top:548.3px" width="13" height="15" viewBox="0 0 13 15"><path d="M0.6 2 l1.4 -1.4 h9 l1.4 1.4 v7.6 l-5.9 5 l-5.9 -5z" fill="#0a84e8" stroke="#1a0e08" stroke-width="0.9"/><circle cx="6.5" cy="7.4" r="2.5" fill="#0c0c0c" stroke="#fff" stroke-width="1.7"/></svg>
<div class="a" style="left:439px;top:208px;width:456.4px;height:311.5px;background:#28282e;border:1px solid #121215;box-shadow:0 2px 10px rgba(0,0,0,0.5)"></div>
<div class="a" style="left:440px;top:209px;width:454.4px;height:31px;background:#212126;"></div>
<div class="a" style="left:440px;top:240px;width:454.4px;height:1px;background:#0c0c0e;"></div>
<svg style="left:656px;top:518.5px" width="24" height="12" viewBox="0 0 24 12"><path d="M0 0 H24 L12 11.5Z" fill="#28282e"/><path d="M0 0.5 L12 11.5 L24 0.5" fill="none" stroke="#0c0c0e" stroke-width="1"/></svg>
<div class="a" style="left:657px;top:517.5px;width:22px;height:2px;background:#28282e;"></div>
<div class="t" style="left:451px;top:217px;font-size:15px;color:#fff;font-weight:bold;">Markers</div>
<div class="t" style="left:116px;width:400px;text-align:right;top:256.5px;font-size:14px;color:#a6a6aa;font-weight:normal;">Time</div>
<div class="a" style="left:528px;top:253px;width:120px;height:22px;background:#1e1e21;border:1px solid #0d0d0f;border-radius:2px"></div>
<div class="t" style="left:531px;top:257.6px;font-size:13.6px;color:#b6b6ba;font-weight:normal;">01:00:05:20</div>
<div class="t" style="left:324px;width:400px;text-align:right;top:256.5px;font-size:14.5px;color:#a6a6aa;font-weight:normal;">Duration</div>
<div class="a" style="left:736.5px;top:253px;width:134.5px;height:22px;background:#1e1e21;border:1px solid #0d0d0f;border-radius:2px"></div>
<div class="t" style="left:740px;top:257.6px;font-size:13.6px;color:#b6b6ba;font-weight:normal;">00:00:00:01</div>
<div class="t" style="left:116px;width:400px;text-align:right;top:289.5px;font-size:14px;color:#a6a6aa;font-weight:normal;">Name</div>
<div class="a" style="left:528px;top:286px;width:343px;height:22px;background:#1e1e21;border:1px solid #0d0d0f;border-radius:2px"></div>
<div class="t" style="left:531px;top:290px;font-size:14px;color:#b6b6ba;font-weight:normal;">Amanda</div>
<div class="t" style="left:116px;width:400px;text-align:right;top:321.5px;font-size:14px;color:#a6a6aa;font-weight:normal;">Notes</div>
<div class="a" style="left:528px;top:319px;width:343px;height:64.5px;background:#1e1e21;border:1.5px solid #cf4438;border-radius:2px"></div>
<div class="t" style="left:533px;top:327px;font-size:14px;color:#b6b6ba;font-weight:normal;">To-do:</div>
<div class="a" style="left:576.5px;top:326px;width:1px;height:16px;background:#d0d0d4;"></div>
<div class="t" style="left:116px;width:400px;text-align:right;top:396.5px;font-size:14px;color:#a6a6aa;font-weight:normal;">Keyword</div>
<div class="a" style="left:528px;top:395px;width:343px;height:30.5px;background:#1d1d1f;border:1px solid #0d0d0f;border-radius:2px"></div>
<div class="a" style="left:534px;top:402.2px;width:78px;height:21.2px;background:#3c4046;border-radius:10.6px"></div>
<div class="t" style="left:373px;width:400px;text-align:center;top:405.5px;font-size:14px;color:#b0b4ba;font-weight:normal;">Interview</div>
<div class="a" style="left:860px;top:397px;width:8px;height:22px;background:#6a6e78;border-radius:3px"></div>
<div class="t" style="left:116px;width:400px;text-align:right;top:439.5px;font-size:14px;color:#a6a6aa;font-weight:normal;">Color</div>
<svg style="left:530.0px;top:440px" width="12" height="14" viewBox="0 0 12 14"><path d="M1 2.8 a2 2 0 0 1 2 -2 h6 a2 2 0 0 1 2 2 v5.6 l-5 4.6 l-5 -4.6z" fill="#0a7be6" stroke="#fff" stroke-width="1.4"/></svg>
<svg style="left:550.6px;top:441px" width="10.8" height="12" viewBox="0 0 10.8 12"><path d="M0.600 2.600 a2 2 0 0 1 2 -2 h5.800 a2 2 0 0 1 2 2 v5 l-4.900 4.200 l-4.900 -4.200z" fill="#00d0d4" stroke="#0e0e12" stroke-width="1"/></svg>
<svg style="left:570.6px;top:441px" width="10.8" height="12" viewBox="0 0 10.8 12"><path d="M0.600 2.600 a2 2 0 0 1 2 -2 h5.800 a2 2 0 0 1 2 2 v5 l-4.900 4.200 l-4.900 -4.200z" fill="#00a800" stroke="#0e0e12" stroke-width="1"/></svg>
<svg style="left:590.6px;top:441px" width="10.8" height="12" viewBox="0 0 10.8 12"><path d="M0.600 2.600 a2 2 0 0 1 2 -2 h5.800 a2 2 0 0 1 2 2 v5 l-4.900 4.200 l-4.900 -4.200z" fill="#f5a000" stroke="#0e0e12" stroke-width="1"/></svg>
<svg style="left:610.6px;top:441px" width="10.8" height="12" viewBox="0 0 10.8 12"><path d="M0.600 2.600 a2 2 0 0 1 2 -2 h5.800 a2 2 0 0 1 2 2 v5 l-4.900 4.200 l-4.900 -4.200z" fill="#e62800" stroke="#0e0e12" stroke-width="1"/></svg>
<svg style="left:630.6px;top:441px" width="10.8" height="12" viewBox="0 0 10.8 12"><path d="M0.600 2.600 a2 2 0 0 1 2 -2 h5.800 a2 2 0 0 1 2 2 v5 l-4.900 4.200 l-4.900 -4.200z" fill="#ff4acd" stroke="#0e0e12" stroke-width="1"/></svg>
<svg style="left:650.6px;top:441px" width="10.8" height="12" viewBox="0 0 10.8 12"><path d="M0.600 2.600 a2 2 0 0 1 2 -2 h5.800 a2 2 0 0 1 2 2 v5 l-4.900 4.200 l-4.900 -4.200z" fill="#9614ff" stroke="#0e0e12" stroke-width="1"/></svg>
<svg style="left:670.6px;top:441px" width="10.8" height="12" viewBox="0 0 10.8 12"><path d="M0.600 2.600 a2 2 0 0 1 2 -2 h5.800 a2 2 0 0 1 2 2 v5 l-4.900 4.200 l-4.900 -4.200z" fill="#c23070" stroke="#0e0e12" stroke-width="1"/></svg>
<svg style="left:690.6px;top:441px" width="10.8" height="12" viewBox="0 0 10.8 12"><path d="M0.600 2.600 a2 2 0 0 1 2 -2 h5.800 a2 2 0 0 1 2 2 v5 l-4.900 4.200 l-4.900 -4.200z" fill="#f8a0bc" stroke="#0e0e12" stroke-width="1"/></svg>
<svg style="left:710.6px;top:441px" width="10.8" height="12" viewBox="0 0 10.8 12"><path d="M0.600 2.600 a2 2 0 0 1 2 -2 h5.800 a2 2 0 0 1 2 2 v5 l-4.900 4.200 l-4.900 -4.200z" fill="#b0a0dc" stroke="#0e0e12" stroke-width="1"/></svg>
<svg style="left:730.6px;top:441px" width="10.8" height="12" viewBox="0 0 10.8 12"><path d="M0.600 2.600 a2 2 0 0 1 2 -2 h5.800 a2 2 0 0 1 2 2 v5 l-4.900 4.200 l-4.900 -4.200z" fill="#90d8f8" stroke="#0e0e12" stroke-width="1"/></svg>
<svg style="left:750.6px;top:441px" width="10.8" height="12" viewBox="0 0 10.8 12"><path d="M0.600 2.600 a2 2 0 0 1 2 -2 h5.800 a2 2 0 0 1 2 2 v5 l-4.900 4.200 l-4.900 -4.200z" fill="#78d818" stroke="#0e0e12" stroke-width="1"/></svg>
<svg style="left:770.6px;top:441px" width="10.8" height="12" viewBox="0 0 10.8 12"><path d="M0.600 2.600 a2 2 0 0 1 2 -2 h5.800 a2 2 0 0 1 2 2 v5 l-4.900 4.200 l-4.900 -4.200z" fill="#d0e848" stroke="#0e0e12" stroke-width="1"/></svg>
<svg style="left:790.6px;top:441px" width="10.8" height="12" viewBox="0 0 10.8 12"><path d="M0.600 2.600 a2 2 0 0 1 2 -2 h5.800 a2 2 0 0 1 2 2 v5 l-4.900 4.200 l-4.900 -4.200z" fill="#c8986a" stroke="#0e0e12" stroke-width="1"/></svg>
<svg style="left:810.6px;top:441px" width="10.8" height="12" viewBox="0 0 10.8 12"><path d="M0.600 2.600 a2 2 0 0 1 2 -2 h5.800 a2 2 0 0 1 2 2 v5 l-4.900 4.200 l-4.900 -4.200z" fill="#705040" stroke="#0e0e12" stroke-width="1"/></svg>
<svg style="left:830.6px;top:441px" width="10.8" height="12" viewBox="0 0 10.8 12"><path d="M0.600 2.600 a2 2 0 0 1 2 -2 h5.800 a2 2 0 0 1 2 2 v5 l-4.900 4.200 l-4.900 -4.200z" fill="#f4ece0" stroke="#0e0e12" stroke-width="1"/></svg>
<div class="a" style="left:462px;top:478.2px;width:163.5px;height:28.6px;background:transparent;border:1px solid #48484e;border-radius:14px"></div>
<div class="t" style="left:343.75px;width:400px;text-align:center;top:485px;font-size:15px;color:#c6c6ca;font-weight:normal;">Remove Marker</div>
<div class="a" style="left:743.5px;top:478.2px;width:128.5px;height:28.6px;background:transparent;border:1px solid #48484e;border-radius:14px"></div>
<div class="t" style="left:607.75px;width:400px;text-align:center;top:485px;font-size:15px;color:#c6c6ca;font-weight:normal;">Done</div>
</div></body></html>
